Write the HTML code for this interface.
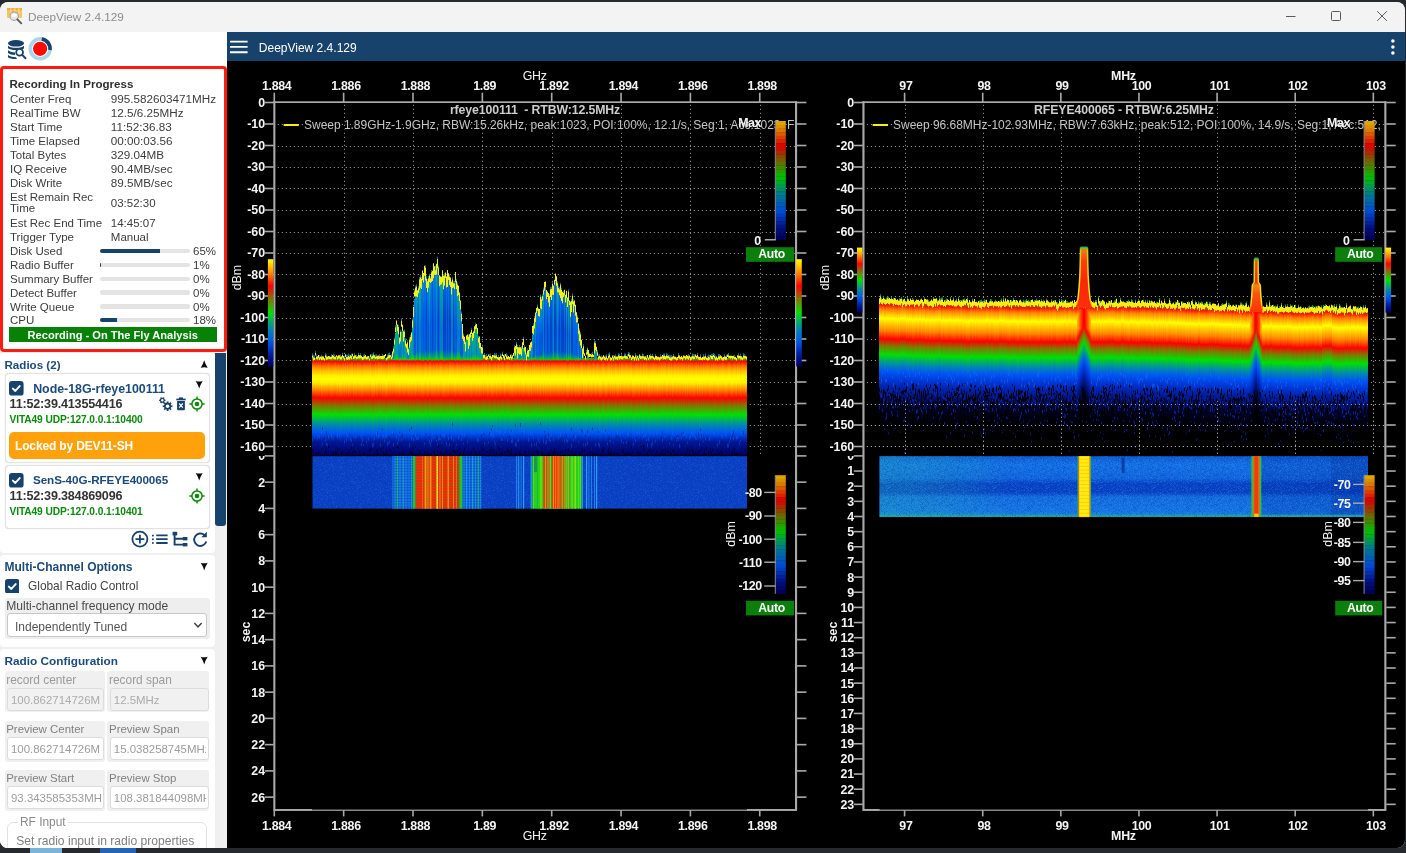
<!DOCTYPE html>
<html><head><meta charset="utf-8"><title>DeepView 2.4.129</title><style>
html,body{margin:0;padding:0}
body{width:1406px;height:853px;overflow:hidden;position:relative;background:#262a2e;font-family:"Liberation Sans",sans-serif;}
.b{position:absolute;display:block}
.t{position:absolute;white-space:nowrap;font-family:"Liberation Sans",sans-serif;}
#win{position:absolute;left:0;top:1.8px;width:1404.7px;height:846.2px;border-radius:8px;overflow:hidden;background:#f0f0f0}
#in{position:absolute;left:0;top:-1.8px;width:1406px;height:853px;will-change:transform}
</style></head>
<body>
<div class="b" style="left:30px;top:848px;width:32px;height:5px;background:#7ab4d8"></div><div class="b" style="left:100px;top:848px;width:36px;height:5px;background:#2464b4"></div>
<div id="win"><div id="in">
<div class="b" style="left:0px;top:1.8px;width:1404.7px;height:30.2px;background:#f3f3f3;border-radius:8px 8px 0 0;"></div>
<svg class="b" style="left:6px;top:7px" width="18" height="18" viewBox="0 0 18 18">
      <rect x="1" y="1" width="15" height="10" rx="1" fill="#f6c460"/>
      <rect x="1" y="1" width="15" height="2.2" fill="#f0b040"/>
      <rect x="4" y="1.5" width="1.5" height="9" fill="#f9d890"/><rect x="8" y="1.5" width="1.5" height="9" fill="#f9d890"/><rect x="12" y="1.5" width="1.5" height="9" fill="#f9d890"/>
      <circle cx="8.2" cy="9.2" r="4.2" fill="#e8e8e8" stroke="#a0a0a0" stroke-width="1.1"/>
      <ellipse cx="8.2" cy="8.2" rx="2.6" ry="1.6" fill="#ffffff"/>
      <path d="M11.3 12.3 L15.3 16.3" stroke="#555" stroke-width="1.8" stroke-linecap="round"/>
    </svg>
<div class="t" style="left:28px;top:8.80px;height:16px;line-height:16px;font-size:11.75px;color:#8c8c8c;font-weight:400;">DeepView 2.4.129</div>
<svg class="b" style="left:1280px;top:6px" width="115" height="22" viewBox="1280 6 115 22">
      <path d="M1286 16.5 H1295.5" stroke="#5a5a5a" stroke-width="1" fill="none"/>
      <rect x="1331.5" y="11.5" width="9" height="9" rx="1" stroke="#5a5a5a" stroke-width="1" fill="none"/>
      <path d="M1377.2 11.2 L1386.9 20.9 M1386.9 11.2 L1377.2 20.9" stroke="#5a5a5a" stroke-width="1" fill="none"/>
    </svg>
<div class="b" style="left:227px;top:31.6px;width:1177.7px;height:30.1px;background:#17426b;"></div>
<svg class="b" style="left:229px;top:38px" width="22" height="18" viewBox="229 38 22 18">
      <path d="M230 41.6 H247.6 M230 46.9 H247.6 M230 52.2 H247.6" stroke="#fff" stroke-width="1.9" fill="none"/></svg>
<div class="t" style="left:258.8px;top:39.50px;height:16px;line-height:16px;font-size:12.0px;color:#ffffff;font-weight:400;">DeepView 2.4.129</div>
<svg class="b" style="left:1388px;top:38px" width="10" height="20" viewBox="1388 38 10 20">
      <circle cx="1392.9" cy="40.9" r="1.75" fill="#fff"/><circle cx="1392.9" cy="46.95" r="1.75" fill="#fff"/><circle cx="1392.9" cy="53" r="1.75" fill="#fff"/></svg>
<div class="b" style="left:0px;top:32px;width:227px;height:34px;background:#ffffff;"></div>
<svg class="b" style="left:6px;top:38px" width="22" height="22" viewBox="6 38 22 22">
      <ellipse cx="16" cy="43.3" rx="8" ry="3.3" fill="#17426b"/>
      <path d="M8 45.5 C9.5 48.6 22.5 48.6 24 45.5 L24 48.5 C22.5 49.6 19 50 16 50 C12 50 9.5 49.2 8 48.2 Z" fill="#17426b"/>
      <path d="M8 50 C9 51.5 12 52.3 15 52.4 L15 55 C12 54.9 9.5 54.2 8 53 Z" fill="#17426b"/>
      <path d="M8 54.8 C9 56.2 12.5 57.2 16 57.3 L17 59 C13 59.3 9.5 58.5 8 57.2 Z" fill="#17426b"/>
      <circle cx="19.6" cy="52.2" r="3.4" fill="#fff" stroke="#17426b" stroke-width="1.8"/>
      <path d="M22.2 54.9 L25.5 58.3" stroke="#17426b" stroke-width="2" stroke-linecap="round"/>
    </svg>
<svg class="b" style="left:27px;top:36px" width="27" height="27" viewBox="27 36 27 27">
      <circle cx="40.2" cy="48.8" r="9.9" fill="none" stroke="#a9d6e8" stroke-width="3.6"/>
      <path d="M41.8 39 A9.9 9.9 0 0 1 50 50" fill="none" stroke="#17426b" stroke-width="3.6"/>
      <circle cx="40.1" cy="48.8" r="7.1" fill="#ff0a00"/>
    </svg>
<div class="b" style="left:0px;top:352px;width:227px;height:500px;background:#f0f0f0;"></div>
<div class="b" style="left:0px;top:66px;width:227px;height:286px;background:#fff;border:3px solid #ff1b10;border-radius:4px;box-sizing:border-box;"></div>
<div class="t" style="left:9.5px;top:75.80px;height:16px;line-height:16px;font-size:11.55px;color:#303030;font-weight:700;">Recording In Progress</div>
<div class="t" style="left:10px;top:90.80px;height:16px;line-height:16px;font-size:11.5px;color:#3c3c3c;font-weight:400;">Center Freq</div>
<div class="t" style="left:110.8px;top:90.80px;height:16px;line-height:16px;font-size:11.7px;color:#3c3c3c;font-weight:400;">995.582603471MHz</div>
<div class="t" style="left:10px;top:104.60px;height:16px;line-height:16px;font-size:11.5px;color:#3c3c3c;font-weight:400;">RealTime BW</div>
<div class="t" style="left:110.8px;top:104.60px;height:16px;line-height:16px;font-size:11.7px;color:#3c3c3c;font-weight:400;">12.5/6.25MHz</div>
<div class="t" style="left:10px;top:118.70px;height:16px;line-height:16px;font-size:11.5px;color:#3c3c3c;font-weight:400;">Start Time</div>
<div class="t" style="left:110.8px;top:118.70px;height:16px;line-height:16px;font-size:11.7px;color:#3c3c3c;font-weight:400;">11:52:36.83</div>
<div class="t" style="left:10px;top:132.60px;height:16px;line-height:16px;font-size:11.5px;color:#3c3c3c;font-weight:400;">Time Elapsed</div>
<div class="t" style="left:110.8px;top:132.60px;height:16px;line-height:16px;font-size:11.7px;color:#3c3c3c;font-weight:400;">00:00:03.56</div>
<div class="t" style="left:10px;top:146.60px;height:16px;line-height:16px;font-size:11.5px;color:#3c3c3c;font-weight:400;">Total Bytes</div>
<div class="t" style="left:110.8px;top:146.60px;height:16px;line-height:16px;font-size:11.7px;color:#3c3c3c;font-weight:400;">329.04MB</div>
<div class="t" style="left:10px;top:160.60px;height:16px;line-height:16px;font-size:11.5px;color:#3c3c3c;font-weight:400;">IQ Receive</div>
<div class="t" style="left:110.8px;top:160.60px;height:16px;line-height:16px;font-size:11.7px;color:#3c3c3c;font-weight:400;">90.4MB/sec</div>
<div class="t" style="left:10px;top:174.60px;height:16px;line-height:16px;font-size:11.5px;color:#3c3c3c;font-weight:400;">Disk Write</div>
<div class="t" style="left:110.8px;top:174.60px;height:16px;line-height:16px;font-size:11.7px;color:#3c3c3c;font-weight:400;">89.5MB/sec</div>
<div class="t" style="left:10px;top:188.80px;height:16px;line-height:16px;font-size:11.5px;color:#3c3c3c;font-weight:400;">Est Remain Rec</div>
<div class="t" style="left:10px;top:199.60px;height:16px;line-height:16px;font-size:11.5px;color:#3c3c3c;font-weight:400;">Time</div>
<div class="t" style="left:110.8px;top:194.60px;height:16px;line-height:16px;font-size:11.5px;color:#3c3c3c;font-weight:400;">03:52:30</div>
<div class="t" style="left:10px;top:214.60px;height:16px;line-height:16px;font-size:11.5px;color:#3c3c3c;font-weight:400;">Est Rec End Time</div>
<div class="t" style="left:110.8px;top:214.60px;height:16px;line-height:16px;font-size:11.5px;color:#3c3c3c;font-weight:400;">14:45:07</div>
<div class="t" style="left:10px;top:229.00px;height:16px;line-height:16px;font-size:11.5px;color:#3c3c3c;font-weight:400;">Trigger Type</div>
<div class="t" style="left:110.8px;top:229.00px;height:16px;line-height:16px;font-size:11.5px;color:#3c3c3c;font-weight:400;">Manual</div>
<div class="t" style="left:10px;top:242.80px;height:16px;line-height:16px;font-size:11.5px;color:#3c3c3c;font-weight:400;">Disk Used</div>
<div class="b" style="left:100px;top:248.60000000000002px;width:90px;height:4.4px;background:#e4e4e4;border-radius:2px;"></div>
<div class="b" style="left:100px;top:248.60000000000002px;width:60.0px;height:4.4px;background:#17426b;border-radius:2px 0 0 2px;"></div>
<div class="t" style="left:193px;top:242.80px;height:16px;line-height:16px;font-size:11.5px;color:#3c3c3c;font-weight:400;">65%</div>
<div class="t" style="left:10px;top:256.80px;height:16px;line-height:16px;font-size:11.5px;color:#3c3c3c;font-weight:400;">Radio Buffer</div>
<div class="b" style="left:100px;top:262.6px;width:90px;height:4.4px;background:#e4e4e4;border-radius:2px;"></div>
<div class="b" style="left:100px;top:262.6px;width:1.2px;height:4.4px;background:#17426b;border-radius:2px 0 0 2px;"></div>
<div class="t" style="left:193px;top:256.80px;height:16px;line-height:16px;font-size:11.5px;color:#3c3c3c;font-weight:400;">1%</div>
<div class="t" style="left:10px;top:270.80px;height:16px;line-height:16px;font-size:11.5px;color:#3c3c3c;font-weight:400;">Summary Buffer</div>
<div class="b" style="left:100px;top:276.6px;width:90px;height:4.4px;background:#e4e4e4;border-radius:2px;"></div>
<div class="t" style="left:193px;top:270.80px;height:16px;line-height:16px;font-size:11.5px;color:#3c3c3c;font-weight:400;">0%</div>
<div class="t" style="left:10px;top:284.60px;height:16px;line-height:16px;font-size:11.5px;color:#3c3c3c;font-weight:400;">Detect Buffer</div>
<div class="b" style="left:100px;top:290.40000000000003px;width:90px;height:4.4px;background:#e4e4e4;border-radius:2px;"></div>
<div class="t" style="left:193px;top:284.60px;height:16px;line-height:16px;font-size:11.5px;color:#3c3c3c;font-weight:400;">0%</div>
<div class="t" style="left:10px;top:298.60px;height:16px;line-height:16px;font-size:11.5px;color:#3c3c3c;font-weight:400;">Write Queue</div>
<div class="b" style="left:100px;top:304.40000000000003px;width:90px;height:4.4px;background:#e4e4e4;border-radius:2px;"></div>
<div class="t" style="left:193px;top:298.60px;height:16px;line-height:16px;font-size:11.5px;color:#3c3c3c;font-weight:400;">0%</div>
<div class="t" style="left:10px;top:312.30px;height:16px;line-height:16px;font-size:11.5px;color:#3c3c3c;font-weight:400;">CPU</div>
<div class="b" style="left:100px;top:318.1px;width:90px;height:4.4px;background:#e4e4e4;border-radius:2px;"></div>
<div class="b" style="left:100px;top:318.1px;width:17.25px;height:4.4px;background:#17426b;border-radius:2px 0 0 2px;"></div>
<div class="t" style="left:193px;top:312.30px;height:16px;line-height:16px;font-size:11.5px;color:#3c3c3c;font-weight:400;">18%</div>
<div class="b" style="left:9px;top:327px;width:207.5px;height:14.8px;background:#078207;"></div>
<div class="t" style="left:9px;top:327px;width:207.5px;height:15px;line-height:17.6px;text-align:center;font-size:11.1px;color:#fff;font-weight:700;letter-spacing:0px">Recording - On The Fly Analysis</div>
<div class="b" style="left:0px;top:353px;width:214.5px;height:199.5px;background:#fff;border-radius:4px;"></div>
<div class="t" style="left:4.5px;top:356.60px;height:16px;line-height:16px;font-size:11.6px;color:#1b4b7a;font-weight:700;">Radios (2)</div>
<svg class="b" style="left:0;top:0" width="227" height="853"><path d="M204.20000000000002 360.2 Q205.20000000000002 363.8 207.70000000000002 367.8 Q204.20000000000002 366.8 200.70000000000002 367.8 Q203.20000000000002 363.8 204.20000000000002 360.2Z" fill="#0c0c0c"/></svg>
<div class="b" style="left:4.5px;top:372.5px;width:205px;height:90.5px;background:#fff;border:1px solid #e2e2e2;border-radius:4px;box-sizing:border-box;box-shadow:0 0 1px #ccc;"></div>
<svg class="b" style="left:9px;top:381px" width="14.6" height="14.6" viewBox="0 0 15 15"><rect x="0" y="0" width="15" height="15" rx="3" fill="#17426b"/><path d="M4 7.8 L6.5 10.2 L11 5.2" stroke="#fff" stroke-width="2" fill="none" stroke-linecap="round" stroke-linejoin="round"/></svg>
<div class="t" style="left:33.2px;top:380.80px;height:16px;line-height:16px;font-size:12.45px;color:#1b4b7a;font-weight:700;letter-spacing:-0.05px;">Node-18G-rfeye100111</div>
<svg class="b" style="left:0;top:0" width="227" height="853"><path d="M199.20000000000002 388.6 Q200.20000000000002 385.0 202.70000000000002 381.0 Q199.20000000000002 382.0 195.70000000000002 381.0 Q198.20000000000002 385.0 199.20000000000002 388.6Z" fill="#0c0c0c"/></svg>
<div class="t" style="left:9.6px;top:395.80px;height:16px;line-height:16px;font-size:12.6px;color:#333;font-weight:700;letter-spacing:-0.2px;">11:52:39.413554416</div>
<svg class="b" style="left:157px;top:396px" width="17" height="16" viewBox="157 396 17 16"><polygon points="165.53,399.64 165.53,400.96 164.67,401.12 164.20,401.94 164.48,402.77 163.35,403.43 162.77,402.76 161.83,402.76 161.25,403.43 160.12,402.77 160.40,401.94 159.93,401.12 159.07,400.96 159.07,399.64 159.93,399.48 160.40,398.66 160.12,397.83 161.25,397.17 161.83,397.84 162.77,397.84 163.35,397.17 164.48,397.83 164.20,398.66 164.67,399.48" fill="#17426b"/><circle cx="162.3" cy="400.3" r="1.19" fill="#fff"/><polygon points="172.40,405.23 172.40,407.17 171.25,406.95 170.71,408.25 171.68,408.91 170.31,410.28 169.65,409.31 168.35,409.85 168.57,411.00 166.63,411.00 166.85,409.85 165.55,409.31 164.89,410.28 163.52,408.91 164.49,408.25 163.95,406.95 162.80,407.17 162.80,405.23 163.95,405.45 164.49,404.15 163.52,403.49 164.89,402.12 165.55,403.09 166.85,402.55 166.63,401.40 168.57,401.40 168.35,402.55 169.65,403.09 170.31,402.12 171.68,403.49 170.71,404.15 171.25,405.45" fill="#17426b"/><circle cx="167.6" cy="406.2" r="1.76" fill="#fff"/></svg>
<svg class="b" style="left:175px;top:396px" width="12" height="16" viewBox="175 396 12 16">
      <rect x="176.3" y="398.6" width="9.4" height="1.7" fill="#17426b"/><rect x="179" y="397.4" width="4" height="1.6" fill="#17426b"/>
      <path d="M177.1 401.1 H184.9 V409.2 Q184.9 410.3 183.8 410.3 H178.2 Q177.1 410.3 177.1 409.2 Z" fill="#17426b"/>
      <path d="M179.2 403.5 L182.8 407.6 M182.8 403.5 L179.2 407.6" stroke="#fff" stroke-width="1.2"/></svg>
<svg class="b" style="left:189px;top:396px" width="16" height="16" viewBox="-8 -8 16 16"><circle r="5.1" fill="none" stroke="#0b8a0b" stroke-width="1.5"/><circle r="2.3" fill="#0b8a0b"/><path d="M0 -7.6 V-5 M0 7.6 V5 M-7.6 0 H-5 M7.6 0 H5" stroke="#0b8a0b" stroke-width="1.5"/></svg>
<div class="t" style="left:9.5px;top:411.50px;height:16px;line-height:16px;font-size:10.2px;color:#0b8a0b;font-weight:700;letter-spacing:-0.1px;">VITA49 UDP:127.0.0.1:10400</div>
<div class="b" style="left:9px;top:431.8px;width:196px;height:27.4px;background:#ffa10a;border-radius:5px;"></div>
<div class="t" style="left:15px;top:437.80px;height:16px;line-height:16px;font-size:12.0px;color:#fff;font-weight:700;letter-spacing:-0.15px;">Locked by DEV11-SH</div>
<div class="b" style="left:4.5px;top:464.5px;width:205px;height:64px;background:#fff;border:1px solid #e2e2e2;border-radius:4px;box-sizing:border-box;box-shadow:0 0 1px #ccc;"></div>
<svg class="b" style="left:9px;top:473px" width="14.6" height="14.6" viewBox="0 0 15 15"><rect x="0" y="0" width="15" height="15" rx="3" fill="#17426b"/><path d="M4 7.8 L6.5 10.2 L11 5.2" stroke="#fff" stroke-width="2" fill="none" stroke-linecap="round" stroke-linejoin="round"/></svg>
<div class="t" style="left:33px;top:472.30px;height:16px;line-height:16px;font-size:11.7px;color:#1b4b7a;font-weight:700;letter-spacing:-0.1px;">SenS-40G-RFEYE400065</div>
<svg class="b" style="left:0;top:0" width="227" height="853"><path d="M199.20000000000002 480.6 Q200.20000000000002 477.0 202.70000000000002 473.0 Q199.20000000000002 474.0 195.70000000000002 473.0 Q198.20000000000002 477.0 199.20000000000002 480.6Z" fill="#0c0c0c"/></svg>
<div class="t" style="left:9.6px;top:487.60px;height:16px;line-height:16px;font-size:12.6px;color:#333;font-weight:700;letter-spacing:-0.2px;">11:52:39.384869096</div>
<svg class="b" style="left:189px;top:488px" width="16" height="16" viewBox="-8 -8 16 16"><circle r="5.1" fill="none" stroke="#0b8a0b" stroke-width="1.5"/><circle r="2.3" fill="#0b8a0b"/><path d="M0 -7.6 V-5 M0 7.6 V5 M-7.6 0 H-5 M7.6 0 H5" stroke="#0b8a0b" stroke-width="1.5"/></svg>
<div class="t" style="left:9.5px;top:503.60px;height:16px;line-height:16px;font-size:10.2px;color:#0b8a0b;font-weight:700;letter-spacing:-0.1px;">VITA49 UDP:127.0.0.1:10401</div>
<svg class="b" style="left:128px;top:529px" width="84" height="22" viewBox="128 529 84 22">
      <circle cx="139.9" cy="539.1" r="7.5" fill="none" stroke="#17426b" stroke-width="1.8"/>
      <path d="M135.5 539.1 H144.3 M139.9 534.7 V543.5" stroke="#17426b" stroke-width="1.8"/>
      <path d="M156.2 535.4 H167.6 M156.2 539.2 H167.6 M156.2 543 H167.6" stroke="#17426b" stroke-width="1.8"/>
      <rect x="152" y="534.8" width="1.8" height="1.6" fill="#17426b"/><rect x="152" y="538.5" width="1.8" height="1.6" fill="#17426b"/><rect x="152" y="542.2" width="1.8" height="1.6" fill="#17426b"/>
      <rect x="172.6" y="531.8" width="4.6" height="3.6" fill="#17426b"/><rect x="182.8" y="537" width="4.6" height="3.4" fill="#17426b"/><rect x="182.8" y="543" width="4.6" height="3.4" fill="#17426b"/>
      <path d="M174.6 535 V544.6 H183 M174.6 538.8 H183" stroke="#17426b" stroke-width="1.9" fill="none"/>
      <path d="M204.6 535.2 A6.2 6.2 0 1 0 206.3 541.5" stroke="#17426b" stroke-width="1.9" fill="none"/>
      <path d="M206.8 531.8 V537.3 H201.3 Z" fill="#17426b"/>
    </svg>
<div class="b" style="left:214.9px;top:352.5px;width:11.6px;height:173.6px;background:#17426b;border-radius:0 0 3px 3px;"></div>
<div class="b" style="left:0px;top:555px;width:214.5px;height:92px;background:#fff;border-radius:4px;"></div>
<div class="t" style="left:4.5px;top:558.80px;height:16px;line-height:16px;font-size:12.0px;color:#1b4b7a;font-weight:700;">Multi-Channel Options</div>
<svg class="b" style="left:0;top:0" width="227" height="853"><path d="M204.20000000000002 570.4 Q205.20000000000002 566.8 207.70000000000002 562.8 Q204.20000000000002 563.8 200.70000000000002 562.8 Q203.20000000000002 566.8 204.20000000000002 570.4Z" fill="#0c0c0c"/></svg>
<svg class="b" style="left:4.5px;top:578.6px" width="14.6" height="14.6" viewBox="0 0 15 15"><rect x="0" y="0" width="15" height="15" rx="3" fill="#17426b"/><path d="M4 7.8 L6.5 10.2 L11 5.2" stroke="#fff" stroke-width="2" fill="none" stroke-linecap="round" stroke-linejoin="round"/></svg>
<div class="t" style="left:28px;top:578.00px;height:16px;line-height:16px;font-size:11.9px;color:#444;font-weight:400;">Global Radio Control</div>
<div class="b" style="left:4.5px;top:597.5px;width:205px;height:41.5px;background:#eeeeee;border-radius:3px;"></div>
<div class="t" style="left:6.2px;top:598.30px;height:16px;line-height:16px;font-size:12.1px;color:#4a4a4a;font-weight:400;">Multi-channel frequency mode</div>
<div class="b" style="left:6.7px;top:613.3px;width:200.8px;height:23.8px;background:#fff;border:1px solid #c8c8c8;border-radius:3px;box-sizing:border-box;"></div>
<div class="t" style="left:15px;top:619.00px;height:16px;line-height:16px;font-size:12.0px;color:#555;font-weight:400;">Independently Tuned</div>
<svg class="b" style="left:192px;top:620px" width="12" height="10" viewBox="192 620 12 10"><path d="M194.3 623 L198 626.8 L201.7 623" stroke="#444" stroke-width="1.5" fill="none"/></svg>
<div class="b" style="left:0px;top:649px;width:214.5px;height:210px;background:#fff;border-radius:4px 4px 0 0;"></div>
<div class="t" style="left:4.5px;top:652.80px;height:16px;line-height:16px;font-size:11.8px;color:#1b4b7a;font-weight:700;">Radio Configuration</div>
<svg class="b" style="left:0;top:0" width="227" height="853"><path d="M204.20000000000002 664.4 Q205.20000000000002 660.8 207.70000000000002 656.8 Q204.20000000000002 657.8 200.70000000000002 656.8 Q203.20000000000002 660.8 204.20000000000002 664.4Z" fill="#0c0c0c"/></svg>
<div class="b" style="left:4.5px;top:671.3px;width:100.5px;height:41px;background:#f0f0f0;border-radius:3px;"></div>
<div class="t" style="left:6.2px;top:671.50px;height:16px;line-height:16px;font-size:11.9px;color:#9a9a9a;font-weight:400;">record center</div>
<div class="b" style="left:6.7px;top:687.5999999999999px;width:97.5px;height:23.5px;background:#f1f1f1;border:1px solid #dcdcdc;border-radius:3px;box-sizing:border-box;overflow:hidden;"></div>
<div class="t" style="left:11.0px;top:691.8px;width:91.0px;overflow:hidden;height:16px;line-height:16px;font-size:11.45px;color:#ababab;">100.862714726M</div>
<div class="b" style="left:107.3px;top:671.3px;width:102.2px;height:41px;background:#f0f0f0;border-radius:3px;"></div>
<div class="t" style="left:109.0px;top:671.50px;height:16px;line-height:16px;font-size:11.9px;color:#9a9a9a;font-weight:400;">record span</div>
<div class="b" style="left:109.5px;top:687.5999999999999px;width:99.2px;height:23.5px;background:#f1f1f1;border:1px solid #dcdcdc;border-radius:3px;box-sizing:border-box;overflow:hidden;"></div>
<div class="t" style="left:113.8px;top:691.8px;width:92.7px;overflow:hidden;height:16px;line-height:16px;font-size:11.45px;color:#ababab;">12.5MHz</div>
<div class="b" style="left:4.5px;top:720.6px;width:100.5px;height:41px;background:#f0f0f0;border-radius:3px;"></div>
<div class="t" style="left:6.2px;top:720.80px;height:16px;line-height:16px;font-size:11.45px;color:#808080;font-weight:400;">Preview Center</div>
<div class="b" style="left:6.7px;top:736.9px;width:97.5px;height:23.5px;background:#fff;border:1px solid #dcdcdc;border-radius:3px;box-sizing:border-box;overflow:hidden;"></div>
<div class="t" style="left:11.0px;top:741.1px;width:91.0px;overflow:hidden;height:16px;line-height:16px;font-size:11.45px;color:#9c9c9c;">100.862714726M</div>
<div class="b" style="left:107.3px;top:720.6px;width:102.2px;height:41px;background:#f0f0f0;border-radius:3px;"></div>
<div class="t" style="left:109.0px;top:720.80px;height:16px;line-height:16px;font-size:11.45px;color:#808080;font-weight:400;">Preview Span</div>
<div class="b" style="left:109.5px;top:736.9px;width:99.2px;height:23.5px;background:#fff;border:1px solid #dcdcdc;border-radius:3px;box-sizing:border-box;overflow:hidden;"></div>
<div class="t" style="left:113.8px;top:741.1px;width:92.7px;overflow:hidden;height:16px;line-height:16px;font-size:11.45px;color:#9c9c9c;">15.038258745MHz</div>
<div class="b" style="left:4.5px;top:769.6px;width:100.5px;height:41px;background:#f0f0f0;border-radius:3px;"></div>
<div class="t" style="left:6.2px;top:769.80px;height:16px;line-height:16px;font-size:11.45px;color:#808080;font-weight:400;">Preview Start</div>
<div class="b" style="left:6.7px;top:785.9px;width:97.5px;height:23.5px;background:#fff;border:1px solid #dcdcdc;border-radius:3px;box-sizing:border-box;overflow:hidden;"></div>
<div class="t" style="left:11.0px;top:790.1px;width:91.0px;overflow:hidden;height:16px;line-height:16px;font-size:11.45px;color:#9c9c9c;">93.343585353MHz</div>
<div class="b" style="left:107.3px;top:769.6px;width:102.2px;height:41px;background:#f0f0f0;border-radius:3px;"></div>
<div class="t" style="left:109.0px;top:769.80px;height:16px;line-height:16px;font-size:11.45px;color:#808080;font-weight:400;">Preview Stop</div>
<div class="b" style="left:109.5px;top:785.9px;width:99.2px;height:23.5px;background:#fff;border:1px solid #dcdcdc;border-radius:3px;box-sizing:border-box;overflow:hidden;"></div>
<div class="t" style="left:113.8px;top:790.1px;width:92.7px;overflow:hidden;height:16px;line-height:16px;font-size:11.45px;color:#9c9c9c;">108.381844098MHz</div>
<div class="b" style="left:6.8px;top:822.2px;width:200.4px;height:40px;border:1.5px solid #dfe3e8;border-radius:6px;box-sizing:border-box;"></div>
<div class="b" style="left:17.5px;top:815px;width:50px;height:14px;background:#fff;"></div>
<div class="t" style="left:20px;top:813.80px;height:16px;line-height:16px;font-size:11.9px;color:#8a8a8a;font-weight:400;">RF Input</div>
<div class="t" style="left:16.2px;top:832.80px;height:16px;line-height:16px;font-size:12.1px;color:#808080;font-weight:400;">Set radio input in radio properties</div>
<svg class="b" style="left:227px;top:61px" width="1178" height="787" viewBox="227 61 1178 787" font-family="Liberation Sans, sans-serif"><defs><pattern id="nz" width="53" height="53" patternUnits="userSpaceOnUse"><path d="M5 0.5h1M6 0.5h1M15 0.5h1M21 0.5h1M25 0.5h1M37 0.5h1M38 0.5h1M12 1.5h1M15 1.5h1M18 1.5h1M22 1.5h1M24 1.5h1M32 1.5h1M34 1.5h1M38 1.5h1M39 1.5h1M7 2.5h1M10 2.5h1M13 2.5h1M20 2.5h1M21 2.5h1M35 2.5h1M45 2.5h1M4 3.5h1M15 3.5h1M24 3.5h1M25 3.5h1M40 3.5h1M44 3.5h1M51 3.5h1M21 4.5h1M24 4.5h1M31 4.5h1M32 4.5h1M33 4.5h1M34 4.5h1M35 4.5h1M38 4.5h1M48 4.5h1M52 4.5h1M17 5.5h1M27 5.5h1M35 5.5h1M37 5.5h1M38 5.5h1M40 5.5h1M41 5.5h1M42 5.5h1M45 5.5h1M47 5.5h1M1 6.5h1M5 6.5h1M8 6.5h1M22 6.5h1M35 6.5h1M36 6.5h1M4 7.5h1M11 7.5h1M44 7.5h1M45 7.5h1M51 7.5h1M7 8.5h1M10 8.5h1M13 8.5h1M27 8.5h1M39 8.5h1M41 8.5h1M50 8.5h1M6 9.5h1M17 9.5h1M19 9.5h1M20 9.5h1M30 9.5h1M38 9.5h1M0 10.5h1M8 10.5h1M15 10.5h1M18 10.5h1M21 10.5h1M27 10.5h1M40 10.5h1M41 10.5h1M42 10.5h1M9 11.5h1M12 11.5h1M19 11.5h1M20 11.5h1M23 11.5h1M24 11.5h1M28 11.5h1M31 11.5h1M34 11.5h1M39 11.5h1M40 11.5h1M52 11.5h1M3 12.5h1M4 12.5h1M5 12.5h1M7 12.5h1M8 12.5h1M17 12.5h1M21 12.5h1M24 12.5h1M47 12.5h1M49 12.5h1M0 13.5h1M11 13.5h1M14 13.5h1M16 13.5h1M17 13.5h1M20 13.5h1M21 13.5h1M24 13.5h1M36 13.5h1M38 13.5h1M39 13.5h1M43 13.5h1M1 14.5h1M9 14.5h1M12 14.5h1M23 14.5h1M45 14.5h1M50 14.5h1M5 15.5h1M8 15.5h1M9 15.5h1M30 15.5h1M31 15.5h1M35 15.5h1M42 15.5h1M44 15.5h1M47 15.5h1M49 15.5h1M2 16.5h1M9 16.5h1M17 16.5h1M39 16.5h1M47 16.5h1M1 17.5h1M20 17.5h1M23 17.5h1M26 17.5h1M32 17.5h1M35 17.5h1M40 17.5h1M43 17.5h1M49 17.5h1M50 17.5h1M3 18.5h1M7 18.5h1M11 18.5h1M12 18.5h1M13 18.5h1M16 18.5h1M27 18.5h1M47 18.5h1M51 18.5h1M52 18.5h1M6 19.5h1M9 19.5h1M24 19.5h1M39 19.5h1M43 19.5h1M9 20.5h1M13 20.5h1M14 20.5h1M17 20.5h1M27 20.5h1M36 20.5h1M37 20.5h1M39 20.5h1M49 20.5h1M52 20.5h1M3 21.5h1M4 21.5h1M15 21.5h1M17 21.5h1M21 21.5h1M33 21.5h1M42 21.5h1M50 21.5h1M2 22.5h1M7 22.5h1M15 22.5h1M31 22.5h1M50 22.5h1M8 23.5h1M19 23.5h1M29 23.5h1M38 23.5h1M39 23.5h1M44 23.5h1M50 23.5h1M1 24.5h1M16 24.5h1M39 24.5h1M49 24.5h1M1 25.5h1M6 25.5h1M11 25.5h1M14 25.5h1M15 25.5h1M16 25.5h1M24 25.5h1M28 25.5h1M32 25.5h1M45 25.5h1M51 25.5h1M52 25.5h1M11 26.5h1M14 26.5h1M19 26.5h1M24 26.5h1M30 26.5h1M32 26.5h1M36 26.5h1M42 26.5h1M44 26.5h1M46 26.5h1M49 26.5h1M2 27.5h1M6 27.5h1M7 27.5h1M16 27.5h1M29 27.5h1M35 27.5h1M43 27.5h1M2 28.5h1M18 28.5h1M21 28.5h1M28 28.5h1M36 28.5h1M42 28.5h1M8 29.5h1M11 29.5h1M16 29.5h1M18 29.5h1M27 29.5h1M34 29.5h1M36 29.5h1M41 29.5h1M52 29.5h1M9 30.5h1M18 30.5h1M23 30.5h1M29 30.5h1M31 30.5h1M40 30.5h1M42 30.5h1M43 30.5h1M47 30.5h1M50 30.5h1M6 31.5h1M12 31.5h1M17 31.5h1M34 31.5h1M42 31.5h1M7 32.5h1M13 32.5h1M16 32.5h1M26 32.5h1M29 32.5h1M39 32.5h1M44 32.5h1M45 32.5h1M46 32.5h1M47 32.5h1M0 33.5h1M4 33.5h1M10 33.5h1M13 33.5h1M22 33.5h1M25 33.5h1M32 33.5h1M50 33.5h1M47 34.5h1M0 35.5h1M6 35.5h1M19 35.5h1M21 35.5h1M24 35.5h1M33 35.5h1M35 35.5h1M38 35.5h1M51 35.5h1M14 36.5h1M21 36.5h1M25 36.5h1M30 36.5h1M35 36.5h1M38 36.5h1M39 36.5h1M49 36.5h1M50 36.5h1M0 37.5h1M9 37.5h1M15 37.5h1M19 37.5h1M21 37.5h1M31 37.5h1M34 37.5h1M37 37.5h1M39 37.5h1M49 37.5h1M4 38.5h1M25 38.5h1M29 38.5h1M46 38.5h1M51 38.5h1M4 39.5h1M13 39.5h1M16 39.5h1M23 39.5h1M24 39.5h1M27 39.5h1M48 39.5h1M51 39.5h1M1 40.5h1M3 40.5h1M8 40.5h1M10 40.5h1M12 40.5h1M13 40.5h1M14 40.5h1M33 40.5h1M40 40.5h1M4 41.5h1M6 41.5h1M11 41.5h1M14 41.5h1M17 41.5h1M37 41.5h1M42 41.5h1M51 41.5h1M52 41.5h1M7 42.5h1M13 42.5h1M14 42.5h1M15 42.5h1M21 42.5h1M22 42.5h1M24 42.5h1M26 42.5h1M33 42.5h1M43 42.5h1M44 42.5h1M12 43.5h1M19 43.5h1M23 43.5h1M31 43.5h1M33 43.5h1M38 43.5h1M43 43.5h1M0 44.5h1M16 44.5h1M21 44.5h1M24 44.5h1M47 44.5h1M2 45.5h1M11 45.5h1M14 45.5h1M15 45.5h1M23 45.5h1M41 45.5h1M50 45.5h1M1 46.5h1M2 46.5h1M8 46.5h1M18 46.5h1M20 46.5h1M25 46.5h1M30 46.5h1M32 46.5h1M37 46.5h1M48 46.5h1M7 47.5h1M8 47.5h1M14 47.5h1M33 47.5h1M36 47.5h1M37 47.5h1M4 48.5h1M7 48.5h1M26 48.5h1M33 48.5h1M41 48.5h1M42 48.5h1M49 48.5h1M5 49.5h1M15 49.5h1M17 49.5h1M20 49.5h1M22 49.5h1M24 49.5h1M26 49.5h1M38 49.5h1M43 49.5h1M24 50.5h1M25 50.5h1M26 50.5h1M30 50.5h1M39 50.5h1M41 50.5h1M42 50.5h1M2 51.5h1M7 51.5h1M10 51.5h1M35 51.5h1M45 51.5h1M15 52.5h1M19 52.5h1M22 52.5h1M26 52.5h1M32 52.5h1" stroke="#49a8ff" stroke-width="1" opacity="0.2"/><path d="M0 0.5h1M8 0.5h1M9 0.5h1M24 0.5h1M39 0.5h1M43 0.5h1M2 1.5h1M8 1.5h1M11 1.5h1M19 1.5h1M31 1.5h1M35 1.5h1M41 1.5h1M2 2.5h1M3 2.5h1M24 2.5h1M29 2.5h1M32 2.5h1M38 2.5h1M39 2.5h1M41 2.5h1M42 2.5h1M51 2.5h1M3 3.5h1M6 3.5h1M9 3.5h1M10 3.5h1M16 3.5h1M18 3.5h1M32 3.5h1M37 3.5h1M39 3.5h1M42 3.5h1M0 4.5h1M1 4.5h1M8 4.5h1M13 4.5h1M16 4.5h1M25 4.5h1M26 4.5h1M40 4.5h1M41 4.5h1M46 4.5h1M0 5.5h1M14 5.5h1M25 5.5h1M44 5.5h1M12 6.5h1M13 6.5h1M14 6.5h1M27 6.5h1M42 6.5h1M43 6.5h1M44 6.5h1M46 6.5h1M47 6.5h1M50 6.5h1M2 7.5h1M3 7.5h1M7 7.5h1M26 7.5h1M27 7.5h1M32 7.5h1M33 7.5h1M34 7.5h1M35 7.5h1M39 7.5h1M41 7.5h1M47 7.5h1M2 8.5h1M8 8.5h1M18 8.5h1M22 8.5h1M33 8.5h1M36 8.5h1M48 8.5h1M49 8.5h1M3 9.5h1M8 9.5h1M18 9.5h1M23 9.5h1M24 9.5h1M32 9.5h1M35 9.5h1M36 9.5h1M48 9.5h1M6 10.5h1M20 10.5h1M43 10.5h1M44 10.5h1M50 10.5h1M1 11.5h1M8 11.5h1M10 11.5h1M14 11.5h1M15 11.5h1M16 11.5h1M18 11.5h1M21 11.5h1M33 11.5h1M36 11.5h1M42 11.5h1M46 11.5h1M47 11.5h1M48 11.5h1M6 12.5h1M11 12.5h1M18 12.5h1M22 12.5h1M29 12.5h1M37 12.5h1M40 12.5h1M41 12.5h1M1 13.5h1M19 13.5h1M25 13.5h1M27 13.5h1M34 13.5h1M35 13.5h1M41 13.5h1M45 13.5h1M5 14.5h1M18 14.5h1M24 14.5h1M25 14.5h1M42 14.5h1M44 14.5h1M47 14.5h1M52 14.5h1M4 15.5h1M6 15.5h1M16 15.5h1M17 15.5h1M23 15.5h1M27 15.5h1M28 15.5h1M34 15.5h1M36 15.5h1M43 15.5h1M50 15.5h1M51 15.5h1M1 16.5h1M8 16.5h1M15 16.5h1M16 16.5h1M28 16.5h1M29 16.5h1M40 16.5h1M51 16.5h1M8 17.5h1M10 17.5h1M13 17.5h1M14 17.5h1M17 17.5h1M19 17.5h1M21 17.5h1M24 17.5h1M25 17.5h1M33 17.5h1M36 17.5h1M38 17.5h1M41 17.5h1M45 17.5h1M52 17.5h1M0 18.5h1M10 18.5h1M17 18.5h1M21 18.5h1M26 18.5h1M37 18.5h1M41 18.5h1M44 18.5h1M45 18.5h1M46 18.5h1M14 19.5h1M21 19.5h1M23 19.5h1M29 19.5h1M48 19.5h1M2 20.5h1M10 20.5h1M16 20.5h1M32 20.5h1M33 20.5h1M41 20.5h1M42 20.5h1M13 21.5h1M22 21.5h1M26 21.5h1M30 21.5h1M31 21.5h1M41 21.5h1M44 21.5h1M45 21.5h1M47 21.5h1M0 22.5h1M1 22.5h1M10 22.5h1M11 22.5h1M12 22.5h1M16 22.5h1M19 22.5h1M21 22.5h1M24 22.5h1M36 22.5h1M39 22.5h1M45 22.5h1M7 23.5h1M11 23.5h1M18 23.5h1M25 23.5h1M31 23.5h1M33 23.5h1M35 23.5h1M41 23.5h1M43 23.5h1M51 23.5h1M52 23.5h1M5 24.5h1M7 24.5h1M10 24.5h1M11 24.5h1M19 24.5h1M24 24.5h1M26 24.5h1M35 24.5h1M40 24.5h1M42 24.5h1M0 25.5h1M10 25.5h1M22 25.5h1M25 25.5h1M27 25.5h1M39 25.5h1M43 25.5h1M46 25.5h1M50 25.5h1M1 26.5h1M3 26.5h1M10 26.5h1M21 26.5h1M27 26.5h1M38 26.5h1M40 26.5h1M41 26.5h1M48 26.5h1M17 27.5h1M19 27.5h1M21 27.5h1M27 27.5h1M30 27.5h1M33 27.5h1M34 27.5h1M36 27.5h1M38 27.5h1M48 27.5h1M49 27.5h1M50 27.5h1M51 27.5h1M8 28.5h1M13 28.5h1M24 28.5h1M29 28.5h1M32 28.5h1M35 28.5h1M38 28.5h1M41 28.5h1M44 28.5h1M45 28.5h1M47 28.5h1M50 28.5h1M51 28.5h1M3 29.5h1M9 29.5h1M10 29.5h1M20 29.5h1M21 29.5h1M23 29.5h1M25 29.5h1M33 29.5h1M39 29.5h1M42 29.5h1M46 29.5h1M0 30.5h1M16 30.5h1M20 30.5h1M22 30.5h1M45 30.5h1M48 30.5h1M0 31.5h1M7 31.5h1M10 31.5h1M21 31.5h1M22 31.5h1M23 31.5h1M29 31.5h1M33 31.5h1M41 31.5h1M3 32.5h1M5 32.5h1M11 32.5h1M12 32.5h1M17 32.5h1M18 32.5h1M22 32.5h1M31 32.5h1M32 32.5h1M50 32.5h1M2 33.5h1M5 33.5h1M6 33.5h1M20 33.5h1M21 33.5h1M23 33.5h1M33 33.5h1M48 33.5h1M0 34.5h1M8 34.5h1M14 34.5h1M16 34.5h1M21 34.5h1M29 34.5h1M33 34.5h1M34 34.5h1M38 34.5h1M4 35.5h1M8 35.5h1M15 35.5h1M28 35.5h1M36 35.5h1M52 35.5h1M0 36.5h1M2 36.5h1M3 36.5h1M5 36.5h1M10 36.5h1M13 36.5h1M17 36.5h1M19 36.5h1M26 36.5h1M28 36.5h1M36 36.5h1M51 36.5h1M5 37.5h1M8 37.5h1M16 37.5h1M23 37.5h1M29 37.5h1M36 37.5h1M38 37.5h1M40 37.5h1M48 37.5h1M51 37.5h1M5 38.5h1M7 38.5h1M17 38.5h1M30 38.5h1M41 38.5h1M49 38.5h1M52 38.5h1M3 39.5h1M8 39.5h1M11 39.5h1M15 39.5h1M28 39.5h1M30 39.5h1M39 39.5h1M45 39.5h1M49 39.5h1M5 40.5h1M16 40.5h1M25 40.5h1M26 40.5h1M28 40.5h1M37 40.5h1M38 40.5h1M46 40.5h1M50 40.5h1M52 40.5h1M0 41.5h1M21 41.5h1M28 41.5h1M33 41.5h1M34 41.5h1M45 41.5h1M47 41.5h1M49 41.5h1M3 42.5h1M4 42.5h1M11 42.5h1M18 42.5h1M19 42.5h1M30 42.5h1M34 42.5h1M37 42.5h1M39 42.5h1M42 42.5h1M45 42.5h1M52 42.5h1M2 43.5h1M4 43.5h1M5 43.5h1M25 43.5h1M28 43.5h1M32 43.5h1M39 43.5h1M40 43.5h1M50 43.5h1M3 44.5h1M4 44.5h1M7 44.5h1M8 44.5h1M13 44.5h1M18 44.5h1M35 44.5h1M36 44.5h1M45 44.5h1M50 44.5h1M51 44.5h1M9 45.5h1M12 45.5h1M21 45.5h1M25 45.5h1M27 45.5h1M34 45.5h1M37 45.5h1M38 45.5h1M44 45.5h1M46 45.5h1M0 46.5h1M3 46.5h1M19 46.5h1M21 46.5h1M23 46.5h1M24 46.5h1M31 46.5h1M43 46.5h1M44 46.5h1M45 46.5h1M3 47.5h1M17 47.5h1M22 47.5h1M32 47.5h1M38 47.5h1M39 47.5h1M41 47.5h1M50 47.5h1M3 48.5h1M12 48.5h1M13 48.5h1M22 48.5h1M27 48.5h1M38 48.5h1M43 48.5h1M6 49.5h1M16 49.5h1M33 49.5h1M44 49.5h1M46 49.5h1M48 49.5h1M51 49.5h1M1 50.5h1M5 50.5h1M6 50.5h1M11 50.5h1M14 50.5h1M21 50.5h1M36 50.5h1M37 50.5h1M38 50.5h1M50 50.5h1M5 51.5h1M8 51.5h1M16 51.5h1M24 51.5h1M29 51.5h1M33 51.5h1M41 51.5h1M47 51.5h1M48 51.5h1M49 51.5h1M50 51.5h1M51 51.5h1M52 51.5h1M10 52.5h1M24 52.5h1M25 52.5h1M27 52.5h1M37 52.5h1M40 52.5h1M43 52.5h1M44 52.5h1" stroke="#00208a" stroke-width="1" opacity="0.2"/><path d="M2 0.5h1M32 0.5h1M45 0.5h1M46 0.5h1M26 1.5h1M44 1.5h1M17 2.5h1M27 2.5h1M28 2.5h1M30 2.5h1M33 2.5h1M46 2.5h1M47 2.5h1M52 2.5h1M14 3.5h1M19 3.5h1M38 3.5h1M7 4.5h1M12 4.5h1M42 4.5h1M45 4.5h1M47 4.5h1M51 4.5h1M1 5.5h1M4 5.5h1M8 5.5h1M22 5.5h1M9 6.5h1M17 6.5h1M18 6.5h1M19 6.5h1M20 6.5h1M6 7.5h1M8 7.5h1M9 7.5h1M48 7.5h1M52 7.5h1M5 8.5h1M15 8.5h1M29 8.5h1M42 8.5h1M2 9.5h1M4 9.5h1M10 9.5h1M11 9.5h1M15 9.5h1M31 9.5h1M42 9.5h1M19 10.5h1M24 10.5h1M33 10.5h1M4 11.5h1M5 11.5h1M30 11.5h1M38 11.5h1M51 11.5h1M25 12.5h1M26 12.5h1M35 12.5h1M45 12.5h1M9 13.5h1M10 13.5h1M12 13.5h1M51 13.5h1M10 14.5h1M19 14.5h1M21 14.5h1M1 15.5h1M15 15.5h1M21 15.5h1M46 15.5h1M34 16.5h1M3 17.5h1M11 17.5h1M18 17.5h1M6 18.5h1M8 18.5h1M14 18.5h1M22 18.5h1M28 18.5h1M11 19.5h1M13 19.5h1M15 19.5h1M27 19.5h1M45 19.5h1M47 19.5h1M1 20.5h1M4 20.5h1M5 20.5h1M11 20.5h1M15 20.5h1M29 20.5h1M38 20.5h1M43 20.5h1M9 21.5h1M14 21.5h1M36 21.5h1M52 21.5h1M4 22.5h1M9 22.5h1M14 22.5h1M26 22.5h1M42 22.5h1M47 22.5h1M22 23.5h1M28 23.5h1M34 23.5h1M49 23.5h1M22 24.5h1M28 24.5h1M38 24.5h1M48 24.5h1M18 25.5h1M30 25.5h1M34 25.5h1M38 25.5h1M42 25.5h1M0 26.5h1M22 26.5h1M13 27.5h1M22 27.5h1M28 27.5h1M41 27.5h1M46 27.5h1M5 28.5h1M9 28.5h1M39 28.5h1M49 28.5h1M1 29.5h1M29 29.5h1M30 29.5h1M38 29.5h1M40 29.5h1M45 29.5h1M3 30.5h1M6 30.5h1M7 30.5h1M8 30.5h1M30 30.5h1M26 31.5h1M30 31.5h1M43 31.5h1M45 31.5h1M38 32.5h1M41 32.5h1M43 32.5h1M27 33.5h1M34 33.5h1M41 33.5h1M45 33.5h1M46 33.5h1M13 34.5h1M20 34.5h1M24 34.5h1M41 34.5h1M13 35.5h1M30 35.5h1M42 35.5h1M47 35.5h1M22 36.5h1M34 36.5h1M47 37.5h1M0 38.5h1M10 38.5h1M32 38.5h1M35 38.5h1M5 39.5h1M20 39.5h1M31 39.5h1M33 39.5h1M17 40.5h1M22 40.5h1M31 40.5h1M32 40.5h1M36 40.5h1M45 40.5h1M7 41.5h1M20 41.5h1M36 41.5h1M41 41.5h1M43 41.5h1M1 42.5h1M5 42.5h1M35 42.5h1M41 42.5h1M0 43.5h1M3 43.5h1M15 43.5h1M18 43.5h1M22 43.5h1M41 43.5h1M48 43.5h1M6 44.5h1M10 44.5h1M11 44.5h1M12 44.5h1M23 44.5h1M39 44.5h1M17 45.5h1M29 45.5h1M31 45.5h1M9 46.5h1M26 46.5h1M39 46.5h1M49 46.5h1M51 46.5h1M21 47.5h1M29 47.5h1M31 47.5h1M44 47.5h1M9 48.5h1M45 48.5h1M8 49.5h1M23 49.5h1M28 49.5h1M31 49.5h1M42 49.5h1M17 50.5h1M22 50.5h1M40 50.5h1M46 50.5h1M1 51.5h1M13 51.5h1M1 52.5h1M5 52.5h1M9 52.5h1M13 52.5h1M36 52.5h1M39 52.5h1" stroke="#20d0a0" stroke-width="1" opacity="0.08"/></pattern><linearGradient id="gL" gradientUnits="userSpaceOnUse" x1="0" x2="0" y1="358.0" y2="455.6"><stop offset="0.0000" stop-color="#00c23d"/><stop offset="0.0164" stop-color="#668d00"/><stop offset="0.0348" stop-color="#ff0000"/><stop offset="0.0820" stop-color="#ff7000"/><stop offset="0.1332" stop-color="#ffbf00"/><stop offset="0.1844" stop-color="#fff100"/><stop offset="0.2203" stop-color="#ffff00"/><stop offset="0.2561" stop-color="#ffed00"/><stop offset="0.3176" stop-color="#ff9500"/><stop offset="0.4068" stop-color="#ff0000"/><stop offset="0.4918" stop-color="#807800"/><stop offset="0.5799" stop-color="#00e000"/><stop offset="0.6814" stop-color="#008caa"/><stop offset="0.7684" stop-color="#0054f5"/><stop offset="0.8607" stop-color="#001696"/><stop offset="0.9426" stop-color="#000976"/><stop offset="1.0000" stop-color="#000060"/></linearGradient><linearGradient id="hA" x1="0" x2="0" y1="0" y2="1"><stop offset="0" stop-color="#007aeb"/><stop offset="0.55" stop-color="#0060e4"/><stop offset="0.9" stop-color="#0064dc"/><stop offset="0.965" stop-color="#009696"/><stop offset="1" stop-color="#00d600"/></linearGradient><linearGradient id="hB" x1="0" x2="0" y1="0" y2="1"><stop offset="0" stop-color="#0096c8"/><stop offset="0.3" stop-color="#0070e4"/><stop offset="0.6" stop-color="#0054da"/><stop offset="0.9" stop-color="#005cd2"/><stop offset="0.965" stop-color="#00aa6e"/><stop offset="1" stop-color="#28c800"/></linearGradient><linearGradient id="hC" x1="0" x2="0" y1="0" y2="1"><stop offset="0" stop-color="#00b08c"/><stop offset="0.25" stop-color="#009ca0"/><stop offset="0.6" stop-color="#0078d2"/><stop offset="0.88" stop-color="#0082c3"/><stop offset="0.95" stop-color="#00be46"/><stop offset="1" stop-color="#3cc800"/></linearGradient><linearGradient id="hD" x1="0" x2="0" y1="0" y2="1"><stop offset="0" stop-color="#006ce4"/><stop offset="0.5" stop-color="#0042c4"/><stop offset="0.88" stop-color="#004acc"/><stop offset="0.965" stop-color="#008c96"/><stop offset="1" stop-color="#00d600"/></linearGradient><linearGradient id="hE" x1="0" x2="0" y1="0" y2="1"><stop offset="0" stop-color="#00b082"/><stop offset="0.5" stop-color="#00a0a0"/><stop offset="0.8" stop-color="#0096af"/><stop offset="0.93" stop-color="#00c83c"/><stop offset="1" stop-color="#3ccd00"/></linearGradient><linearGradient id="acbL1" gradientUnits="userSpaceOnUse" x1="0" x2="0" y1="259.2" y2="366.4"><stop offset="0.0000" stop-color="#ffff00"/><stop offset="0.0625" stop-color="#ffc600"/><stop offset="0.1250" stop-color="#ff8c00"/><stop offset="0.1875" stop-color="#ff4600"/><stop offset="0.2500" stop-color="#ff0000"/><stop offset="0.3125" stop-color="#c03c00"/><stop offset="0.3750" stop-color="#807800"/><stop offset="0.4375" stop-color="#40ac00"/><stop offset="0.5000" stop-color="#00e000"/><stop offset="0.5625" stop-color="#00ba4c"/><stop offset="0.6250" stop-color="#009598"/><stop offset="0.6875" stop-color="#0079c3"/><stop offset="0.7500" stop-color="#0060e5"/><stop offset="0.8125" stop-color="#0043db"/><stop offset="0.8750" stop-color="#0023aa"/><stop offset="0.9375" stop-color="#000e82"/><stop offset="1.0000" stop-color="#000060"/></linearGradient><linearGradient id="acbL2" gradientUnits="userSpaceOnUse" x1="0" x2="0" y1="259.2" y2="366.4"><stop offset="0.0000" stop-color="#ffff00"/><stop offset="0.0625" stop-color="#ffc600"/><stop offset="0.1250" stop-color="#ff8c00"/><stop offset="0.1875" stop-color="#ff4600"/><stop offset="0.2500" stop-color="#ff0000"/><stop offset="0.3125" stop-color="#c03c00"/><stop offset="0.3750" stop-color="#807800"/><stop offset="0.4375" stop-color="#40ac00"/><stop offset="0.5000" stop-color="#00e000"/><stop offset="0.5625" stop-color="#00ba4c"/><stop offset="0.6250" stop-color="#009598"/><stop offset="0.6875" stop-color="#0079c3"/><stop offset="0.7500" stop-color="#0060e5"/><stop offset="0.8125" stop-color="#0043db"/><stop offset="0.8750" stop-color="#0023aa"/><stop offset="0.9375" stop-color="#000e82"/><stop offset="1.0000" stop-color="#000060"/></linearGradient><linearGradient id="gR" gradientUnits="userSpaceOnUse" x1="0" x2="0" y1="0" y2="142"><stop offset="0.0000" stop-color="#00e000"/><stop offset="0.0099" stop-color="#8f6a00"/><stop offset="0.0225" stop-color="#ff0b00"/><stop offset="0.0563" stop-color="#ff8100"/><stop offset="0.0915" stop-color="#ffc800"/><stop offset="0.1197" stop-color="#ffff00"/><stop offset="0.1479" stop-color="#ffd600"/><stop offset="0.2042" stop-color="#ff8600"/><stop offset="0.2641" stop-color="#ff0000"/><stop offset="0.3134" stop-color="#807800"/><stop offset="0.3732" stop-color="#00e000"/><stop offset="0.4401" stop-color="#008caa"/><stop offset="0.4965" stop-color="#0054f5"/><stop offset="0.5493" stop-color="#0038d6"/><stop offset="0.6056" stop-color="#0022aa"/><stop offset="0.6620" stop-color="#001276" stop-opacity="0.95"/><stop offset="0.7183" stop-color="#000846" stop-opacity="0.8"/><stop offset="0.7887" stop-color="#000322" stop-opacity="0.5"/><stop offset="0.8732" stop-color="#00010c" stop-opacity="0.2"/><stop offset="1.0000" stop-color="#000000" stop-opacity="0.0"/></linearGradient><linearGradient id="gR1" gradientUnits="userSpaceOnUse" x1="0" x2="0" y1="0" y2="142"><stop offset="0.0000" stop-color="#00e000"/><stop offset="0.0099" stop-color="#8f6a00"/><stop offset="0.0225" stop-color="#ff0b00"/><stop offset="0.0423" stop-color="#ff5000"/><stop offset="0.0634" stop-color="#ff9100"/><stop offset="0.0845" stop-color="#ffb800"/><stop offset="0.1056" stop-color="#ffb800"/><stop offset="0.1268" stop-color="#ffb800"/><stop offset="0.1479" stop-color="#ffb800"/><stop offset="0.1690" stop-color="#ffa400"/><stop offset="0.1901" stop-color="#ff8400"/><stop offset="0.2113" stop-color="#ff5500"/><stop offset="0.2324" stop-color="#ff2600"/><stop offset="0.2535" stop-color="#f40b00"/><stop offset="0.2817" stop-color="#ab4f00"/><stop offset="0.3099" stop-color="#688c00"/><stop offset="0.3380" stop-color="#2bbd00"/><stop offset="0.3662" stop-color="#00d614"/><stop offset="0.3944" stop-color="#00b35c"/><stop offset="0.4225" stop-color="#008fa3"/><stop offset="0.4577" stop-color="#006cd5"/><stop offset="0.4930" stop-color="#004eee"/><stop offset="0.5352" stop-color="#0038d5"/><stop offset="0.5775" stop-color="#0027b4"/><stop offset="0.6338" stop-color="#001682" stop-opacity="0.96"/><stop offset="0.7042" stop-color="#000846" stop-opacity="0.8"/><stop offset="0.7887" stop-color="#00031e" stop-opacity="0.45"/><stop offset="0.8873" stop-color="#000109" stop-opacity="0.15"/><stop offset="1.0000" stop-color="#000000" stop-opacity="0.0"/></linearGradient><linearGradient id="gR2" gradientUnits="userSpaceOnUse" x1="0" x2="0" y1="0" y2="142"><stop offset="0.0000" stop-color="#00e000"/><stop offset="0.0099" stop-color="#8f6a00"/><stop offset="0.0225" stop-color="#ff0b00"/><stop offset="0.0423" stop-color="#ff5000"/><stop offset="0.0634" stop-color="#ff9100"/><stop offset="0.0845" stop-color="#ff9300"/><stop offset="0.1056" stop-color="#ff9300"/><stop offset="0.1268" stop-color="#ff9300"/><stop offset="0.1479" stop-color="#ff9300"/><stop offset="0.1690" stop-color="#ff8f00"/><stop offset="0.1901" stop-color="#ff6300"/><stop offset="0.2113" stop-color="#ff3300"/><stop offset="0.2324" stop-color="#ff0400"/><stop offset="0.2535" stop-color="#cd2f00"/><stop offset="0.2817" stop-color="#857400"/><stop offset="0.3099" stop-color="#48a600"/><stop offset="0.3380" stop-color="#0bd700"/><stop offset="0.3662" stop-color="#00c33a"/><stop offset="0.3944" stop-color="#00a082"/><stop offset="0.4225" stop-color="#0080ba"/><stop offset="0.4577" stop-color="#005de9"/><stop offset="0.4930" stop-color="#0046e6"/><stop offset="0.5352" stop-color="#0032ca"/><stop offset="0.5775" stop-color="#0022a8" stop-opacity="1.0"/><stop offset="0.6338" stop-color="#001274" stop-opacity="0.95"/><stop offset="0.7042" stop-color="#00073e" stop-opacity="0.73"/><stop offset="0.7887" stop-color="#00021a" stop-opacity="0.39"/><stop offset="0.8873" stop-color="#000108" stop-opacity="0.13"/><stop offset="1.0000" stop-color="#000000" stop-opacity="0.0"/></linearGradient><linearGradient id="gR3" gradientUnits="userSpaceOnUse" x1="0" x2="0" y1="0" y2="142"><stop offset="0.0000" stop-color="#00e000"/><stop offset="0.0099" stop-color="#8f6a00"/><stop offset="0.0225" stop-color="#ff0b00"/><stop offset="0.0423" stop-color="#ff5000"/><stop offset="0.0634" stop-color="#ff7000"/><stop offset="0.0845" stop-color="#ff7000"/><stop offset="0.1056" stop-color="#ff7000"/><stop offset="0.1268" stop-color="#ff7000"/><stop offset="0.1479" stop-color="#ff7000"/><stop offset="0.1690" stop-color="#ff7000"/><stop offset="0.1901" stop-color="#ff4100"/><stop offset="0.2113" stop-color="#ff1200"/><stop offset="0.2324" stop-color="#dd2000"/><stop offset="0.2535" stop-color="#a75400"/><stop offset="0.2817" stop-color="#648f00"/><stop offset="0.3099" stop-color="#28c000"/><stop offset="0.3380" stop-color="#00d419"/><stop offset="0.3662" stop-color="#00b060"/><stop offset="0.3944" stop-color="#008da8"/><stop offset="0.4225" stop-color="#0071ce"/><stop offset="0.4577" stop-color="#0051f1"/><stop offset="0.4930" stop-color="#003edd"/><stop offset="0.5352" stop-color="#002cbe"/><stop offset="0.5775" stop-color="#001d9b" stop-opacity="0.99"/><stop offset="0.6338" stop-color="#000f68" stop-opacity="0.91"/><stop offset="0.7042" stop-color="#000636" stop-opacity="0.67"/><stop offset="0.7887" stop-color="#000216" stop-opacity="0.34"/><stop offset="0.8873" stop-color="#000106" stop-opacity="0.11"/><stop offset="1.0000" stop-color="#000000" stop-opacity="0.0"/></linearGradient><linearGradient id="gR4" gradientUnits="userSpaceOnUse" x1="0" x2="0" y1="0" y2="142"><stop offset="0.0000" stop-color="#00e000"/><stop offset="0.0099" stop-color="#8f6a00"/><stop offset="0.0225" stop-color="#ff0b00"/><stop offset="0.0423" stop-color="#ff5000"/><stop offset="0.0634" stop-color="#ff5000"/><stop offset="0.0845" stop-color="#ff5000"/><stop offset="0.1056" stop-color="#ff5000"/><stop offset="0.1268" stop-color="#ff5000"/><stop offset="0.1479" stop-color="#ff5000"/><stop offset="0.1690" stop-color="#ff4f00"/><stop offset="0.1901" stop-color="#ff2000"/><stop offset="0.2113" stop-color="#ed1100"/><stop offset="0.2324" stop-color="#b64500"/><stop offset="0.2535" stop-color="#807800"/><stop offset="0.2817" stop-color="#44a900"/><stop offset="0.3099" stop-color="#08da00"/><stop offset="0.3380" stop-color="#00c13f"/><stop offset="0.3662" stop-color="#009e86"/><stop offset="0.3944" stop-color="#007ebd"/><stop offset="0.4225" stop-color="#0062e2"/><stop offset="0.4577" stop-color="#0049e9"/><stop offset="0.4930" stop-color="#0037d3"/><stop offset="0.5352" stop-color="#0026b2"/><stop offset="0.5775" stop-color="#00198d" stop-opacity="0.97"/><stop offset="0.6338" stop-color="#000c5b" stop-opacity="0.87"/><stop offset="0.7042" stop-color="#00052f" stop-opacity="0.6"/><stop offset="0.7887" stop-color="#000212" stop-opacity="0.29"/><stop offset="0.8873" stop-color="#000005" stop-opacity="0.08"/><stop offset="1.0000" stop-color="#000000" stop-opacity="0.0"/></linearGradient><linearGradient id="gR5" gradientUnits="userSpaceOnUse" x1="0" x2="0" y1="0" y2="142"><stop offset="0.0000" stop-color="#00e000"/><stop offset="0.0099" stop-color="#8f6a00"/><stop offset="0.0225" stop-color="#ff0b00"/><stop offset="0.0423" stop-color="#ff3400"/><stop offset="0.0634" stop-color="#ff3400"/><stop offset="0.0845" stop-color="#ff3400"/><stop offset="0.1056" stop-color="#ff3400"/><stop offset="0.1268" stop-color="#ff3400"/><stop offset="0.1479" stop-color="#ff3400"/><stop offset="0.1690" stop-color="#ff2d00"/><stop offset="0.1901" stop-color="#fd0200"/><stop offset="0.2113" stop-color="#c63600"/><stop offset="0.2324" stop-color="#906900"/><stop offset="0.2535" stop-color="#609200"/><stop offset="0.2817" stop-color="#24c300"/><stop offset="0.3099" stop-color="#00d21d"/><stop offset="0.3380" stop-color="#00ae65"/><stop offset="0.3662" stop-color="#008bab"/><stop offset="0.3944" stop-color="#006fd1"/><stop offset="0.4225" stop-color="#0054f4"/><stop offset="0.4577" stop-color="#0041e0"/><stop offset="0.4930" stop-color="#0031c8"/><stop offset="0.5352" stop-color="#0021a6" stop-opacity="1.0"/><stop offset="0.5775" stop-color="#00157f" stop-opacity="0.96"/><stop offset="0.6338" stop-color="#000a4e" stop-opacity="0.83"/><stop offset="0.7042" stop-color="#000427" stop-opacity="0.54"/><stop offset="0.7887" stop-color="#00010f" stop-opacity="0.23"/><stop offset="0.8873" stop-color="#000004" stop-opacity="0.06"/><stop offset="1.0000" stop-color="#000000" stop-opacity="0.0"/></linearGradient><linearGradient id="gR6" gradientUnits="userSpaceOnUse" x1="0" x2="0" y1="0" y2="142"><stop offset="0.0000" stop-color="#00e000"/><stop offset="0.0099" stop-color="#8f6a00"/><stop offset="0.0225" stop-color="#ff0b00"/><stop offset="0.0423" stop-color="#ff1a00"/><stop offset="0.0634" stop-color="#ff1a00"/><stop offset="0.0845" stop-color="#ff1a00"/><stop offset="0.1056" stop-color="#ff1a00"/><stop offset="0.1268" stop-color="#ff1a00"/><stop offset="0.1479" stop-color="#ff1a00"/><stop offset="0.1690" stop-color="#ff0c00"/><stop offset="0.1901" stop-color="#d62700"/><stop offset="0.2113" stop-color="#a05a00"/><stop offset="0.2324" stop-color="#6d8700"/><stop offset="0.2535" stop-color="#40ac00"/><stop offset="0.2817" stop-color="#04dd00"/><stop offset="0.3099" stop-color="#00bf43"/><stop offset="0.3380" stop-color="#009b8b"/><stop offset="0.3662" stop-color="#007cbf"/><stop offset="0.3944" stop-color="#0060e5"/><stop offset="0.4225" stop-color="#004cec"/><stop offset="0.4577" stop-color="#0039d7"/><stop offset="0.4930" stop-color="#002bbc"/><stop offset="0.5352" stop-color="#001c98" stop-opacity="0.98"/><stop offset="0.5775" stop-color="#001172" stop-opacity="0.94"/><stop offset="0.6338" stop-color="#000843" stop-opacity="0.78"/><stop offset="0.7042" stop-color="#000321" stop-opacity="0.48"/><stop offset="0.7887" stop-color="#00010c" stop-opacity="0.19"/><stop offset="0.8873" stop-color="#000002" stop-opacity="0.04"/><stop offset="1.0000" stop-color="#000000" stop-opacity="0.0"/></linearGradient><linearGradient id="gR7" gradientUnits="userSpaceOnUse" x1="0" x2="0" y1="0" y2="142"><stop offset="0.0000" stop-color="#00e000"/><stop offset="0.0099" stop-color="#8f6a00"/><stop offset="0.0225" stop-color="#ff0100"/><stop offset="0.0423" stop-color="#ff0100"/><stop offset="0.0634" stop-color="#ff0100"/><stop offset="0.0845" stop-color="#ff0100"/><stop offset="0.1056" stop-color="#ff0100"/><stop offset="0.1268" stop-color="#ff0100"/><stop offset="0.1479" stop-color="#ff0100"/><stop offset="0.1690" stop-color="#e61800"/><stop offset="0.1901" stop-color="#b04b00"/><stop offset="0.2113" stop-color="#7a7d00"/><stop offset="0.2324" stop-color="#4da100"/><stop offset="0.2535" stop-color="#20c600"/><stop offset="0.2817" stop-color="#00cf22"/><stop offset="0.3099" stop-color="#00ac69"/><stop offset="0.3380" stop-color="#0089ae"/><stop offset="0.3662" stop-color="#006dd3"/><stop offset="0.3944" stop-color="#0053f3"/><stop offset="0.4225" stop-color="#0044e3"/><stop offset="0.4577" stop-color="#0033cc"/><stop offset="0.4930" stop-color="#0025b0"/><stop offset="0.5352" stop-color="#00188a" stop-opacity="0.97"/><stop offset="0.5775" stop-color="#000e65" stop-opacity="0.9"/><stop offset="0.6338" stop-color="#00073c" stop-opacity="0.71"/><stop offset="0.7042" stop-color="#00031d" stop-opacity="0.43"/><stop offset="0.7887" stop-color="#00010a" stop-opacity="0.17"/><stop offset="0.8873" stop-color="#000001" stop-opacity="0.01"/><stop offset="1.0000" stop-color="#000000" stop-opacity="0.0"/></linearGradient><linearGradient id="gR8" gradientUnits="userSpaceOnUse" x1="0" x2="0" y1="0" y2="142"><stop offset="0.0000" stop-color="#00e000"/><stop offset="0.0099" stop-color="#8f6a00"/><stop offset="0.0225" stop-color="#eb1300"/><stop offset="0.0423" stop-color="#eb1300"/><stop offset="0.0634" stop-color="#eb1300"/><stop offset="0.0845" stop-color="#eb1300"/><stop offset="0.1056" stop-color="#eb1300"/><stop offset="0.1268" stop-color="#eb1300"/><stop offset="0.1479" stop-color="#eb1300"/><stop offset="0.1690" stop-color="#c03c00"/><stop offset="0.1901" stop-color="#896f00"/><stop offset="0.2113" stop-color="#5a9700"/><stop offset="0.2324" stop-color="#2dbb00"/><stop offset="0.2535" stop-color="#00e000"/><stop offset="0.2817" stop-color="#00bd48"/><stop offset="0.3099" stop-color="#00998f"/><stop offset="0.3380" stop-color="#007ac1"/><stop offset="0.3662" stop-color="#005ee7"/><stop offset="0.3944" stop-color="#004beb"/><stop offset="0.4225" stop-color="#003cda"/><stop offset="0.4577" stop-color="#002dc0"/><stop offset="0.4930" stop-color="#0020a4" stop-opacity="0.99"/><stop offset="0.5352" stop-color="#00147c" stop-opacity="0.96"/><stop offset="0.5775" stop-color="#000c58" stop-opacity="0.86"/><stop offset="0.6338" stop-color="#000634" stop-opacity="0.65"/><stop offset="0.7042" stop-color="#000219" stop-opacity="0.38"/><stop offset="0.7887" stop-color="#000109" stop-opacity="0.14"/><stop offset="0.8873" stop-color="#000000" stop-opacity="0.0"/><stop offset="1.0000" stop-color="#000000" stop-opacity="0.0"/></linearGradient><linearGradient id="pk1084" gradientUnits="userSpaceOnUse" x1="0" x2="0" y1="246.6" y2="306.282719834105"><stop offset="-0.0101" stop-color="#14968c"/><stop offset="0.0235" stop-color="#46c828"/><stop offset="0.0670" stop-color="#c8d414"/><stop offset="0.8576" stop-color="#f4e814"/><stop offset="0.9414" stop-color="#fa9610"/><stop offset="1.0000" stop-color="#ff380a"/></linearGradient><linearGradient id="pk1084c" gradientUnits="userSpaceOnUse" x1="0" x2="0" y1="246.6" y2="311.782719834105"><stop offset="0.0000" stop-color="#be9628"/><stop offset="0.0675" stop-color="#fa6e18"/><stop offset="0.2363" stop-color="#ff3c0e"/><stop offset="0.5124" stop-color="#fc280a"/><stop offset="1.0000" stop-color="#ff2e0a"/></linearGradient><linearGradient id="pk1256" gradientUnits="userSpaceOnUse" x1="0" x2="0" y1="257.8" y2="310.64817825115165"><stop offset="-0.0114" stop-color="#14968c"/><stop offset="0.0265" stop-color="#46c828"/><stop offset="0.0757" stop-color="#c8d414"/><stop offset="0.8392" stop-color="#f4e814"/><stop offset="0.9338" stop-color="#fa9610"/><stop offset="1.0000" stop-color="#ff380a"/></linearGradient><linearGradient id="pk1256c" gradientUnits="userSpaceOnUse" x1="0" x2="0" y1="257.8" y2="316.14817825115165"><stop offset="0.0000" stop-color="#c89628"/><stop offset="0.0720" stop-color="#ff4610"/><stop offset="0.4148" stop-color="#fa280a"/><stop offset="0.4747" stop-color="#ff8218"/><stop offset="0.6204" stop-color="#ff5010"/><stop offset="1.0000" stop-color="#ff2e0a"/></linearGradient><linearGradient id="wR" gradientUnits="userSpaceOnUse" x1="0" x2="0" y1="456.2" y2="517"><stop offset="0.0000" stop-color="#0e5cd4"/><stop offset="0.1316" stop-color="#1470e4"/><stop offset="0.3618" stop-color="#1266de"/><stop offset="0.4441" stop-color="#0844c6"/><stop offset="0.5921" stop-color="#0842c4"/><stop offset="0.6743" stop-color="#146ce0"/><stop offset="0.9046" stop-color="#1674e4"/><stop offset="0.9474" stop-color="#1680d8"/><stop offset="0.9638" stop-color="#1896be"/><stop offset="1.0000" stop-color="#1ca6aa"/></linearGradient><linearGradient id="wRg" x1="0" x2="1" y1="0" y2="0"><stop offset="0" stop-color="#20b0b0" stop-opacity="0.34"/><stop offset="0.55" stop-color="#20b0b0" stop-opacity="0.2"/><stop offset="1" stop-color="#20b0b0" stop-opacity="0"/></linearGradient><linearGradient id="acbR1" gradientUnits="userSpaceOnUse" x1="0" x2="0" y1="247.6" y2="312.6"><stop offset="0.0000" stop-color="#ffff00"/><stop offset="0.0625" stop-color="#ffc600"/><stop offset="0.1250" stop-color="#ff8c00"/><stop offset="0.1875" stop-color="#ff4600"/><stop offset="0.2500" stop-color="#ff0000"/><stop offset="0.3125" stop-color="#c03c00"/><stop offset="0.3750" stop-color="#807800"/><stop offset="0.4375" stop-color="#40ac00"/><stop offset="0.5000" stop-color="#00e000"/><stop offset="0.5625" stop-color="#00ba4c"/><stop offset="0.6250" stop-color="#009598"/><stop offset="0.6875" stop-color="#0079c3"/><stop offset="0.7500" stop-color="#0060e5"/><stop offset="0.8125" stop-color="#0043db"/><stop offset="0.8750" stop-color="#0023aa"/><stop offset="0.9375" stop-color="#000e82"/><stop offset="1.0000" stop-color="#000060"/></linearGradient><linearGradient id="acbR2" gradientUnits="userSpaceOnUse" x1="0" x2="0" y1="247.6" y2="312.6"><stop offset="0.0000" stop-color="#ffff00"/><stop offset="0.0625" stop-color="#ffc600"/><stop offset="0.1250" stop-color="#ff8c00"/><stop offset="0.1875" stop-color="#ff4600"/><stop offset="0.2500" stop-color="#ff0000"/><stop offset="0.3125" stop-color="#c03c00"/><stop offset="0.3750" stop-color="#807800"/><stop offset="0.4375" stop-color="#40ac00"/><stop offset="0.5000" stop-color="#00e000"/><stop offset="0.5625" stop-color="#00ba4c"/><stop offset="0.6250" stop-color="#009598"/><stop offset="0.6875" stop-color="#0079c3"/><stop offset="0.7500" stop-color="#0060e5"/><stop offset="0.8125" stop-color="#0043db"/><stop offset="0.8750" stop-color="#0023aa"/><stop offset="0.9375" stop-color="#000e82"/><stop offset="1.0000" stop-color="#000060"/></linearGradient></defs><rect x="227" y="61" width="1178" height="788" fill="#000"/><path d="M277.8 124.5H795" stroke="#a8a8a8" stroke-width="1" stroke-dasharray="1 3" fill="none"/>
<path d="M277.8 146.5H795" stroke="#a8a8a8" stroke-width="1" stroke-dasharray="1 3" fill="none"/>
<path d="M277.8 167.5H795" stroke="#a8a8a8" stroke-width="1" stroke-dasharray="1 3" fill="none"/>
<path d="M277.8 188.5H795" stroke="#a8a8a8" stroke-width="1" stroke-dasharray="1 3" fill="none"/>
<path d="M277.8 210.5H795" stroke="#a8a8a8" stroke-width="1" stroke-dasharray="1 3" fill="none"/>
<path d="M277.8 232.5H795" stroke="#a8a8a8" stroke-width="1" stroke-dasharray="1 3" fill="none"/>
<path d="M277.8 253.5H795" stroke="#a8a8a8" stroke-width="1" stroke-dasharray="1 3" fill="none"/>
<path d="M277.8 274.5H795" stroke="#a8a8a8" stroke-width="1" stroke-dasharray="1 3" fill="none"/>
<path d="M277.8 296.5H795" stroke="#a8a8a8" stroke-width="1" stroke-dasharray="1 3" fill="none"/>
<path d="M277.8 318.5H795" stroke="#a8a8a8" stroke-width="1" stroke-dasharray="1 3" fill="none"/>
<path d="M277.8 339.5H795" stroke="#a8a8a8" stroke-width="1" stroke-dasharray="1 3" fill="none"/>
<path d="M277.8 360.5H795" stroke="#a8a8a8" stroke-width="1" stroke-dasharray="1 3" fill="none"/>
<path d="M277.8 382.5H795" stroke="#a8a8a8" stroke-width="1" stroke-dasharray="1 3" fill="none"/>
<path d="M277.8 404.5H795" stroke="#a8a8a8" stroke-width="1" stroke-dasharray="1 3" fill="none"/>
<path d="M277.8 425.5H795" stroke="#a8a8a8" stroke-width="1" stroke-dasharray="1 3" fill="none"/>
<path d="M277.8 446.5H795" stroke="#a8a8a8" stroke-width="1" stroke-dasharray="1 3" fill="none"/>
<path d="M344.5 104.8V455.3" stroke="#a8a8a8" stroke-width="1" stroke-dasharray="1 3" fill="none"/>
<path d="M413.5 104.8V455.3" stroke="#a8a8a8" stroke-width="1" stroke-dasharray="1 3" fill="none"/>
<path d="M482.5 104.8V455.3" stroke="#a8a8a8" stroke-width="1" stroke-dasharray="1 3" fill="none"/>
<path d="M552.5 104.8V455.3" stroke="#a8a8a8" stroke-width="1" stroke-dasharray="1 3" fill="none"/>
<path d="M621.5 104.8V455.3" stroke="#a8a8a8" stroke-width="1" stroke-dasharray="1 3" fill="none"/>
<path d="M690.5 104.8V455.3" stroke="#a8a8a8" stroke-width="1" stroke-dasharray="1 3" fill="none"/>
<path d="M760.5 104.8V455.3" stroke="#a8a8a8" stroke-width="1" stroke-dasharray="1 3" fill="none"/>
<rect x="312" y="358.0" width="435" height="97.4" fill="url(#gL)"/>
<path d="M312.5 358.0v97.4M313.5 358.0v97.4M314.5 358.0v97.4M316.5 358.0v97.4M318.5 358.0v97.4M320.5 358.0v97.4M328.5 358.0v97.4M335.5 358.0v97.4M338.5 358.0v97.4M345.5 358.0v97.4M347.5 358.0v97.4M351.5 358.0v97.4M352.5 358.0v97.4M357.5 358.0v97.4M370.5 358.0v97.4M375.5 358.0v97.4M378.5 358.0v97.4M379.5 358.0v97.4M381.5 358.0v97.4M388.5 358.0v97.4M391.5 358.0v97.4M393.5 358.0v97.4M394.5 358.0v97.4M401.5 358.0v97.4M406.5 358.0v97.4M417.5 358.0v97.4M425.5 358.0v97.4M429.5 358.0v97.4M430.5 358.0v97.4M440.5 358.0v97.4M449.5 358.0v97.4M450.5 358.0v97.4M452.5 358.0v97.4M457.5 358.0v97.4M482.5 358.0v97.4M484.5 358.0v97.4M486.5 358.0v97.4M489.5 358.0v97.4M495.5 358.0v97.4M498.5 358.0v97.4M501.5 358.0v97.4M502.5 358.0v97.4M503.5 358.0v97.4M506.5 358.0v97.4M507.5 358.0v97.4M508.5 358.0v97.4M517.5 358.0v97.4M520.5 358.0v97.4M525.5 358.0v97.4M532.5 358.0v97.4M534.5 358.0v97.4M536.5 358.0v97.4M538.5 358.0v97.4M542.5 358.0v97.4M544.5 358.0v97.4M565.5 358.0v97.4M570.5 358.0v97.4M573.5 358.0v97.4M581.5 358.0v97.4M582.5 358.0v97.4M588.5 358.0v97.4M593.5 358.0v97.4M597.5 358.0v97.4M602.5 358.0v97.4M603.5 358.0v97.4M608.5 358.0v97.4M609.5 358.0v97.4M611.5 358.0v97.4M615.5 358.0v97.4M619.5 358.0v97.4M621.5 358.0v97.4M622.5 358.0v97.4M626.5 358.0v97.4M630.5 358.0v97.4M631.5 358.0v97.4M640.5 358.0v97.4M643.5 358.0v97.4M646.5 358.0v97.4M653.5 358.0v97.4M661.5 358.0v97.4M663.5 358.0v97.4M664.5 358.0v97.4M665.5 358.0v97.4M668.5 358.0v97.4M669.5 358.0v97.4M671.5 358.0v97.4M674.5 358.0v97.4M675.5 358.0v97.4M678.5 358.0v97.4M681.5 358.0v97.4M684.5 358.0v97.4M686.5 358.0v97.4M688.5 358.0v97.4M696.5 358.0v97.4M698.5 358.0v97.4M703.5 358.0v97.4M707.5 358.0v97.4M713.5 358.0v97.4M722.5 358.0v97.4M728.5 358.0v97.4M729.5 358.0v97.4M734.5 358.0v97.4M737.5 358.0v97.4M739.5 358.0v97.4M742.5 358.0v97.4" stroke="url(#gL)" stroke-width="1.04" fill="none" transform="translate(0 -0.5)"/>
<path d="M321.5 358.0v97.4M331.5 358.0v97.4M337.5 358.0v97.4M339.5 358.0v97.4M340.5 358.0v97.4M341.5 358.0v97.4M344.5 358.0v97.4M346.5 358.0v97.4M348.5 358.0v97.4M353.5 358.0v97.4M356.5 358.0v97.4M361.5 358.0v97.4M362.5 358.0v97.4M371.5 358.0v97.4M372.5 358.0v97.4M373.5 358.0v97.4M374.5 358.0v97.4M376.5 358.0v97.4M382.5 358.0v97.4M385.5 358.0v97.4M386.5 358.0v97.4M387.5 358.0v97.4M399.5 358.0v97.4M408.5 358.0v97.4M411.5 358.0v97.4M415.5 358.0v97.4M421.5 358.0v97.4M422.5 358.0v97.4M423.5 358.0v97.4M427.5 358.0v97.4M428.5 358.0v97.4M431.5 358.0v97.4M432.5 358.0v97.4M434.5 358.0v97.4M438.5 358.0v97.4M443.5 358.0v97.4M444.5 358.0v97.4M448.5 358.0v97.4M455.5 358.0v97.4M461.5 358.0v97.4M470.5 358.0v97.4M471.5 358.0v97.4M476.5 358.0v97.4M479.5 358.0v97.4M487.5 358.0v97.4M491.5 358.0v97.4M492.5 358.0v97.4M496.5 358.0v97.4M504.5 358.0v97.4M511.5 358.0v97.4M512.5 358.0v97.4M523.5 358.0v97.4M528.5 358.0v97.4M531.5 358.0v97.4M537.5 358.0v97.4M540.5 358.0v97.4M543.5 358.0v97.4M545.5 358.0v97.4M550.5 358.0v97.4M558.5 358.0v97.4M566.5 358.0v97.4M567.5 358.0v97.4M568.5 358.0v97.4M571.5 358.0v97.4M575.5 358.0v97.4M578.5 358.0v97.4M583.5 358.0v97.4M586.5 358.0v97.4M591.5 358.0v97.4M595.5 358.0v97.4M599.5 358.0v97.4M600.5 358.0v97.4M601.5 358.0v97.4M605.5 358.0v97.4M606.5 358.0v97.4M610.5 358.0v97.4M612.5 358.0v97.4M614.5 358.0v97.4M617.5 358.0v97.4M618.5 358.0v97.4M620.5 358.0v97.4M632.5 358.0v97.4M633.5 358.0v97.4M634.5 358.0v97.4M639.5 358.0v97.4M642.5 358.0v97.4M648.5 358.0v97.4M649.5 358.0v97.4M657.5 358.0v97.4M666.5 358.0v97.4M672.5 358.0v97.4M685.5 358.0v97.4M687.5 358.0v97.4M693.5 358.0v97.4M697.5 358.0v97.4M699.5 358.0v97.4M702.5 358.0v97.4M710.5 358.0v97.4M712.5 358.0v97.4M717.5 358.0v97.4M718.5 358.0v97.4M725.5 358.0v97.4M726.5 358.0v97.4M731.5 358.0v97.4M732.5 358.0v97.4M736.5 358.0v97.4M740.5 358.0v97.4" stroke="url(#gL)" stroke-width="1.04" fill="none" transform="translate(0 0.5)"/>
<path d="M312.5 449.2v2M313.5 453v2M313.5 450.3v3M316.5 453.7v2M316.5 453.6v2M318.5 455.3v3M318.5 453.6v2M321.5 447.2v3M322.5 453.8v2M323.5 455.4v1.5M325.5 451v3M325.5 447.5v3M328.5 445.9v2M329.5 446.3v1.5M330.5 455v1.5M331.5 454.5v2M332.5 454.1v2M333.5 452.2v1.5M333.5 452.2v1.5M335.5 451.7v2M335.5 450.5v2M336.5 451.7v3M337.5 447.2v3M338.5 454.7v3M339.5 455v1.5M339.5 448.5v1.5M341.5 453v2M341.5 451.6v3M342.5 452.4v3M342.5 454.4v1.5M345.5 452.3v2M347.5 453.2v1.5M348.5 453.8v3M349.5 449.7v3M350.5 453.7v3M351.5 447.2v1.5M352.5 451.7v2M353.5 450.4v1.5M354.5 447.4v1.5M355.5 449.7v3M357.5 447.7v1.5M358.5 454.9v2M359.5 450v3M359.5 453.7v1.5M360.5 454.5v3M361.5 455.1v1.5M361.5 455v3M363.5 452.2v3M364.5 453.5v3M365.5 455.2v1.5M367.5 453.7v3M369.5 454.1v2M369.5 449.5v2M370.5 449.7v1.5M371.5 447.4v2M373.5 455.6v1.5M373.5 447.9v1.5M374.5 454.2v1.5M376.5 450.4v2M376.5 453.5v1.5M377.5 448.5v2M377.5 453v2M380.5 447.9v1.5M381.5 450.4v1.5M383.5 446.6v2M383.5 452.1v3M384.5 453.2v3M384.5 454.8v3M385.5 452.4v3M386.5 450.4v3M387.5 454.5v2M390.5 449.1v2M391.5 454.2v2M393.5 455.5v3M393.5 447.4v1.5M395.5 454.8v2M397.5 444.6v3M397.5 446.1v2M398.5 447.2v1.5M399.5 452.7v2M400.5 453.9v2M402.5 452.2v3M403.5 453v2M408.5 454.8v2M408.5 453.7v3M410.5 450v1.5M410.5 451.6v2M411.5 452.4v3M412.5 451.6v3M413.5 447.3v1.5M413.5 455.2v3M414.5 453.5v1.5M415.5 445v3M416.5 455v2M417.5 455.7v2M417.5 454v1.5M419.5 451.7v2M420.5 451.1v2M422.5 455.4v2M424.5 454.4v1.5M424.5 451.5v1.5M427.5 451.7v3M428.5 454.9v2M431.5 453.9v2M434.5 449.2v3M434.5 451.1v3M435.5 455.2v2M435.5 454.3v1.5M437.5 451.6v2M438.5 444.7v3M439.5 455v3M439.5 453.8v2M440.5 453.2v1.5M440.5 451.2v3M444.5 452.6v3M445.5 448.2v3M446.5 451.7v1.5M450.5 452.7v3M450.5 450.6v2M453.5 445.8v1.5M453.5 450.2v2M454.5 450.5v2M455.5 451.5v2M457.5 454.5v2M457.5 449.6v3M458.5 450.4v1.5M458.5 454.9v2M459.5 447.9v2M459.5 453v2M460.5 452.2v3M460.5 455.7v1.5M462.5 454.2v3M463.5 452.3v1.5M463.5 451.5v3M464.5 454.3v2M464.5 447.8v2M470.5 453.4v3M471.5 451.1v2M473.5 448v1.5M475.5 454.3v2M475.5 451.3v3M477.5 454.6v1.5M478.5 455.3v3M479.5 451.4v3M480.5 455.4v2M481.5 446.4v3M482.5 454.1v1.5M482.5 449.4v1.5M483.5 444.2v1.5M483.5 448.7v1.5M485.5 455v3M487.5 450.9v2M489.5 450.7v1.5M490.5 449.3v3M490.5 455.2v2M491.5 446.6v2M492.5 449.1v3M493.5 453.6v3M494.5 455.3v2M496.5 455.7v2M496.5 451.7v3M498.5 446v1.5M499.5 448.2v2M500.5 452.5v1.5M501.5 453v1.5M501.5 455.5v1.5M502.5 453.2v1.5M504.5 451v3M507.5 449.2v3M508.5 450.5v2M510.5 451.6v2M511.5 453.1v1.5M511.5 448.5v3M514.5 454.8v3M515.5 453.1v3M516.5 453.3v1.5M518.5 455.5v2M519.5 452.4v3M520.5 453.4v1.5M522.5 454.9v2M524.5 451.1v1.5M525.5 451.4v1.5M525.5 455.7v3M526.5 454.4v1.5M528.5 450.8v2M531.5 453.3v1.5M532.5 455v1.5M533.5 454.8v1.5M534.5 455.5v3M536.5 451.2v1.5M537.5 449.8v3M537.5 452.9v2M538.5 451.6v1.5M538.5 452.3v1.5M541.5 452.5v1.5M542.5 452.6v3M542.5 452.8v2M544.5 454v2M544.5 455.6v1.5M546.5 455.5v3M547.5 454.3v1.5M548.5 453.6v2M549.5 454.4v1.5M549.5 452v2M550.5 452.7v3M550.5 450.5v1.5M552.5 451.7v1.5M553.5 455.6v1.5M553.5 452.5v2M554.5 451.3v2M554.5 448.6v3M555.5 454.4v1.5M555.5 452v3M556.5 455v2M556.5 454.8v3M557.5 452.8v1.5M558.5 451.2v1.5M560.5 451.4v3M562.5 450.7v1.5M565.5 454.5v2M565.5 449.5v2M567.5 452.5v2M568.5 448v3M568.5 455.4v3M570.5 455.6v2M572.5 454.7v1.5M572.5 451.5v1.5M575.5 452.7v1.5M576.5 455.1v2M576.5 455.3v1.5M578.5 454.8v3M579.5 451.9v1.5M580.5 454.4v1.5M582.5 449v3M584.5 449.3v3M585.5 455v3M585.5 455.5v2M587.5 454.4v2M587.5 455.5v1.5M590.5 451.1v2M592.5 452.4v2M593.5 453.6v2M594.5 454v3M595.5 451.8v2M597.5 453.6v3M600.5 453.9v1.5M601.5 454.4v1.5M601.5 453.6v1.5M602.5 449.7v3M603.5 447v2M603.5 450.2v1.5M605.5 455.1v2M608.5 448.4v3M608.5 452.8v2M609.5 453.4v1.5M610.5 453.7v3M610.5 450.6v2M611.5 452v2M612.5 454.6v1.5M612.5 455.4v1.5M613.5 453.2v3M614.5 452.1v3M617.5 452.7v3M617.5 453v2M622.5 450.2v1.5M623.5 455.2v2M623.5 449.9v3M624.5 453.7v3M625.5 452.9v2M626.5 453.3v3M627.5 452.4v2M627.5 455.4v2M628.5 442.2v1.5M629.5 453.5v2M630.5 453.5v3M631.5 446.9v1.5M632.5 451.4v2M637.5 452v2M638.5 451.1v1.5M639.5 452.6v3M640.5 452.6v1.5M641.5 445.2v2M643.5 445.2v2M643.5 447.5v3M644.5 454.7v3M647.5 453.7v3M647.5 452.7v1.5M648.5 450.4v1.5M648.5 453.7v3M649.5 449.1v2M651.5 451.6v1.5M653.5 450.1v2M655.5 455.7v1.5M655.5 453.9v3M656.5 454v1.5M656.5 450.9v2M658.5 454.1v1.5M659.5 455.5v1.5M660.5 452.2v1.5M661.5 453.5v1.5M662.5 449.9v2M663.5 453.3v1.5M664.5 453.5v3M665.5 449.1v2M665.5 450.9v2M667.5 450.3v1.5M668.5 451.2v2M670.5 453.8v1.5M670.5 452v2M671.5 453.2v2M671.5 452.7v3M672.5 449.8v2M673.5 449.9v2M673.5 455.7v3M674.5 454.6v1.5M674.5 453.8v3M675.5 453.6v2M677.5 453.7v2M677.5 453.5v3M678.5 450.7v1.5M681.5 454.2v2M682.5 453.5v1.5M683.5 455.7v2M684.5 455.3v1.5M685.5 453.3v1.5M686.5 452.2v1.5M687.5 447v3M688.5 455.4v2M689.5 453.9v3M689.5 450.4v2M691.5 449v2M692.5 450.4v3M692.5 449.8v2M693.5 454.4v2M693.5 451v3M694.5 454.9v3M695.5 452.3v1.5M696.5 455.7v3M697.5 453.2v2M699.5 450.3v2M701.5 455.7v3M701.5 447.3v3M703.5 453.4v2M704.5 449.4v1.5M704.5 452v3M705.5 455.7v2M706.5 447.3v2M706.5 452.9v3M708.5 451.3v3M709.5 451.8v1.5M710.5 448.1v3M711.5 451.8v1.5M712.5 449.1v1.5M713.5 454.7v3M713.5 454.2v1.5M716.5 454.9v3M716.5 453.6v2M717.5 454.2v1.5M717.5 450v1.5M719.5 452.8v2M720.5 450.5v1.5M720.5 454.8v1.5M721.5 451.7v2M721.5 452.8v1.5M722.5 453.3v2M723.5 454.9v1.5M725.5 454.3v3M726.5 451v1.5M727.5 455.5v2M730.5 455.7v1.5M731.5 453.3v2M732.5 453.3v3M732.5 449.9v3M734.5 452.4v2M734.5 448.1v1.5M735.5 454.2v1.5M736.5 452.9v3M737.5 452.8v2M738.5 454.8v2M740.5 455.5v3M741.5 453.4v1.5M742.5 455v3M744.5 455v2M744.5 449.1v2M745.5 453.4v1.5" stroke="#000018" stroke-width="1" fill="none" opacity="0.75"/>
<path d="M312.5 444.2v4M313.5 437.7v4M314.5 440.1v3M315.5 442.9v4M320.5 445.8v4M321.5 444.1v4M322.5 426.9v3M323.5 437.4v2M324.5 436.6v2M326.5 431.4v4M327.5 435.6v3M328.5 440.3v3M329.5 446.4v3M330.5 437.3v2M332.5 447v3M333.5 440.6v2M334.5 446.9v4M335.5 436.6v4M336.5 438.8v4M337.5 440v3M338.5 445.5v4M339.5 442.4v4M342.5 436.5v3M344.5 444.3v2M346.5 443.1v3M348.5 446.4v2M349.5 433.5v2M350.5 443.4v2M352.5 437.4v2M353.5 438.9v4M355.5 446.8v4M356.5 438.8v3M357.5 436.7v3M359.5 436.5v4M360.5 442.1v4M361.5 440.7v4M362.5 438.6v2M364.5 436v2M366.5 440.8v2M367.5 443.9v3M369.5 440.8v3M370.5 436.7v4M372.5 445.1v2M373.5 446.3v3M376.5 440.1v4M377.5 431.9v3M379.5 440.8v4M380.5 444.9v3M381.5 443v4M382.5 428.4v2M383.5 440.5v4M384.5 439.3v3M385.5 441.7v2M386.5 438.1v3M388.5 437.1v2M389.5 436.4v3M390.5 438.6v4M391.5 446.5v2M393.5 432.7v2M395.5 441.3v4M396.5 442.8v2M399.5 431.6v3M401.5 435.5v2M402.5 433.6v4M404.5 443.2v3M405.5 434.1v2M408.5 441.8v4M409.5 428.9v3M410.5 444.1v4M411.5 426.5v3M413.5 435.1v3M414.5 441.2v2M415.5 442.1v4M416.5 444.3v3M417.5 445.5v2M419.5 437.6v2M420.5 446.9v2M421.5 445.1v2M423.5 442.1v4M424.5 443.4v4M425.5 442.2v2M426.5 433.2v2M427.5 442.2v4M428.5 436.2v2M429.5 446v3M431.5 445.8v3M433.5 434.7v3M434.5 445.9v3M436.5 435.2v4M437.5 436.9v3M439.5 441.6v3M440.5 435v4M443.5 440.9v4M445.5 446.3v3M446.5 435.4v4M447.5 444.1v4M448.5 445.4v4M449.5 434.6v2M451.5 443.5v3M452.5 422.5v3M453.5 442.5v2M454.5 445.3v2M455.5 445.7v4M456.5 438.6v2M458.5 438.9v2M459.5 439.2v2M460.5 435.4v2M464.5 437.9v3M466.5 436.5v4M469.5 445.8v2M470.5 443.5v4M471.5 444.6v4M473.5 443.2v3M474.5 441.8v3M476.5 445.9v3M478.5 440.2v3M479.5 446.3v3M481.5 434.1v4M483.5 432.9v2M485.5 440.8v3M486.5 442.3v3M487.5 442.1v4M489.5 432.1v4M490.5 441.9v3M491.5 427.8v3M492.5 425v2M493.5 442.9v3M494.5 444.5v4M495.5 446.9v3M496.5 436.9v3M497.5 442.4v3M499.5 439.2v2M500.5 445.9v2M501.5 445.9v2M502.5 442.4v2M504.5 433.2v2M505.5 442.2v3M506.5 446.6v2M507.5 438.2v4M509.5 435.2v3M511.5 429.7v2M513.5 443.7v2M514.5 444.2v2M515.5 423.7v3M518.5 445.8v3M519.5 444.7v4M520.5 422.9v4M522.5 431.8v3M523.5 443.2v3M527.5 443.5v2M528.5 440.8v4M532.5 443.9v2M536.5 444.3v4M537.5 439.5v4M538.5 446.6v4M539.5 446.9v3M540.5 422.6v2M544.5 431v2M545.5 434.8v4M547.5 445v4M548.5 433.4v3M550.5 440v4M551.5 437.1v2M552.5 440.8v4M553.5 445.5v3M554.5 441.7v2M555.5 444v4M557.5 442.2v3M558.5 440.8v3M559.5 439.8v3M560.5 438.2v4M561.5 437v3M562.5 445.8v3M563.5 439.6v3M564.5 446.3v4M565.5 441.5v4M566.5 433.8v4M567.5 446.1v3M569.5 446.7v3M570.5 446.9v2M571.5 427.7v3M572.5 441.4v3M573.5 435.3v2M574.5 433.6v3M575.5 445.1v3M576.5 445.1v2M578.5 436.1v3M579.5 439.9v3M581.5 428.8v4M582.5 430.2v2M583.5 445.3v3M584.5 444v4M585.5 435.1v2M586.5 441.9v4M587.5 430.3v3M589.5 442.9v2M590.5 436.2v2M591.5 446.4v4M592.5 427.2v3M593.5 441.7v3M595.5 446.3v2M596.5 443.5v2M598.5 430.9v2M600.5 442.2v2M601.5 446.8v2M605.5 429.7v3M606.5 441.3v4M607.5 446.4v3M608.5 437.1v3M609.5 438.1v4M611.5 444.6v3M614.5 440.6v2M615.5 443.5v3M616.5 434.4v4M617.5 436.2v2M618.5 434.9v4M619.5 439.6v4M620.5 444.5v4M622.5 445.2v2M625.5 437.5v3M626.5 446.2v2M627.5 441v3M629.5 434.9v4M630.5 432.9v2M632.5 443.7v4M636.5 437v2M637.5 441.7v2M638.5 444v2M641.5 443.2v3M642.5 441.2v2M645.5 441.8v2M650.5 438.7v3M651.5 444.2v4M653.5 442.7v2M654.5 442.8v4M655.5 440.8v2M656.5 443.6v3M657.5 442.4v2M658.5 439.1v2M661.5 436.4v3M662.5 431.4v2M663.5 445.3v3M665.5 443.3v2M666.5 446v2M667.5 443.3v2M669.5 435.7v2M670.5 439.3v3M671.5 444.5v3M673.5 445.2v2M675.5 439.6v4M676.5 444.1v3M677.5 435.2v2M678.5 436.4v2M679.5 439.6v3M680.5 444.9v3M681.5 432.5v2M682.5 437v3M683.5 431.7v3M684.5 443.7v3M685.5 443.9v4M686.5 441.7v4M687.5 445.9v3M688.5 444v2M692.5 438.3v2M694.5 437.2v4M695.5 443.4v4M697.5 438.8v2M698.5 431.8v4M699.5 442.1v2M700.5 428.7v2M701.5 434v4M704.5 438.1v3M706.5 436.8v3M707.5 437.7v3M708.5 443.8v3M710.5 439.8v2M711.5 441.6v3M713.5 446.6v2M714.5 446.1v2M716.5 443.8v3M717.5 445.4v4M718.5 444v2M720.5 440.8v4M722.5 440.1v2M724.5 445.5v3M731.5 436.6v3M732.5 433.5v4M733.5 430.7v4M734.5 442.8v3M737.5 445.5v4M738.5 446.1v4M740.5 436.6v4M743.5 431.3v3M745.5 441v4" stroke="#00207a" stroke-width="1" fill="none" opacity="0.5"/>
<path d="M312.5 438.3v3M314.5 436.8v2M317.5 435.8v3M318.5 434.7v2M319.5 435.5v3M321.5 431.2v3M322.5 442.5v3M325.5 439.6v2M326.5 442.6v3M327.5 443.4v3M328.5 434.9v4M331.5 434.5v4M336.5 430.1v2M337.5 433.4v4M339.5 434.9v2M344.5 440.5v3M346.5 438.7v3M347.5 434.1v3M350.5 437.3v4M351.5 439.2v3M352.5 443.7v2M355.5 435.3v3M360.5 434.6v2M361.5 443.1v3M362.5 438.2v4M363.5 444v2M366.5 440.7v3M368.5 437.7v3M372.5 443.5v4M373.5 442.6v3M374.5 438.1v2M376.5 432v4M378.5 434.3v4M379.5 434.4v2M380.5 443.6v3M382.5 434.3v3M383.5 434.5v3M384.5 439.5v3M385.5 435.4v3M386.5 432.9v4M387.5 441.7v4M388.5 442.5v2M389.5 440.6v3M392.5 431.1v3M393.5 442.8v4M396.5 436.3v2M397.5 441.6v4M398.5 438.4v3M399.5 433.4v2M401.5 438.4v3M405.5 432.5v4M409.5 443.2v4M411.5 437v3M412.5 432.6v2M413.5 437.3v4M415.5 433v4M416.5 435.8v4M417.5 438v2M418.5 435.7v4M423.5 433.1v2M424.5 442.6v2M429.5 439.9v4M430.5 442.5v4M431.5 438.4v4M432.5 433v2M433.5 435v4M436.5 439.8v2M437.5 443.4v2M438.5 438.8v2M439.5 437v3M440.5 438.3v2M441.5 441.6v2M442.5 434.1v3M444.5 433.2v4M446.5 441.8v4M447.5 430.4v2M448.5 437.1v3M449.5 443.4v3M451.5 435.6v4M453.5 439.3v2M456.5 443.8v2M458.5 436v4M461.5 438.6v2M462.5 434v2M463.5 442.6v2M464.5 432.8v4M467.5 440.6v3M473.5 432.9v2M477.5 437.8v4M478.5 438.9v3M479.5 430.6v2M481.5 430.4v4M482.5 431.4v2M484.5 442.4v3M488.5 441.5v2M490.5 433.5v3M491.5 433.5v2M493.5 433.9v4M494.5 440.3v3M495.5 442.5v3M496.5 430.2v2M498.5 430.4v2M499.5 430.6v4M500.5 431v3M501.5 437.8v3M502.5 439v2M503.5 432.9v3M504.5 431.5v4M507.5 438v4M511.5 440.1v3M512.5 439.1v4M515.5 442.3v4M516.5 442.7v4M517.5 439.8v2M518.5 437.9v4M522.5 431.3v2M524.5 430.7v2M528.5 437.8v4M530.5 432.1v2M531.5 443.4v4M532.5 432v4M533.5 437.2v2M534.5 443.4v3M536.5 441.9v4M538.5 437.9v4M539.5 441.2v2M543.5 439.4v4M545.5 441.6v3M546.5 439.9v4M547.5 436v2M549.5 437.3v4M550.5 440.2v2M551.5 433.8v3M553.5 438.5v3M555.5 431v2M558.5 435.4v3M560.5 433v4M562.5 430.3v2M564.5 439.5v3M566.5 438.7v3M567.5 439.9v3M570.5 435.4v2M571.5 443.7v4M573.5 438.7v3M574.5 433.5v3M575.5 434.8v4M578.5 440.8v2M581.5 431.5v3M582.5 434.7v2M583.5 443.5v2M584.5 430.7v4M585.5 443.1v3M587.5 440.9v4M588.5 433v3M592.5 431.7v2M595.5 443.3v3M597.5 433.6v2M598.5 442.1v4M599.5 443.5v4M601.5 431v2M603.5 430.9v2M604.5 431v2M605.5 431.6v3M607.5 442.3v3M608.5 431.4v3M609.5 439.8v2M610.5 440.2v2M612.5 434.5v2M613.5 441.6v2M614.5 432.9v3M616.5 430.1v2M617.5 431.3v4M619.5 433.7v2M620.5 431.4v2M621.5 439.1v4M622.5 430.9v3M623.5 441.9v2M625.5 437.6v2M626.5 441v3M627.5 432.3v4M628.5 433.5v2M629.5 435.3v2M630.5 432.7v2M633.5 442.5v3M635.5 439.3v3M636.5 430.4v3M637.5 431.5v4M639.5 431.6v3M642.5 430.9v2M643.5 435.1v3M644.5 434.7v2M645.5 433.1v4M646.5 438.6v3M647.5 443.2v4M648.5 437.3v4M650.5 431.2v3M651.5 443.2v4M652.5 441.3v4M653.5 432.9v4M655.5 439.8v3M656.5 432.5v2M662.5 439.1v3M664.5 435.1v3M669.5 442.6v2M671.5 436.4v4M672.5 433v2M673.5 443.7v2M674.5 434.4v2M676.5 439.5v2M677.5 436.8v2M678.5 437.2v4M679.5 443.9v4M681.5 436.6v3M683.5 433.2v3M684.5 432.5v3M686.5 435.2v2M687.5 441.7v2M689.5 436.4v4M690.5 435.4v3M691.5 431.7v3M692.5 431.9v4M693.5 434.5v2M694.5 435.9v2M695.5 436.3v3M696.5 438v2M699.5 443.2v3M700.5 436.1v2M703.5 440.5v2M705.5 437.4v3M708.5 431.6v2M709.5 437.4v4M713.5 431.1v3M714.5 432.5v4M717.5 443.4v3M719.5 440.4v4M721.5 434.6v2M722.5 434.8v4M725.5 434.5v2M727.5 443.6v4M728.5 443.5v4M729.5 440.3v3M730.5 436.9v3M731.5 433.1v2M733.5 437.1v3M736.5 436.4v3M737.5 435v4M739.5 441.4v4M740.5 439.5v2M741.5 431.6v4" stroke="#1a6cf0" stroke-width="1" fill="none" opacity="0.35"/>
<rect x="312" y="455.2" width="435" height="1.2" fill="#000"/>
<rect x="392" y="353" width="1.02" height="6.6" fill="url(#hE)"/>
<rect x="393" y="350.1" width="1.02" height="9.5" fill="url(#hC)"/>
<rect x="394" y="341.3" width="1.02" height="18.3" fill="url(#hE)"/>
<rect x="395" y="332.5" width="1.02" height="27.1" fill="url(#hE)"/>
<rect x="396" y="323.6" width="1.02" height="36" fill="url(#hE)"/>
<rect x="397" y="325.2" width="1.02" height="34.4" fill="url(#hE)"/>
<rect x="398" y="331.3" width="1.02" height="28.3" fill="url(#hC)"/>
<rect x="399" y="337.4" width="1.02" height="22.2" fill="url(#hC)"/>
<rect x="400" y="334.9" width="1.02" height="24.7" fill="url(#hC)"/>
<rect x="401" y="331.5" width="1.02" height="28.1" fill="url(#hC)"/>
<rect x="402" y="328" width="1.02" height="31.6" fill="url(#hE)"/>
<rect x="403" y="330.5" width="1.02" height="29.1" fill="url(#hC)"/>
<rect x="404" y="335.5" width="1.02" height="24.1" fill="url(#hE)"/>
<rect x="405" y="340.5" width="1.02" height="19.1" fill="url(#hE)"/>
<rect x="406" y="344.1" width="1.02" height="15.5" fill="url(#hE)"/>
<rect x="407" y="346.2" width="1.02" height="13.4" fill="url(#hC)"/>
<rect x="408" y="348.4" width="1.02" height="11.2" fill="url(#hC)"/>
<rect x="409" y="344.6" width="1.02" height="15" fill="url(#hE)"/>
<rect x="410" y="338.3" width="1.02" height="21.3" fill="url(#hE)"/>
<rect x="411" y="332" width="1.02" height="27.6" fill="url(#hE)"/>
<rect x="412" y="320" width="1.02" height="39.6" fill="url(#hE)"/>
<rect x="413" y="308" width="1.02" height="51.6" fill="url(#hC)"/>
<rect x="414" y="298.8" width="1.02" height="60.9" fill="url(#hB)"/>
<rect x="415" y="292.2" width="1.02" height="67.4" fill="url(#hB)"/>
<rect x="416" y="289.3" width="1.02" height="70.3" fill="url(#hC)"/>
<rect x="417" y="290" width="1.02" height="69.6" fill="url(#hB)"/>
<rect x="418" y="290.7" width="1.02" height="68.9" fill="url(#hA)"/>
<rect x="419" y="288.8" width="1.02" height="70.8" fill="url(#hC)"/>
<rect x="420" y="284.5" width="1.02" height="75.1" fill="url(#hC)"/>
<rect x="421" y="280.2" width="1.02" height="79.4" fill="url(#hA)"/>
<rect x="422" y="276.5" width="1.02" height="83.1" fill="url(#hA)"/>
<rect x="423" y="273.5" width="1.02" height="86.1" fill="url(#hB)"/>
<rect x="424" y="270.4" width="1.02" height="89.2" fill="url(#hA)"/>
<rect x="425" y="269.4" width="1.02" height="90.2" fill="url(#hB)"/>
<rect x="426" y="276.2" width="1.02" height="83.4" fill="url(#hD)"/>
<rect x="427" y="283" width="1.02" height="76.6" fill="url(#hA)"/>
<rect x="428" y="281.4" width="1.02" height="78.2" fill="url(#hB)"/>
<rect x="429" y="279.8" width="1.02" height="79.8" fill="url(#hC)"/>
<rect x="430" y="277.7" width="1.02" height="81.9" fill="url(#hB)"/>
<rect x="431" y="275" width="1.02" height="84.6" fill="url(#hA)"/>
<rect x="432" y="272.3" width="1.02" height="87.3" fill="url(#hD)"/>
<rect x="433" y="269.9" width="1.02" height="89.7" fill="url(#hB)"/>
<rect x="434" y="267.8" width="1.02" height="91.8" fill="url(#hA)"/>
<rect x="435" y="265.7" width="1.02" height="93.9" fill="url(#hB)"/>
<rect x="436" y="263.6" width="1.02" height="96" fill="url(#hC)"/>
<rect x="437" y="266.1" width="1.02" height="93.5" fill="url(#hB)"/>
<rect x="438" y="270.6" width="1.02" height="89" fill="url(#hD)"/>
<rect x="439" y="275" width="1.02" height="84.6" fill="url(#hA)"/>
<rect x="440" y="276.2" width="1.02" height="83.4" fill="url(#hC)"/>
<rect x="441" y="277.4" width="1.02" height="82.2" fill="url(#hC)"/>
<rect x="442" y="277.5" width="1.02" height="82.1" fill="url(#hC)"/>
<rect x="443" y="276.5" width="1.02" height="83.1" fill="url(#hD)"/>
<rect x="444" y="275.5" width="1.02" height="84.1" fill="url(#hD)"/>
<rect x="445" y="275.5" width="1.02" height="84.1" fill="url(#hD)"/>
<rect x="446" y="276.5" width="1.02" height="83.1" fill="url(#hA)"/>
<rect x="447" y="277.5" width="1.02" height="82.1" fill="url(#hD)"/>
<rect x="448" y="278.5" width="1.02" height="81.1" fill="url(#hA)"/>
<rect x="449" y="279.5" width="1.02" height="80.1" fill="url(#hD)"/>
<rect x="450" y="280.5" width="1.02" height="79.1" fill="url(#hD)"/>
<rect x="451" y="281.5" width="1.02" height="78.1" fill="url(#hC)"/>
<rect x="452" y="282.5" width="1.02" height="77.1" fill="url(#hC)"/>
<rect x="453" y="283.5" width="1.02" height="76.1" fill="url(#hD)"/>
<rect x="454" y="283.7" width="1.02" height="75.9" fill="url(#hB)"/>
<rect x="455" y="283.1" width="1.02" height="76.5" fill="url(#hA)"/>
<rect x="456" y="282.4" width="1.02" height="77.2" fill="url(#hB)"/>
<rect x="457" y="283.6" width="1.02" height="76" fill="url(#hC)"/>
<rect x="458" y="288.8" width="1.02" height="70.8" fill="url(#hC)"/>
<rect x="459" y="294" width="1.02" height="65.6" fill="url(#hC)"/>
<rect x="460" y="305.6" width="1.02" height="54" fill="url(#hB)"/>
<rect x="461" y="317.2" width="1.02" height="42.4" fill="url(#hB)"/>
<rect x="462" y="327.5" width="1.02" height="32.1" fill="url(#hB)"/>
<rect x="463" y="336.6" width="1.02" height="23" fill="url(#hE)"/>
<rect x="464" y="342.5" width="1.02" height="17.1" fill="url(#hE)"/>
<rect x="465" y="340.7" width="1.02" height="18.9" fill="url(#hE)"/>
<rect x="466" y="339" width="1.02" height="20.6" fill="url(#hC)"/>
<rect x="467" y="338.1" width="1.02" height="21.5" fill="url(#hE)"/>
<rect x="468" y="337.3" width="1.02" height="22.3" fill="url(#hE)"/>
<rect x="469" y="336.4" width="1.02" height="23.2" fill="url(#hC)"/>
<rect x="470" y="335.6" width="1.02" height="24" fill="url(#hE)"/>
<rect x="471" y="334.7" width="1.02" height="24.9" fill="url(#hC)"/>
<rect x="472" y="333.9" width="1.02" height="25.7" fill="url(#hE)"/>
<rect x="473" y="333" width="1.02" height="26.6" fill="url(#hE)"/>
<rect x="474" y="330.9" width="1.02" height="28.7" fill="url(#hE)"/>
<rect x="475" y="328.8" width="1.02" height="30.8" fill="url(#hE)"/>
<rect x="476" y="326.6" width="1.02" height="33" fill="url(#hC)"/>
<rect x="477" y="330.5" width="1.02" height="29.1" fill="url(#hE)"/>
<rect x="478" y="336.8" width="1.02" height="22.8" fill="url(#hE)"/>
<rect x="479" y="342" width="1.02" height="17.6" fill="url(#hE)"/>
<rect x="480" y="346" width="1.02" height="13.6" fill="url(#hE)"/>
<rect x="481" y="350" width="1.02" height="9.6" fill="url(#hE)"/>
<rect x="482" y="352.6" width="1.02" height="7" fill="url(#hE)"/>
<rect x="514" y="352" width="1.02" height="7.6" fill="url(#hE)"/>
<rect x="515" y="348.1" width="1.02" height="11.5" fill="url(#hE)"/>
<rect x="516" y="345.6" width="1.02" height="14" fill="url(#hE)"/>
<rect x="517" y="348.8" width="1.02" height="10.8" fill="url(#hE)"/>
<rect x="518" y="352" width="1.02" height="7.6" fill="url(#hE)"/>
<rect x="519" y="350" width="1.02" height="9.6" fill="url(#hC)"/>
<rect x="520" y="348" width="1.02" height="11.6" fill="url(#hC)"/>
<rect x="521" y="346.6" width="1.02" height="13" fill="url(#hE)"/>
<rect x="522" y="345.1" width="1.02" height="14.5" fill="url(#hE)"/>
<rect x="523" y="348" width="1.02" height="11.6" fill="url(#hC)"/>
<rect x="524" y="351.3" width="1.02" height="8.3" fill="url(#hE)"/>
<rect x="525" y="353" width="1.02" height="6.6" fill="url(#hE)"/>
<rect x="526" y="353" width="1.02" height="6.6" fill="url(#hE)"/>
<rect x="527" y="353" width="1.02" height="6.6" fill="url(#hC)"/>
<rect x="528" y="351.8" width="1.02" height="7.8" fill="url(#hE)"/>
<rect x="529" y="349.5" width="1.02" height="10.1" fill="url(#hE)"/>
<rect x="530" y="347.2" width="1.02" height="12.4" fill="url(#hC)"/>
<rect x="531" y="342.2" width="1.02" height="17.4" fill="url(#hE)"/>
<rect x="532" y="334.5" width="1.02" height="25.1" fill="url(#hC)"/>
<rect x="533" y="326.8" width="1.02" height="32.8" fill="url(#hB)"/>
<rect x="534" y="320.9" width="1.02" height="38.7" fill="url(#hB)"/>
<rect x="535" y="316.6" width="1.02" height="43" fill="url(#hC)"/>
<rect x="536" y="312.4" width="1.02" height="47.2" fill="url(#hB)"/>
<rect x="537" y="309.1" width="1.02" height="50.5" fill="url(#hA)"/>
<rect x="538" y="309.4" width="1.02" height="50.2" fill="url(#hA)"/>
<rect x="539" y="309.8" width="1.02" height="49.8" fill="url(#hB)"/>
<rect x="540" y="307.6" width="1.02" height="52" fill="url(#hB)"/>
<rect x="541" y="302.8" width="1.02" height="56.8" fill="url(#hB)"/>
<rect x="542" y="298" width="1.02" height="61.6" fill="url(#hB)"/>
<rect x="543" y="293.2" width="1.02" height="66.4" fill="url(#hC)"/>
<rect x="544" y="288.4" width="1.02" height="71.2" fill="url(#hD)"/>
<rect x="545" y="286.7" width="1.02" height="72.9" fill="url(#hA)"/>
<rect x="546" y="292.3" width="1.02" height="67.3" fill="url(#hA)"/>
<rect x="547" y="298" width="1.02" height="61.6" fill="url(#hD)"/>
<rect x="548" y="296" width="1.02" height="63.6" fill="url(#hB)"/>
<rect x="549" y="294" width="1.02" height="65.6" fill="url(#hA)"/>
<rect x="550" y="292.3" width="1.02" height="67.3" fill="url(#hD)"/>
<rect x="551" y="291" width="1.02" height="68.6" fill="url(#hD)"/>
<rect x="552" y="289.7" width="1.02" height="69.9" fill="url(#hA)"/>
<rect x="553" y="287.3" width="1.02" height="72.3" fill="url(#hC)"/>
<rect x="554" y="284" width="1.02" height="75.6" fill="url(#hD)"/>
<rect x="555" y="280.7" width="1.02" height="78.9" fill="url(#hD)"/>
<rect x="556" y="281.6" width="1.02" height="78" fill="url(#hB)"/>
<rect x="557" y="286.8" width="1.02" height="72.8" fill="url(#hC)"/>
<rect x="558" y="292" width="1.02" height="67.6" fill="url(#hB)"/>
<rect x="559" y="291.2" width="1.02" height="68.4" fill="url(#hD)"/>
<rect x="560" y="290.4" width="1.02" height="69.2" fill="url(#hA)"/>
<rect x="561" y="290.7" width="1.02" height="68.9" fill="url(#hD)"/>
<rect x="562" y="292" width="1.02" height="67.6" fill="url(#hD)"/>
<rect x="563" y="293.3" width="1.02" height="66.3" fill="url(#hD)"/>
<rect x="564" y="294.7" width="1.02" height="64.9" fill="url(#hB)"/>
<rect x="565" y="296" width="1.02" height="63.6" fill="url(#hD)"/>
<rect x="566" y="297.3" width="1.02" height="62.3" fill="url(#hC)"/>
<rect x="567" y="298.5" width="1.02" height="61.1" fill="url(#hD)"/>
<rect x="568" y="299.5" width="1.02" height="60.1" fill="url(#hC)"/>
<rect x="569" y="300.5" width="1.02" height="59.1" fill="url(#hB)"/>
<rect x="570" y="301.3" width="1.02" height="58.3" fill="url(#hC)"/>
<rect x="571" y="302" width="1.02" height="57.6" fill="url(#hD)"/>
<rect x="572" y="302.7" width="1.02" height="56.9" fill="url(#hD)"/>
<rect x="573" y="303.8" width="1.02" height="55.8" fill="url(#hA)"/>
<rect x="574" y="305.3" width="1.02" height="54.3" fill="url(#hA)"/>
<rect x="575" y="306.8" width="1.02" height="52.8" fill="url(#hA)"/>
<rect x="576" y="313" width="1.02" height="46.6" fill="url(#hB)"/>
<rect x="577" y="319.7" width="1.02" height="39.9" fill="url(#hA)"/>
<rect x="578" y="326.2" width="1.02" height="33.4" fill="url(#hC)"/>
<rect x="579" y="332.5" width="1.02" height="27.1" fill="url(#hB)"/>
<rect x="580" y="338.8" width="1.02" height="20.8" fill="url(#hC)"/>
<rect x="581" y="344" width="1.02" height="15.6" fill="url(#hB)"/>
<rect x="582" y="348" width="1.02" height="11.6" fill="url(#hC)"/>
<rect x="583" y="352" width="1.02" height="7.6" fill="url(#hC)"/>
<rect x="587" y="347.6" width="1.02" height="12" fill="url(#hE)"/>
<rect x="588" y="350.8" width="1.02" height="8.8" fill="url(#hE)"/>
<rect x="594" y="351.4" width="1.02" height="8.2" fill="url(#hC)"/>
<rect x="595" y="347.8" width="1.02" height="11.8" fill="url(#hE)"/>
<rect x="596" y="348.5" width="1.02" height="11.1" fill="url(#hC)"/>
<path d="M312.5 353.3v2.4M313.5 355v2.4M314.5 355.4v2.4M315.5 350.9v2.4M316.5 354.5v2.4M319.5 355.1v2.4M321.5 354.6v2.4M325.5 353.1v2.4M326.5 354.3v2.4M331.5 354.2v2.4M333.5 353.9v2.4M334.5 354.5v2.4M340.5 354.5v2.4M342.5 352.8v2.4M344.5 355.7v2.4M346.5 354.7v2.4M347.5 354.8v2.4M348.5 353.7v2.4M349.5 354.9v2.4M351.5 353.7v2.4M354.5 353.2v2.4M356.5 354.8v2.4M358.5 352.8v2.4M360.5 353.1v2.4M363.5 354.6v2.4M364.5 353.8v2.4M369.5 356.5v2.4M371.5 354.2v2.4M372.5 353.8v2.4M373.5 352.3v2.4M375.5 354.5v2.4M376.5 354.1v2.4M379.5 354.1v2.4M382.5 353.8v2.4M387.5 354.5v2.4M388.5 353.1v2.4M389.5 352.7v2.4M391.5 354.5v2.4M393.5 346.2v2.4M394.5 337.3v2.4M395.5 325v2.4M398.5 324.7v2.4M400.5 329.8v2.4M401.5 318.6v2.4M404.5 329.6v2.4M405.5 338.3v2.4M407.5 340.1v2.4M408.5 347.1v2.4M409.5 337.3v2.4M410.5 334.7v2.4M412.5 318.3v2.4M414.5 289.4v2.4M415.5 285.6v2.4M416.5 284.3v2.4M418.5 286v2.4M419.5 277v2.4M420.5 275v2.4M421.5 276.9v2.4M425.5 265.2v2.4M427.5 279v2.4M428.5 276.1v2.4M429.5 273.5v2.4M430.5 276.3v2.4M431.5 270v2.4M437.5 256.7v2.4M438.5 265.4v2.4M443.5 273.9v2.4M444.5 273.3v2.4M449.5 274.6v2.4M452.5 277.3v2.4M453.5 281.1v2.4M454.5 281.1v2.4M456.5 278.8v2.4M457.5 282.5v2.4M461.5 311.6v2.4M463.5 333.3v2.4M465.5 340v2.4M468.5 334.5v2.4M471.5 327.7v2.4M475.5 322.8v2.4M478.5 335.8v2.4M482.5 345.4v2.4M484.5 352.9v2.4M485.5 355v2.4M486.5 354.2v2.4M489.5 353.9v2.4M490.5 353.7v2.4M494.5 353v2.4M495.5 353.6v2.4M496.5 353.1v2.4M498.5 355v2.4M500.5 353.5v2.4M501.5 354.8v2.4M502.5 351.6v2.4M504.5 354.1v2.4M506.5 353.3v2.4M507.5 354.7v2.4M511.5 354.2v2.4M514.5 345v2.4M516.5 342.1v2.4M517.5 344.7v2.4M519.5 345v2.4M521.5 346.3v2.4M523.5 336.7v2.4M524.5 345v2.4M526.5 352.5v2.4M527.5 348.5v2.4M533.5 323.2v2.4M534.5 316v2.4M537.5 304.5v2.4M540.5 294.6v2.4M541.5 297v2.4M542.5 294.1v2.4M543.5 287.5v2.4M550.5 287v2.4M551.5 286.9v2.4M552.5 281.6v2.4M557.5 281.1v2.4M558.5 285.7v2.4M559.5 287v2.4M560.5 282.6v2.4M561.5 287.7v2.4M563.5 290.7v2.4M568.5 289.3v2.4M571.5 298.8v2.4M572.5 293.5v2.4M573.5 299.3v2.4M577.5 315.1v2.4M579.5 328.4v2.4M580.5 332.1v2.4M583.5 344.1v2.4M586.5 350v2.4M591.5 352.9v2.4M592.5 351.8v2.4M594.5 340.3v2.4M595.5 341v2.4M597.5 350.1v2.4M598.5 354.4v2.4M599.5 353.8v2.4M601.5 355.4v2.4M605.5 355.4v2.4M606.5 354.1v2.4M608.5 353.5v2.4M609.5 352.5v2.4M613.5 355.1v2.4M615.5 354.4v2.4M618.5 353.1v2.4M619.5 353.8v2.4M621.5 353.8v2.4M624.5 353.3v2.4M625.5 353.6v2.4M627.5 354.3v2.4M628.5 351.9v2.4M629.5 352.5v2.4M635.5 353.2v2.4M636.5 355.2v2.4M638.5 355.9v2.4M642.5 353.5v2.4M643.5 354.1v2.4M646.5 355.7v2.4M650.5 353.9v2.4M652.5 353.8v2.4M655.5 353.9v2.4M660.5 354.5v2.4M663.5 353.6v2.4M664.5 353.4v2.4M666.5 353.1v2.4M667.5 353.7v2.4M669.5 354.8v2.4M670.5 355.3v2.4M671.5 355v2.4M673.5 353.9v2.4M678.5 353v2.4M688.5 354v2.4M692.5 353.6v2.4M693.5 354.1v2.4M694.5 354.2v2.4M697.5 352.9v2.4M700.5 354.3v2.4M703.5 354.2v2.4M705.5 353.5v2.4M707.5 355.7v2.4M708.5 354.6v2.4M709.5 355v2.4M711.5 353.9v2.4M712.5 353.8v2.4M713.5 352.9v2.4M714.5 353.8v2.4M715.5 355.2v2.4M718.5 354v2.4M719.5 354.1v2.4M724.5 354v2.4M726.5 354.6v2.4M728.5 353v2.4M734.5 354.9v2.4M738.5 353.2v2.4M740.5 353.7v2.4M743.5 353.2v2.4M744.5 353.9v2.4" stroke="#0a78c8" stroke-width="1" fill="none" opacity="0.9"/>
<polygon points="312,355.5 313,355.5 313,357.2 314,357.2 314,357.6 315,357.6 315,353.1 316,353.1 316,356.7 317,356.7 317,356.3 318,356.3 318,355 319,355 319,357.3 320,357.3 320,356.5 321,356.5 321,356.8 322,356.8 322,356.3 323,356.3 323,356.6 324,356.6 324,358.5 325,358.5 325,355.3 326,355.3 326,356.5 327,356.5 327,356.6 328,356.6 328,356 329,356 329,356.3 330,356.3 330,356.7 331,356.7 331,356.4 332,356.4 332,354.9 333,354.9 333,356.1 334,356.1 334,356.7 335,356.7 335,356.5 336,356.5 336,355.3 337,355.3 337,356.2 338,356.2 338,355.2 339,355.2 339,355.2 340,355.2 340,356.7 341,356.7 341,356.2 342,356.2 342,355 343,355 343,356.1 344,356.1 344,357.9 345,357.9 345,354.3 346,354.3 346,356.9 347,356.9 347,357 348,357 348,355.9 349,355.9 349,357.1 350,357.1 350,355.3 351,355.3 351,355.9 352,355.9 352,353.8 353,353.8 353,356.2 354,356.2 354,355.4 355,355.4 355,355.3 356,355.3 356,357 357,357 357,356.2 358,356.2 358,355 359,355 359,355.3 360,355.3 360,355.3 361,355.3 361,355.8 362,355.8 362,357 363,357 363,356.8 364,356.8 364,356 365,356 365,355 366,355 366,356.8 367,356.8 367,356.2 368,356.2 368,356.1 369,356.1 369,358.7 370,358.7 370,354.6 371,354.6 371,356.4 372,356.4 372,356 373,356 373,354.5 374,354.5 374,355.3 375,355.3 375,356.7 376,356.7 376,356.3 377,356.3 377,355.8 378,355.8 378,355.6 379,355.6 379,356.3 380,356.3 380,356 381,356 381,356.1 382,356.1 382,356 383,356 383,355.6 384,355.6 384,355 385,355 385,354 386,354 386,357.8 387,357.8 387,356.7 388,356.7 388,355.3 389,355.3 389,354.9 390,354.9 390,355.2 391,355.2 391,356.7 392,356.7 392,351.4 393,351.4 393,348.4 394,348.4 394,339.5 395,339.5 395,327.2 396,327.2 396,320.5 397,320.5 397,324.6 398,324.6 398,326.9 399,326.9 399,337.8 400,337.8 400,332 401,332 401,320.8 402,320.8 402,324.8 403,324.8 403,331.4 404,331.4 404,331.8 405,331.8 405,340.5 406,340.5 406,343.8 407,343.8 407,342.3 408,342.3 408,349.3 409,349.3 409,339.5 410,339.5 410,336.9 411,336.9 411,333 412,333 412,320.5 413,320.5 413,306.8 414,306.8 414,291.6 415,291.6 415,287.8 416,287.8 416,286.5 417,286.5 417,290.6 418,290.6 418,288.2 419,288.2 419,279.2 420,279.2 420,277.2 421,277.2 421,279.1 422,279.1 422,270.6 423,270.6 423,273.1 424,273.1 424,265.8 425,265.8 425,267.4 426,267.4 426,278.7 427,278.7 427,281.2 428,281.2 428,278.3 429,278.3 429,275.7 430,275.7 430,278.5 431,278.5 431,272.2 432,272.2 432,270.8 433,270.8 433,263.3 434,263.3 434,266.3 435,266.3 435,270.2 436,270.2 436,264.1 437,264.1 437,258.9 438,258.9 438,267.6 439,267.6 439,275.5 440,275.5 440,276.8 441,276.8 441,276.7 442,276.7 442,270.3 443,270.3 443,276.1 444,276.1 444,275.5 445,275.5 445,272.6 446,272.6 446,276.5 447,276.5 447,270 448,270 448,273.3 449,273.3 449,276.8 450,276.8 450,277.6 451,277.6 451,282 452,282 452,279.5 453,279.5 453,283.3 454,283.3 454,283.3 455,283.3 455,272 456,272 456,281 457,281 457,284.7 458,284.7 458,285.7 459,285.7 459,292.6 460,292.6 460,300.5 461,300.5 461,313.8 462,313.8 462,324.1 463,324.1 463,335.5 464,335.5 464,336.7 465,336.7 465,342.2 466,342.2 466,335.6 467,335.6 467,334.4 468,334.4 468,336.7 469,336.7 469,334.2 470,334.2 470,332.4 471,332.4 471,329.9 472,329.9 472,333.1 473,333.1 473,331.4 474,331.4 474,326.3 475,326.3 475,325 476,325 476,324.1 477,324.1 477,328 478,328 478,338 479,338 479,336.4 480,336.4 480,342.9 481,342.9 481,347 482,347 482,347.6 483,347.6 483,354.7 484,354.7 484,355.1 485,355.1 485,357.2 486,357.2 486,356.4 487,356.4 487,355.9 488,355.9 488,354.5 489,354.5 489,356.1 490,356.1 490,355.9 491,355.9 491,356.7 492,356.7 492,355.1 493,355.1 493,355.3 494,355.3 494,355.2 495,355.2 495,355.8 496,355.8 496,355.3 497,355.3 497,356.9 498,356.9 498,357.2 499,357.2 499,357.1 500,357.1 500,355.7 501,355.7 501,357 502,357 502,353.8 503,353.8 503,354.9 504,354.9 504,356.3 505,356.3 505,353.9 506,353.9 506,355.5 507,355.5 507,356.9 508,356.9 508,356 509,356 509,357 510,357 510,354.8 511,354.8 511,356.4 512,356.4 512,355.3 513,355.3 513,353.1 514,353.1 514,347.2 515,347.2 515,346 516,346 516,344.3 517,344.3 517,346.9 518,346.9 518,347.3 519,347.3 519,347.2 520,347.2 520,347.2 521,347.2 521,348.5 522,348.5 522,342.3 523,342.3 523,338.9 524,338.9 524,347.2 525,347.2 525,347 526,347 526,354.7 527,354.7 527,350.7 528,350.7 528,350 529,350 529,345.1 530,345.1 530,342.6 531,342.6 531,341.4 532,341.4 532,326.1 533,326.1 533,325.4 534,325.4 534,318.2 535,318.2 535,312.5 536,312.5 536,307.9 537,307.9 537,306.7 538,306.7 538,308.6 539,308.6 539,309 540,309 540,296.8 541,296.8 541,299.2 542,299.2 542,296.3 543,296.3 543,289.7 544,289.7 544,282 545,282 545,281.6 546,281.6 546,289.9 547,289.9 547,291.5 548,291.5 548,293 549,293 549,296 550,296 550,289.2 551,289.2 551,289.1 552,289.1 552,283.8 553,283.8 553,285.6 554,285.6 554,279.7 555,279.7 555,273.5 556,273.5 556,276.2 557,276.2 557,283.3 558,283.3 558,287.9 559,287.9 559,289.2 560,289.2 560,284.8 561,284.8 561,289.9 562,289.9 562,291.8 563,291.8 563,292.9 564,292.9 564,289.7 565,289.7 565,294.8 566,294.8 566,290.7 567,290.7 567,297.6 568,297.6 568,291.5 569,291.5 569,300.7 570,300.7 570,302.2 571,302.2 571,301 572,301 572,295.7 573,295.7 573,301.5 574,301.5 574,300.6 575,300.6 575,304.7 576,304.7 576,312.3 577,312.3 577,317.3 578,317.3 578,323.5 579,323.5 579,330.6 580,330.6 580,334.3 581,334.3 581,339.9 582,339.9 582,348.7 583,348.7 583,346.3 584,346.3 584,353.3 585,353.3 585,355.8 586,355.8 586,352.2 587,352.2 587,349.3 588,349.3 588,350 589,350 589,353.6 590,353.6 590,354.1 591,354.1 591,355.1 592,355.1 592,354 593,354 593,354.7 594,354.7 594,342.5 595,342.5 595,343.2 596,343.2 596,346.7 597,346.7 597,352.3 598,352.3 598,356.6 599,356.6 599,356 600,356 600,356.5 601,356.5 601,357.6 602,357.6 602,356.8 603,356.8 603,355.3 604,355.3 604,356.5 605,356.5 605,357.6 606,357.6 606,356.3 607,356.3 607,358.3 608,358.3 608,355.7 609,355.7 609,354.7 610,354.7 610,357.3 611,357.3 611,358 612,358 612,355.4 613,355.4 613,357.3 614,357.3 614,355.7 615,355.7 615,356.6 616,356.6 616,356.4 617,356.4 617,356.6 618,356.6 618,355.3 619,355.3 619,356 620,356 620,355.9 621,355.9 621,356 622,356 622,356.2 623,356.2 623,356.2 624,356.2 624,355.5 625,355.5 625,355.8 626,355.8 626,355.9 627,355.9 627,356.5 628,356.5 628,354.1 629,354.1 629,354.7 630,354.7 630,355.2 631,355.2 631,357.2 632,357.2 632,355.4 633,355.4 633,355.8 634,355.8 634,357.1 635,357.1 635,355.4 636,355.4 636,357.4 637,357.4 637,355.8 638,355.8 638,358.1 639,358.1 639,354.6 640,354.6 640,355.8 641,355.8 641,356.2 642,356.2 642,355.7 643,355.7 643,356.3 644,356.3 644,356.6 645,356.6 645,356.2 646,356.2 646,357.9 647,357.9 647,355 648,355 648,357.6 649,357.6 649,355.2 650,355.2 650,356.1 651,356.1 651,355.7 652,355.7 652,356 653,356 653,356.6 654,356.6 654,357.4 655,357.4 655,356.1 656,356.1 656,356.1 657,356.1 657,356.7 658,356.7 658,356.7 659,356.7 659,357.2 660,357.2 660,356.7 661,356.7 661,356.4 662,356.4 662,355.1 663,355.1 663,355.8 664,355.8 664,355.6 665,355.6 665,356.3 666,356.3 666,355.3 667,355.3 667,355.9 668,355.9 668,355.4 669,355.4 669,357 670,357 670,357.5 671,357.5 671,357.2 672,357.2 672,356.6 673,356.6 673,356.1 674,356.1 674,356.5 675,356.5 675,356.8 676,356.8 676,357.4 677,357.4 677,357 678,357 678,355.2 679,355.2 679,355.6 680,355.6 680,356.9 681,356.9 681,356 682,356 682,357.3 683,357.3 683,355.6 684,355.6 684,355.7 685,355.7 685,356.3 686,356.3 686,355.1 687,355.1 687,355.8 688,355.8 688,356.2 689,356.2 689,355.5 690,355.5 690,357.2 691,357.2 691,356.5 692,356.5 692,355.8 693,355.8 693,356.3 694,356.3 694,356.4 695,356.4 695,354.6 696,354.6 696,355.8 697,355.8 697,355.1 698,355.1 698,356.6 699,356.6 699,356.9 700,356.9 700,356.5 701,356.5 701,357.7 702,357.7 702,356.9 703,356.9 703,356.4 704,356.4 704,356.5 705,356.5 705,355.7 706,355.7 706,357.6 707,357.6 707,357.9 708,357.9 708,356.8 709,356.8 709,357.2 710,357.2 710,355.3 711,355.3 711,356.1 712,356.1 712,356 713,356 713,355.1 714,355.1 714,356 715,356 715,357.4 716,357.4 716,356.4 717,356.4 717,357.8 718,357.8 718,356.2 719,356.2 719,356.3 720,356.3 720,355.2 721,355.2 721,356.3 722,356.3 722,357.7 723,357.7 723,357.1 724,357.1 724,356.2 725,356.2 725,356.5 726,356.5 726,356.8 727,356.8 727,354.4 728,354.4 728,355.2 729,355.2 729,355.8 730,355.8 730,355.8 731,355.8 731,355.7 732,355.7 732,356.1 733,356.1 733,355.8 734,355.8 734,357.1 735,357.1 735,356.7 736,356.7 736,358.1 737,358.1 737,355.3 738,355.3 738,355.4 739,355.4 739,355.7 740,355.7 740,355.9 741,355.9 741,356.2 742,356.2 742,357.5 743,357.5 743,355.4 744,355.4 744,356.1 745,356.1 745,355.7 746,355.7 746,356.6 747,356.6 747,359.6 746,359.6 746,358.5 745,358.5 745,358.4 744,358.4 744,358.8 743,358.8 743,360.2 742,360.2 742,359.4 741,359.4 741,359.4 740,359.4 740,358.3 739,358.3 739,358.5 738,358.5 738,357.8 737,357.8 737,360.4 736,360.4 736,359.4 735,359.4 735,359.3 734,359.3 734,358.3 733,358.3 733,359.3 732,359.3 732,358.1 731,358.1 731,358.8 730,358.8 730,358.1 729,358.1 729,357.8 728,357.8 728,357.1 727,357.1 727,359.7 726,359.7 726,360 725,360 725,359.3 724,359.3 724,360.4 723,360.4 723,360.4 722,360.4 722,359.5 721,359.5 721,358.3 720,358.3 720,359.8 719,359.8 719,358.9 718,358.9 718,360.4 717,360.4 717,359.7 716,359.7 716,360.4 715,360.4 715,358.6 714,358.6 714,357.3 713,357.3 713,359.2 712,359.2 712,359.1 711,359.1 711,357.8 710,357.8 710,359.6 709,359.6 709,360.2 708,360.2 708,360.4 707,360.4 707,360.1 706,360.1 706,358.7 705,358.7 705,359.9 704,359.9 704,359.5 703,359.5 703,360.3 702,360.3 702,360.1 701,360.1 701,359.8 700,359.8 700,359.9 699,359.9 699,359.4 698,359.4 698,358 697,358 697,358.7 696,358.7 696,357.5 695,357.5 695,359 694,359 694,359.2 693,359.2 693,358.4 692,358.4 692,359.8 691,359.8 691,360.4 690,360.4 690,358.1 689,358.1 689,359.8 688,359.8 688,358.8 687,358.8 687,358.4 686,358.4 686,359.8 685,359.8 685,358.1 684,358.1 684,358.5 683,358.5 683,360.4 682,360.4 682,358.9 681,358.9 681,359.6 680,359.6 680,358.8 679,358.8 679,357.9 678,357.9 678,360.1 677,360.1 677,360.4 676,360.4 676,359.4 675,359.4 675,359.2 674,359.2 674,358.8 673,358.8 673,359.5 672,359.5 672,360.4 671,360.4 671,360.4 670,360.4 670,359.9 669,359.9 669,358.2 668,358.2 668,358.4 667,358.4 667,358.6 666,358.6 666,359.6 665,359.6 665,358.9 664,358.9 664,359.4 663,359.4 663,358.2 662,358.2 662,358.7 661,358.7 661,359.4 660,359.4 660,360.4 659,360.4 659,359.6 658,359.6 658,359.8 657,359.8 657,359.7 656,359.7 656,359.1 655,359.1 655,360.2 654,360.2 654,359.3 653,359.3 653,358.3 652,358.3 652,358.3 651,358.3 651,359.3 650,359.3 650,358.6 649,358.6 649,359.9 648,359.9 648,358.1 647,358.1 647,360.4 646,360.4 646,359.2 645,359.2 645,360.1 644,360.1 644,358.5 643,358.5 643,358.4 642,358.4 642,358.8 641,358.8 641,359 640,359 640,358 639,358 639,360.4 638,360.4 638,358.2 637,358.2 637,360.4 636,360.4 636,358.2 635,358.2 635,360.4 634,360.4 634,358.6 633,358.6 633,358.9 632,358.9 632,360.3 631,360.3 631,357.7 630,357.7 630,358.3 629,358.3 629,356.5 628,356.5 628,358.7 627,358.7 627,358.7 626,358.7 626,358.8 625,358.8 625,358 624,358 624,358.6 623,358.6 623,359.5 622,359.5 622,359.3 621,359.3 621,358.7 620,358.7 620,359.5 619,359.5 619,358.3 618,358.3 618,360.1 617,360.1 617,359.3 616,359.3 616,359.4 615,359.4 615,358.3 614,358.3 614,360.4 613,360.4 613,358.3 612,358.3 612,360.2 611,360.2 611,360.4 610,360.4 610,357.8 609,357.8 609,358.4 608,358.4 608,360.4 607,360.4 607,359.2 606,359.2 606,360.3 605,360.3 605,359.9 604,359.9 604,358.6 603,358.6 603,359.4 602,359.4 602,360.4 601,360.4 601,359.7 600,359.7 600,358.6 599,358.6 599,359.7 598,359.7 598,355.8 597,355.8 597,351.4 596,351.4 596,350 595,350 595,353.6 594,353.6 594,356.9 593,356.9 593,357.2 592,357.2 592,357.4 591,357.4 591,356.8 590,356.8 590,357 589,357 589,357 588,357 588,354.3 587,354.3 587,354.8 586,354.8 586,359.4 585,359.4 585,355.9 584,355.9 584,353.9 583,353.9 583,358.2 582,358.2 582,348 581,348 581,345.4 580,345.4 580,341.3 579,341.3 579,333.8 578,333.8 578,322.2 577,322.2 577,322.5 576,322.5 576,315.8 575,315.8 575,306.3 574,306.3 574,312.5 573,312.5 573,304.3 572,304.3 572,312 571,312 571,316.8 570,316.8 570,304.9 569,304.9 569,301.2 568,301.2 568,306.9 567,306.9 567,298.1 566,298.1 566,302.6 565,302.6 565,295.3 564,295.3 564,297.1 563,297.1 563,303.2 562,303.2 562,301.1 561,301.1 561,298.1 560,298.1 560,295.2 559,295.2 559,292.4 558,292.4 558,292.2 557,292.2 557,285.8 556,285.8 556,281.1 555,281.1 555,284.7 554,284.7 554,295 553,295 553,294.8 552,294.8 552,299.9 551,299.9 551,297 550,297 550,306.7 549,306.7 549,302.5 548,302.5 548,297.3 547,297.3 547,299.2 546,299.2 546,287.2 545,287.2 545,290.7 544,290.7 544,294.6 543,294.6 543,300.6 542,300.6 542,309.2 541,309.2 541,308.3 540,308.3 540,316.5 539,316.5 539,316 538,316 538,310.8 537,310.8 537,313 536,313 536,322.1 535,322.1 535,328.4 534,328.4 534,334.5 533,334.5 533,333.6 532,333.6 532,347.4 531,347.4 531,350.8 530,350.8 530,351.1 529,351.1 529,357 528,357 528,356.4 527,356.4 527,360.4 526,360.4 526,354.4 525,354.4 525,351.4 524,351.4 524,345.1 523,345.1 523,348.5 522,348.5 522,355.8 521,355.8 521,354.3 520,354.3 520,354.6 519,354.6 519,353.6 518,353.6 518,358.5 517,358.5 517,349 516,349 516,355.5 515,355.5 515,353.2 514,353.2 514,356 513,356 513,358.5 512,358.5 512,359.6 511,359.6 511,358.1 510,358.1 510,359.8 509,359.8 509,358.7 508,358.7 508,359.5 507,359.5 507,358.7 506,358.7 506,356.5 505,356.5 505,359.9 504,359.9 504,358.1 503,358.1 503,356.1 502,356.1 502,359.7 501,359.7 501,358.8 500,358.8 500,360.4 499,360.4 499,359.9 498,359.9 498,359.3 497,359.3 497,358.2 496,358.2 496,358.4 495,358.4 495,357.9 494,357.9 494,357.5 493,357.5 493,358.2 492,358.2 492,360.2 491,360.2 491,358.8 490,358.8 490,358.3 489,358.3 489,356.8 488,356.8 488,359.3 487,359.3 487,359.9 486,359.9 486,359.6 485,359.6 485,358.3 484,358.3 484,358.3 483,358.3 483,353.6 482,353.6 482,353.2 481,353.2 481,348.8 480,348.8 480,348.1 479,348.1 479,342.6 478,342.6 478,333.8 477,333.8 477,328.7 476,328.7 476,329.2 475,329.2 475,333 474,333 474,338.1 473,338.1 473,340.8 472,340.8 472,334.1 471,334.1 471,337.6 470,337.6 470,345.5 469,345.5 469,349 468,349 468,339.9 467,339.9 467,339.6 466,339.6 466,351.5 465,351.5 465,344 464,344 464,340.9 463,340.9 463,338.7 462,338.7 462,321.3 461,321.3 461,309.6 460,309.6 460,301.1 459,301.1 459,295.1 458,295.1 458,296 457,296 457,289 456,289 456,282.4 455,282.4 455,289 454,289 454,287.5 453,287.5 453,288.1 452,288.1 452,294.4 451,294.4 451,287 450,287 450,285.1 449,285.1 449,279.9 448,279.9 448,287.1 447,287.1 447,287.5 446,287.5 446,278 445,278 445,285.4 444,285.4 444,289.3 443,289.3 443,282.3 442,282.3 442,284.6 441,284.6 441,284.8 440,284.8 440,286.2 439,286.2 439,274.9 438,274.9 438,268.3 437,268.3 437,274.6 436,274.6 436,275 435,275 435,274.7 434,274.7 434,278.2 433,278.2 433,281.1 432,281.1 432,281.9 431,281.9 431,283 430,283 430,282 429,282 429,287.5 428,287.5 428,292.3 427,292.3 427,287.9 426,287.9 426,280.4 425,280.4 425,275.7 424,275.7 424,282.4 423,282.4 423,280.2 422,280.2 422,289.1 421,289.1 421,287.7 420,287.7 420,289.8 419,289.8 419,293.3 418,293.3 418,297.1 417,297.1 417,296.5 416,296.5 416,296.6 415,296.6 415,296 414,296 414,316.9 413,316.9 413,327.7 412,327.7 412,340.4 411,340.4 411,342.2 410,342.2 410,347.6 409,347.6 409,354.9 408,354.9 408,352.6 407,352.6 407,348.2 406,348.2 406,346.5 405,346.5 405,337.1 404,337.1 404,341.6 403,341.6 403,331.1 402,331.1 402,326.7 401,326.7 401,341.4 400,341.4 400,343.7 399,343.7 399,334.3 398,334.3 398,331.3 397,331.3 397,324.8 396,324.8 396,332 395,332 395,344.5 394,344.5 394,352.6 393,352.6 393,357.6 392,357.6 392,359.3 391,359.3 391,357.4 390,357.4 390,357.9 389,357.9 389,358.5 388,358.5 388,359.3 387,359.3 387,360.2 386,360.2 386,356.2 385,356.2 385,357.9 384,357.9 384,358.8 383,358.8 383,359.2 382,359.2 382,359 381,359 381,358.4 380,358.4 380,358.7 379,358.7 379,359.1 378,359.1 378,359.3 377,359.3 377,358.6 376,358.6 376,359.1 375,359.1 375,358.2 374,358.2 374,358 373,358 373,359 372,359 372,358.8 371,358.8 371,357.2 370,357.2 370,360.4 369,360.4 369,358.4 368,358.4 368,359.3 367,359.3 367,359.5 366,359.5 366,358.4 365,358.4 365,358.7 364,358.7 364,359.4 363,359.4 363,360.1 362,360.1 362,358.4 361,358.4 361,358.2 360,358.2 360,358.5 359,358.5 359,358.4 358,358.4 358,358.7 357,358.7 357,359.3 356,359.3 356,357.9 355,357.9 355,358.6 354,358.6 354,359 353,359 353,356.5 352,356.5 352,359.3 351,359.3 351,358.2 350,358.2 350,359.7 349,359.7 349,359.3 348,359.3 348,360.1 347,360.1 347,359.4 346,359.4 346,357.1 345,357.1 345,360.4 344,360.4 344,358.6 343,358.6 343,357.7 342,357.7 342,359.4 341,359.4 341,359.5 340,359.5 340,358.6 339,358.6 339,358.4 338,358.4 338,359.5 337,359.5 337,357.6 336,357.6 336,359.5 335,359.5 335,359.2 334,359.2 334,358.8 333,358.8 333,358.3 332,358.3 332,359.2 331,359.2 331,359.3 330,359.3 330,359 329,359 329,358.7 328,358.7 328,359.6 327,359.6 327,359.7 326,359.7 326,357.8 325,357.8 325,360.4 324,360.4 324,359.4 323,359.4 323,359.7 322,359.7 322,359.9 321,359.9 321,358.8 320,358.8 320,360 319,360 319,358.3 318,358.3 318,359.5 317,359.5 317,358.9 316,358.9 316,355.6 315,355.6 315,360.1 314,360.1 314,360.4 313,360.4 313,357.8 312,357.8" fill="#f8f010"/>
<rect x="312.5" y="456.2" width="434.5" height="52.400000000000034" fill="#0a40c4"/>
<rect x="312.5" y="456.2" width="434.5" height="52.400000000000034" fill="url(#nz)" opacity="0.6"/>
<rect x="392" y="456.2" width="89.50" height="52.400000000000034" fill="#1368e2" opacity="0.85"/>
<rect x="394.5" y="456.2" width="1.20" height="52.400000000000034" fill="#1e8ee8"/>
<rect x="396.8" y="456.2" width="1.30" height="52.400000000000034" fill="#18c85a"/>
<rect x="399.5" y="456.2" width="1.00" height="52.400000000000034" fill="#1e9ae6"/>
<rect x="402.6" y="456.2" width="1.20" height="52.400000000000034" fill="#22b0c8"/>
<rect x="405.5" y="456.2" width="1.00" height="52.400000000000034" fill="#1e90e8"/>
<rect x="408.5" y="456.2" width="1.00" height="52.400000000000034" fill="#1a84e6"/>
<rect x="411" y="456.2" width="1.00" height="52.400000000000034" fill="#22a0dc"/>
<rect x="412.8" y="456.2" width="2.80" height="52.400000000000034" fill="#14cc28"/>
<rect x="415.6" y="456.2" width="43.80" height="52.400000000000034" fill="#f4240a"/>
<rect x="422" y="456.2" width="1.00" height="52.400000000000034" fill="#ff5a10" opacity="0.9"/>
<rect x="426" y="456.2" width="1.00" height="52.400000000000034" fill="#ff5a10" opacity="0.9"/>
<rect x="427" y="456.2" width="1.00" height="52.400000000000034" fill="#b0a010" opacity="0.7"/>
<rect x="428" y="456.2" width="1.00" height="52.400000000000034" fill="#ff5a10" opacity="0.9"/>
<rect x="431" y="456.2" width="1.00" height="52.400000000000034" fill="#ff5a10" opacity="0.9"/>
<rect x="436" y="456.2" width="1.00" height="52.400000000000034" fill="#ff5a10" opacity="0.9"/>
<rect x="437" y="456.2" width="1.00" height="52.400000000000034" fill="#ff5a10" opacity="0.9"/>
<rect x="439" y="456.2" width="1.00" height="52.400000000000034" fill="#ff5a10" opacity="0.9"/>
<rect x="440" y="456.2" width="1.00" height="52.400000000000034" fill="#ff5a10" opacity="0.9"/>
<rect x="441" y="456.2" width="1.00" height="52.400000000000034" fill="#d82c0a" opacity="0.9"/>
<rect x="442" y="456.2" width="1.00" height="52.400000000000034" fill="#ff5a10" opacity="0.9"/>
<rect x="451" y="456.2" width="1.00" height="52.400000000000034" fill="#d82c0a" opacity="0.9"/>
<rect x="456" y="456.2" width="1.00" height="52.400000000000034" fill="#b0a010" opacity="0.7"/>
<rect x="457" y="456.2" width="1.00" height="52.400000000000034" fill="#d82c0a" opacity="0.9"/>
<rect x="458" y="456.2" width="1.00" height="52.400000000000034" fill="#d82c0a" opacity="0.9"/>
<rect x="424.6" y="456.2" width="1.40" height="52.400000000000034" fill="#ff9a14"/>
<rect x="429.8" y="456.2" width="1.00" height="52.400000000000034" fill="#ffb020"/>
<rect x="436.6" y="456.2" width="1.40" height="52.400000000000034" fill="#ffe428"/>
<rect x="442" y="456.2" width="1.00" height="52.400000000000034" fill="#ff8c14"/>
<rect x="447.6" y="456.2" width="1.20" height="52.400000000000034" fill="#ffa418"/>
<rect x="453" y="456.2" width="1.00" height="52.400000000000034" fill="#ff7a10"/>
<rect x="459.4" y="456.2" width="3.00" height="52.400000000000034" fill="#14cc28"/>
<rect x="463.5" y="456.2" width="1.00" height="52.400000000000034" fill="#1e90e8"/>
<rect x="466" y="456.2" width="1.20" height="52.400000000000034" fill="#22a4dc"/>
<rect x="469" y="456.2" width="1.00" height="52.400000000000034" fill="#1e90e8"/>
<rect x="472" y="456.2" width="1.20" height="52.400000000000034" fill="#22b0c8"/>
<rect x="475" y="456.2" width="1.00" height="52.400000000000034" fill="#1e94e8"/>
<rect x="477.6" y="456.2" width="1.30" height="52.400000000000034" fill="#18c85a"/>
<rect x="480" y="456.2" width="1.00" height="52.400000000000034" fill="#1e8ee8"/>
<path d="M393 457.8H412.8M462.4 457.8H481M393 460.5H412.8M462.4 460.5H481M393 463.2H412.8M462.4 463.2H481M393 466H412.8M462.4 466H481M393 468.7H412.8M462.4 468.7H481M393 471.4H412.8M462.4 471.4H481M393 474.1H412.8M462.4 474.1H481M393 476.8H412.8M462.4 476.8H481M393 479.6H412.8M462.4 479.6H481M393 482.3H412.8M462.4 482.3H481M393 485H412.8M462.4 485H481M393 487.7H412.8M462.4 487.7H481M393 490.4H412.8M462.4 490.4H481M393 493.2H412.8M462.4 493.2H481M393 495.9H412.8M462.4 495.9H481M393 498.6H412.8M462.4 498.6H481M393 501.3H412.8M462.4 501.3H481M393 504H412.8M462.4 504H481M393 506.8H412.8M462.4 506.8H481" stroke="#0a48c0" stroke-width="0.9" opacity="0.55" fill="none"/>
<path d="M413 457.8H462M413 460.5H462M413 463.2H462M413 466H462M413 468.7H462M413 471.4H462M413 474.1H462M413 476.8H462M413 479.6H462M413 482.3H462M413 485H462M413 487.7H462M413 490.4H462M413 493.2H462M413 495.9H462M413 498.6H462M413 501.3H462M413 504H462M413 506.8H462" stroke="#58a818" stroke-width="0.8" opacity="0.42" fill="none"/>
<rect x="516" y="456.2" width="1.20" height="52.400000000000034" fill="#1c7ee6"/>
<rect x="518.2" y="456.2" width="1.00" height="52.400000000000034" fill="#2a9cf0"/>
<rect x="520.6" y="456.2" width="1.00" height="52.400000000000034" fill="#1c7ee6"/>
<rect x="523" y="456.2" width="1.20" height="52.400000000000034" fill="#2a9cf0"/>
<rect x="530.5" y="456.2" width="2.10" height="52.400000000000034" fill="#1a9ad0"/>
<rect x="532.6" y="456.2" width="48.80" height="52.400000000000034" fill="#28d218"/>
<rect x="533" y="456.2" width="4" height="16" fill="#168a50" opacity="0.8"/>
<rect x="533" y="456.2" width="1.00" height="52.400000000000034" fill="#58e010" opacity="0.9"/>
<rect x="537" y="456.2" width="1.00" height="52.400000000000034" fill="#18b840" opacity="0.9"/>
<rect x="540" y="456.2" width="1.00" height="52.400000000000034" fill="#58e010" opacity="0.9"/>
<rect x="541" y="456.2" width="1.00" height="52.400000000000034" fill="#58e010" opacity="0.9"/>
<rect x="545" y="456.2" width="1.00" height="52.400000000000034" fill="#18b840" opacity="0.9"/>
<rect x="546" y="456.2" width="1.00" height="52.400000000000034" fill="#58e010" opacity="0.9"/>
<rect x="549" y="456.2" width="1.00" height="52.400000000000034" fill="#18b840" opacity="0.9"/>
<rect x="550" y="456.2" width="1.00" height="52.400000000000034" fill="#58e010" opacity="0.9"/>
<rect x="551" y="456.2" width="1.00" height="52.400000000000034" fill="#18b840" opacity="0.9"/>
<rect x="554" y="456.2" width="1.00" height="52.400000000000034" fill="#58e010" opacity="0.9"/>
<rect x="555" y="456.2" width="1.00" height="52.400000000000034" fill="#58e010" opacity="0.9"/>
<rect x="556" y="456.2" width="1.00" height="52.400000000000034" fill="#58e010" opacity="0.9"/>
<rect x="557" y="456.2" width="1.00" height="52.400000000000034" fill="#58e010" opacity="0.9"/>
<rect x="559" y="456.2" width="1.00" height="52.400000000000034" fill="#58e010" opacity="0.9"/>
<rect x="562" y="456.2" width="1.00" height="52.400000000000034" fill="#58e010" opacity="0.9"/>
<rect x="564" y="456.2" width="1.00" height="52.400000000000034" fill="#58e010" opacity="0.9"/>
<rect x="566" y="456.2" width="1.00" height="52.400000000000034" fill="#58e010" opacity="0.9"/>
<rect x="568" y="456.2" width="1.00" height="52.400000000000034" fill="#58e010" opacity="0.9"/>
<rect x="569" y="456.2" width="1.00" height="52.400000000000034" fill="#18b840" opacity="0.9"/>
<rect x="572" y="456.2" width="1.00" height="52.400000000000034" fill="#18b840" opacity="0.9"/>
<rect x="574" y="456.2" width="1.00" height="52.400000000000034" fill="#58e010" opacity="0.9"/>
<rect x="575" y="456.2" width="1.00" height="52.400000000000034" fill="#18b840" opacity="0.9"/>
<rect x="578" y="456.2" width="1.00" height="52.400000000000034" fill="#58e010" opacity="0.9"/>
<rect x="580" y="456.2" width="1.00" height="52.400000000000034" fill="#58e010" opacity="0.9"/>
<rect x="543.2" y="456.2" width="4.00" height="52.400000000000034" fill="#f43a0a"/>
<rect x="545" y="456.2" width="0.80" height="52.400000000000034" fill="#c8b020"/>
<rect x="548.4" y="456.2" width="1.40" height="52.400000000000034" fill="#e8601a"/>
<rect x="551.6" y="456.2" width="9.80" height="52.400000000000034" fill="#f4360a"/>
<rect x="553.2" y="456.2" width="0.80" height="52.400000000000034" fill="#b8c020"/>
<rect x="555.0" y="456.2" width="0.90" height="52.400000000000034" fill="#ff7a14"/>
<rect x="557.6" y="456.2" width="0.80" height="52.400000000000034" fill="#a8c820"/>
<rect x="559.4" y="456.2" width="0.90" height="52.400000000000034" fill="#ff6a10"/>
<rect x="562.8" y="456.2" width="1.60" height="52.400000000000034" fill="#f04a10"/>
<rect x="565.4" y="456.2" width="1.00" height="52.400000000000034" fill="#e07a18"/>
<rect x="568" y="456.2" width="1.00" height="52.400000000000034" fill="#d8a018"/>
<rect x="571.6" y="456.2" width="1.00" height="52.400000000000034" fill="#a8d818"/>
<rect x="575" y="456.2" width="1.00" height="52.400000000000034" fill="#88dc18"/>
<rect x="581.4" y="456.2" width="1.60" height="52.400000000000034" fill="#1a9ad0"/>
<rect x="586" y="456.2" width="1.20" height="52.400000000000034" fill="#2a9cf0"/>
<rect x="588.4" y="456.2" width="1.00" height="52.400000000000034" fill="#1c7ee6"/>
<rect x="591" y="456.2" width="1.00" height="52.400000000000034" fill="#1c80e6"/>
<rect x="594" y="456.2" width="1.00" height="52.400000000000034" fill="#1c7ee6"/>
<rect x="596" y="456.2" width="1.20" height="52.400000000000034" fill="#2a9cf0"/>
<text x="535.00" y="114.30" font-size="12.3" text-anchor="middle" fill="#cdcdcd" font-weight="bold" letter-spacing="-0.12" xml:space="preserve" stroke="#000" stroke-width="2.2" stroke-opacity="0.75" paint-order="stroke" stroke-linejoin="round">rfeye100111  - RTBW:12.5MHz</text>
<clipPath id="lcL"><rect x="274.3" y="110" width="520.7" height="30"/></clipPath>
<text x="304.00" y="129.40" font-size="12.0" text-anchor="start" fill="#c4c4c4" font-weight="normal" letter-spacing="-0.02" clip-path="url(#lcL)" stroke="#000" stroke-width="2.2" stroke-opacity="0.75" paint-order="stroke" stroke-linejoin="round">Sweep 1.89GHz-1.9GHz, RBW:15.26kHz, peak:1023, POI:100%, 12.1/s, Seg:1, Acc:1023, FFT</text>
<rect x="283.6" y="124" width="15.199999999999989" height="2" fill="#f8f000"/>
<rect x="273.3" y="101.3" width="2.1" height="709.1000000000001" fill="#a9a9a9"/>
<rect x="795" y="101.3" width="2.1" height="709.1000000000001" fill="#a9a9a9"/>
<rect x="273.3" y="101.3" width="523.7" height="1.7" fill="#a9a9a9"/>
<rect x="273.3" y="809.6" width="523.7" height="1.2" fill="#a9a9a9"/>
<rect x="274.3" y="809.0" width="37.69999999999999" height="1.8" fill="#a9a9a9"/>
<rect x="747" y="809.0" width="49" height="1.8" fill="#a9a9a9"/>
<rect x="264.7" y="101.70" width="9" height="1.6" fill="#a9a9a9"/>
<rect x="797" y="101.70" width="9.4" height="1.6" fill="#a9a9a9"/>
<text x="265.10" y="106.90" font-size="12.4" text-anchor="end" fill="#f4f4f4" font-weight="bold" >0</text>
<rect x="264.7" y="123.20" width="9" height="1.6" fill="#a9a9a9"/>
<rect x="797" y="123.20" width="9.4" height="1.6" fill="#a9a9a9"/>
<text x="265.10" y="128.40" font-size="12.4" text-anchor="end" fill="#f4f4f4" font-weight="bold" >-10</text>
<rect x="264.7" y="144.70" width="9" height="1.6" fill="#a9a9a9"/>
<rect x="797" y="144.70" width="9.4" height="1.6" fill="#a9a9a9"/>
<text x="265.10" y="149.90" font-size="12.4" text-anchor="end" fill="#f4f4f4" font-weight="bold" >-20</text>
<rect x="264.7" y="166.20" width="9" height="1.6" fill="#a9a9a9"/>
<rect x="797" y="166.20" width="9.4" height="1.6" fill="#a9a9a9"/>
<text x="265.10" y="171.40" font-size="12.4" text-anchor="end" fill="#f4f4f4" font-weight="bold" >-30</text>
<rect x="264.7" y="187.70" width="9" height="1.6" fill="#a9a9a9"/>
<rect x="797" y="187.70" width="9.4" height="1.6" fill="#a9a9a9"/>
<text x="265.10" y="192.90" font-size="12.4" text-anchor="end" fill="#f4f4f4" font-weight="bold" >-40</text>
<rect x="264.7" y="209.20" width="9" height="1.6" fill="#a9a9a9"/>
<rect x="797" y="209.20" width="9.4" height="1.6" fill="#a9a9a9"/>
<text x="265.10" y="214.40" font-size="12.4" text-anchor="end" fill="#f4f4f4" font-weight="bold" >-50</text>
<rect x="264.7" y="230.70" width="9" height="1.6" fill="#a9a9a9"/>
<rect x="797" y="230.70" width="9.4" height="1.6" fill="#a9a9a9"/>
<text x="265.10" y="235.90" font-size="12.4" text-anchor="end" fill="#f4f4f4" font-weight="bold" >-60</text>
<rect x="264.7" y="252.20" width="9" height="1.6" fill="#a9a9a9"/>
<rect x="797" y="252.20" width="9.4" height="1.6" fill="#a9a9a9"/>
<text x="265.10" y="257.40" font-size="12.4" text-anchor="end" fill="#f4f4f4" font-weight="bold" >-70</text>
<rect x="264.7" y="273.70" width="9" height="1.6" fill="#a9a9a9"/>
<rect x="797" y="273.70" width="9.4" height="1.6" fill="#a9a9a9"/>
<text x="265.10" y="278.90" font-size="12.4" text-anchor="end" fill="#f4f4f4" font-weight="bold" >-80</text>
<rect x="264.7" y="295.20" width="9" height="1.6" fill="#a9a9a9"/>
<rect x="797" y="295.20" width="9.4" height="1.6" fill="#a9a9a9"/>
<text x="265.10" y="300.40" font-size="12.4" text-anchor="end" fill="#f4f4f4" font-weight="bold" >-90</text>
<rect x="264.7" y="316.70" width="9" height="1.6" fill="#a9a9a9"/>
<rect x="797" y="316.70" width="9.4" height="1.6" fill="#a9a9a9"/>
<text x="265.10" y="321.90" font-size="12.4" text-anchor="end" fill="#f4f4f4" font-weight="bold" >-100</text>
<rect x="264.7" y="338.20" width="9" height="1.6" fill="#a9a9a9"/>
<rect x="797" y="338.20" width="9.4" height="1.6" fill="#a9a9a9"/>
<text x="265.10" y="343.40" font-size="12.4" text-anchor="end" fill="#f4f4f4" font-weight="bold" >-110</text>
<rect x="264.7" y="359.70" width="9" height="1.6" fill="#a9a9a9"/>
<rect x="797" y="359.70" width="9.4" height="1.6" fill="#a9a9a9"/>
<text x="265.10" y="364.90" font-size="12.4" text-anchor="end" fill="#f4f4f4" font-weight="bold" >-120</text>
<rect x="264.7" y="381.20" width="9" height="1.6" fill="#a9a9a9"/>
<rect x="797" y="381.20" width="9.4" height="1.6" fill="#a9a9a9"/>
<text x="265.10" y="386.40" font-size="12.4" text-anchor="end" fill="#f4f4f4" font-weight="bold" >-130</text>
<rect x="264.7" y="402.70" width="9" height="1.6" fill="#a9a9a9"/>
<rect x="797" y="402.70" width="9.4" height="1.6" fill="#a9a9a9"/>
<text x="265.10" y="407.90" font-size="12.4" text-anchor="end" fill="#f4f4f4" font-weight="bold" >-140</text>
<rect x="264.7" y="424.20" width="9" height="1.6" fill="#a9a9a9"/>
<rect x="797" y="424.20" width="9.4" height="1.6" fill="#a9a9a9"/>
<text x="265.10" y="429.40" font-size="12.4" text-anchor="end" fill="#f4f4f4" font-weight="bold" >-150</text>
<rect x="264.7" y="445.70" width="9" height="1.6" fill="#a9a9a9"/>
<rect x="797" y="445.70" width="9.4" height="1.6" fill="#a9a9a9"/>
<text x="265.10" y="450.90" font-size="12.4" text-anchor="end" fill="#f4f4f4" font-weight="bold" >-160</text>
<clipPath id="wcL"><rect x="234.3" y="456.1" width="40" height="400"/></clipPath>
<rect x="264.7" y="455.10" width="9" height="1.6" fill="#a9a9a9"/>
<rect x="797" y="455.10" width="9.4" height="1.6" fill="#a9a9a9"/>
<text x="265.10" y="460.30" font-size="12.4" text-anchor="end" fill="#f4f4f4" font-weight="bold" clip-path="url(#wcL)">0</text>
<rect x="264.7" y="481.35" width="9" height="1.6" fill="#a9a9a9"/>
<rect x="797" y="481.35" width="9.4" height="1.6" fill="#a9a9a9"/>
<text x="265.10" y="486.55" font-size="12.4" text-anchor="end" fill="#f4f4f4" font-weight="bold" clip-path="url(#wcL)">2</text>
<rect x="264.7" y="507.60" width="9" height="1.6" fill="#a9a9a9"/>
<rect x="797" y="507.60" width="9.4" height="1.6" fill="#a9a9a9"/>
<text x="265.10" y="512.80" font-size="12.4" text-anchor="end" fill="#f4f4f4" font-weight="bold" clip-path="url(#wcL)">4</text>
<rect x="264.7" y="533.85" width="9" height="1.6" fill="#a9a9a9"/>
<rect x="797" y="533.85" width="9.4" height="1.6" fill="#a9a9a9"/>
<text x="265.10" y="539.05" font-size="12.4" text-anchor="end" fill="#f4f4f4" font-weight="bold" clip-path="url(#wcL)">6</text>
<rect x="264.7" y="560.10" width="9" height="1.6" fill="#a9a9a9"/>
<rect x="797" y="560.10" width="9.4" height="1.6" fill="#a9a9a9"/>
<text x="265.10" y="565.30" font-size="12.4" text-anchor="end" fill="#f4f4f4" font-weight="bold" clip-path="url(#wcL)">8</text>
<rect x="264.7" y="586.35" width="9" height="1.6" fill="#a9a9a9"/>
<rect x="797" y="586.35" width="9.4" height="1.6" fill="#a9a9a9"/>
<text x="265.10" y="591.55" font-size="12.4" text-anchor="end" fill="#f4f4f4" font-weight="bold" clip-path="url(#wcL)">10</text>
<rect x="264.7" y="612.60" width="9" height="1.6" fill="#a9a9a9"/>
<rect x="797" y="612.60" width="9.4" height="1.6" fill="#a9a9a9"/>
<text x="265.10" y="617.80" font-size="12.4" text-anchor="end" fill="#f4f4f4" font-weight="bold" clip-path="url(#wcL)">12</text>
<rect x="264.7" y="638.85" width="9" height="1.6" fill="#a9a9a9"/>
<rect x="797" y="638.85" width="9.4" height="1.6" fill="#a9a9a9"/>
<text x="265.10" y="644.05" font-size="12.4" text-anchor="end" fill="#f4f4f4" font-weight="bold" clip-path="url(#wcL)">14</text>
<rect x="264.7" y="665.10" width="9" height="1.6" fill="#a9a9a9"/>
<rect x="797" y="665.10" width="9.4" height="1.6" fill="#a9a9a9"/>
<text x="265.10" y="670.30" font-size="12.4" text-anchor="end" fill="#f4f4f4" font-weight="bold" clip-path="url(#wcL)">16</text>
<rect x="264.7" y="691.35" width="9" height="1.6" fill="#a9a9a9"/>
<rect x="797" y="691.35" width="9.4" height="1.6" fill="#a9a9a9"/>
<text x="265.10" y="696.55" font-size="12.4" text-anchor="end" fill="#f4f4f4" font-weight="bold" clip-path="url(#wcL)">18</text>
<rect x="264.7" y="717.60" width="9" height="1.6" fill="#a9a9a9"/>
<rect x="797" y="717.60" width="9.4" height="1.6" fill="#a9a9a9"/>
<text x="265.10" y="722.80" font-size="12.4" text-anchor="end" fill="#f4f4f4" font-weight="bold" clip-path="url(#wcL)">20</text>
<rect x="264.7" y="743.85" width="9" height="1.6" fill="#a9a9a9"/>
<rect x="797" y="743.85" width="9.4" height="1.6" fill="#a9a9a9"/>
<text x="265.10" y="749.05" font-size="12.4" text-anchor="end" fill="#f4f4f4" font-weight="bold" clip-path="url(#wcL)">22</text>
<rect x="264.7" y="770.10" width="9" height="1.6" fill="#a9a9a9"/>
<rect x="797" y="770.10" width="9.4" height="1.6" fill="#a9a9a9"/>
<text x="265.10" y="775.30" font-size="12.4" text-anchor="end" fill="#f4f4f4" font-weight="bold" clip-path="url(#wcL)">24</text>
<rect x="264.7" y="796.35" width="9" height="1.6" fill="#a9a9a9"/>
<rect x="797" y="796.35" width="9.4" height="1.6" fill="#a9a9a9"/>
<text x="265.10" y="801.55" font-size="12.4" text-anchor="end" fill="#f4f4f4" font-weight="bold" clip-path="url(#wcL)">26</text>
<rect x="273.50" y="92.7" width="1.6" height="9.6" fill="#a9a9a9"/>
<rect x="273.50" y="810.2" width="1.6" height="6.2" fill="#a9a9a9"/>
<text x="276.70" y="90.20" font-size="12.4" text-anchor="middle" fill="#f4f4f4" font-weight="bold" letter-spacing="-0.3">1.884</text>
<text x="276.70" y="830.20" font-size="12.4" text-anchor="middle" fill="#f4f4f4" font-weight="bold" letter-spacing="-0.3">1.884</text>
<rect x="342.85" y="92.7" width="1.6" height="9.6" fill="#a9a9a9"/>
<rect x="342.85" y="810.2" width="1.6" height="6.2" fill="#a9a9a9"/>
<text x="346.05" y="90.20" font-size="12.4" text-anchor="middle" fill="#f4f4f4" font-weight="bold" letter-spacing="-0.3">1.886</text>
<text x="346.05" y="830.20" font-size="12.4" text-anchor="middle" fill="#f4f4f4" font-weight="bold" letter-spacing="-0.3">1.886</text>
<rect x="412.20" y="92.7" width="1.6" height="9.6" fill="#a9a9a9"/>
<rect x="412.20" y="810.2" width="1.6" height="6.2" fill="#a9a9a9"/>
<text x="415.40" y="90.20" font-size="12.4" text-anchor="middle" fill="#f4f4f4" font-weight="bold" letter-spacing="-0.3">1.888</text>
<text x="415.40" y="830.20" font-size="12.4" text-anchor="middle" fill="#f4f4f4" font-weight="bold" letter-spacing="-0.3">1.888</text>
<rect x="481.55" y="92.7" width="1.6" height="9.6" fill="#a9a9a9"/>
<rect x="481.55" y="810.2" width="1.6" height="6.2" fill="#a9a9a9"/>
<text x="484.75" y="90.20" font-size="12.4" text-anchor="middle" fill="#f4f4f4" font-weight="bold" letter-spacing="-0.3">1.89</text>
<text x="484.75" y="830.20" font-size="12.4" text-anchor="middle" fill="#f4f4f4" font-weight="bold" letter-spacing="-0.3">1.89</text>
<rect x="550.90" y="92.7" width="1.6" height="9.6" fill="#a9a9a9"/>
<rect x="550.90" y="810.2" width="1.6" height="6.2" fill="#a9a9a9"/>
<text x="554.10" y="90.20" font-size="12.4" text-anchor="middle" fill="#f4f4f4" font-weight="bold" letter-spacing="-0.3">1.892</text>
<text x="554.10" y="830.20" font-size="12.4" text-anchor="middle" fill="#f4f4f4" font-weight="bold" letter-spacing="-0.3">1.892</text>
<rect x="620.25" y="92.7" width="1.6" height="9.6" fill="#a9a9a9"/>
<rect x="620.25" y="810.2" width="1.6" height="6.2" fill="#a9a9a9"/>
<text x="623.45" y="90.20" font-size="12.4" text-anchor="middle" fill="#f4f4f4" font-weight="bold" letter-spacing="-0.3">1.894</text>
<text x="623.45" y="830.20" font-size="12.4" text-anchor="middle" fill="#f4f4f4" font-weight="bold" letter-spacing="-0.3">1.894</text>
<rect x="689.60" y="92.7" width="1.6" height="9.6" fill="#a9a9a9"/>
<rect x="689.60" y="810.2" width="1.6" height="6.2" fill="#a9a9a9"/>
<text x="692.80" y="90.20" font-size="12.4" text-anchor="middle" fill="#f4f4f4" font-weight="bold" letter-spacing="-0.3">1.896</text>
<text x="692.80" y="830.20" font-size="12.4" text-anchor="middle" fill="#f4f4f4" font-weight="bold" letter-spacing="-0.3">1.896</text>
<rect x="758.95" y="92.7" width="1.6" height="9.6" fill="#a9a9a9"/>
<rect x="758.95" y="810.2" width="1.6" height="6.2" fill="#a9a9a9"/>
<text x="762.15" y="90.20" font-size="12.4" text-anchor="middle" fill="#f4f4f4" font-weight="bold" letter-spacing="-0.3">1.898</text>
<text x="762.15" y="830.20" font-size="12.4" text-anchor="middle" fill="#f4f4f4" font-weight="bold" letter-spacing="-0.3">1.898</text>
<rect x="267.90000000000003" y="259.2" width="5.4" height="107.19999999999999" fill="url(#acbL1)"/>
<rect x="796.2" y="259.2" width="5.6" height="107.19999999999999" fill="url(#acbL2)"/>
<rect x="775.4" y="121.00" width="10.4" height="4.01" fill="#dba700"/><rect x="775.4" y="124.71" width="10.4" height="4.01" fill="#db9000"/><rect x="775.4" y="128.41" width="10.4" height="4.01" fill="#db7900"/><rect x="775.4" y="132.12" width="10.4" height="4.01" fill="#db5c00"/><rect x="775.4" y="135.82" width="10.4" height="4.01" fill="#db3f00"/><rect x="775.4" y="139.53" width="10.4" height="4.01" fill="#db2300"/><rect x="775.4" y="143.24" width="10.4" height="4.01" fill="#db0600"/><rect x="775.4" y="146.94" width="10.4" height="4.01" fill="#c71200"/><rect x="775.4" y="150.65" width="10.4" height="4.01" fill="#ad2b00"/><rect x="775.4" y="154.36" width="10.4" height="4.01" fill="#934300"/><rect x="775.4" y="158.06" width="10.4" height="4.01" fill="#795c00"/><rect x="775.4" y="161.77" width="10.4" height="4.01" fill="#5f7300"/><rect x="775.4" y="165.47" width="10.4" height="4.01" fill="#458700"/><rect x="775.4" y="169.18" width="10.4" height="4.01" fill="#2b9d00"/><rect x="775.4" y="172.89" width="10.4" height="4.01" fill="#11b200"/><rect x="775.4" y="176.59" width="10.4" height="4.01" fill="#00bb0a"/><rect x="775.4" y="180.30" width="10.4" height="4.01" fill="#00ac29"/><rect x="775.4" y="184.01" width="10.4" height="4.01" fill="#009c48"/><rect x="775.4" y="187.71" width="10.4" height="4.01" fill="#008d67"/><rect x="775.4" y="191.42" width="10.4" height="4.01" fill="#007e87"/><rect x="775.4" y="195.12" width="10.4" height="4.01" fill="#00729a"/><rect x="775.4" y="198.83" width="10.4" height="4.01" fill="#0068a8"/><rect x="775.4" y="202.54" width="10.4" height="4.01" fill="#005db6"/><rect x="775.4" y="206.24" width="10.4" height="4.01" fill="#0053c4"/><rect x="775.4" y="209.95" width="10.4" height="4.01" fill="#0049d1"/><rect x="775.4" y="213.66" width="10.4" height="4.01" fill="#003cc0"/><rect x="775.4" y="217.36" width="10.4" height="4.01" fill="#002fac"/><rect x="775.4" y="221.07" width="10.4" height="4.01" fill="#002198"/><rect x="775.4" y="224.77" width="10.4" height="4.01" fill="#001483"/><rect x="775.4" y="228.48" width="10.4" height="4.01" fill="#000d74"/><rect x="775.4" y="232.19" width="10.4" height="4.01" fill="#000867"/><rect x="775.4" y="235.89" width="10.4" height="4.01" fill="#000259"/>
<rect x="774.8" y="121" width="1" height="119" fill="#8a8a8a"/>
<text x="761.10" y="127.00" font-size="12.4" text-anchor="end" fill="#f4f4f4" font-weight="bold" letter-spacing="-0.4">Max</text>
<text x="761.10" y="245.20" font-size="12.4" text-anchor="end" fill="#f4f4f4" font-weight="bold" >0</text>
<rect x="764.8" y="239" width="11" height="1.5" fill="#a9a9a9"/>
<rect x="746" y="247.2" width="48.2" height="14.6" fill="#0b7f0b"/><text x="771.60" y="258.10" font-size="12.2" text-anchor="middle" fill="#ffffff" font-weight="bold" letter-spacing="-0.3">Auto</text>
<rect x="775.4" y="475.20" width="10.4" height="4.00" fill="#dba700"/><rect x="775.4" y="478.90" width="10.4" height="4.00" fill="#db9000"/><rect x="775.4" y="482.60" width="10.4" height="4.00" fill="#db7900"/><rect x="775.4" y="486.30" width="10.4" height="4.00" fill="#db5c00"/><rect x="775.4" y="490.00" width="10.4" height="4.00" fill="#db3f00"/><rect x="775.4" y="493.70" width="10.4" height="4.00" fill="#db2300"/><rect x="775.4" y="497.40" width="10.4" height="4.00" fill="#db0600"/><rect x="775.4" y="501.10" width="10.4" height="4.00" fill="#c71200"/><rect x="775.4" y="504.80" width="10.4" height="4.00" fill="#ad2b00"/><rect x="775.4" y="508.50" width="10.4" height="4.00" fill="#934300"/><rect x="775.4" y="512.20" width="10.4" height="4.00" fill="#795c00"/><rect x="775.4" y="515.90" width="10.4" height="4.00" fill="#5f7300"/><rect x="775.4" y="519.60" width="10.4" height="4.00" fill="#458700"/><rect x="775.4" y="523.30" width="10.4" height="4.00" fill="#2b9d00"/><rect x="775.4" y="527.00" width="10.4" height="4.00" fill="#11b200"/><rect x="775.4" y="530.70" width="10.4" height="4.00" fill="#00bb0a"/><rect x="775.4" y="534.40" width="10.4" height="4.00" fill="#00ac29"/><rect x="775.4" y="538.10" width="10.4" height="4.00" fill="#009c48"/><rect x="775.4" y="541.80" width="10.4" height="4.00" fill="#008d67"/><rect x="775.4" y="545.50" width="10.4" height="4.00" fill="#007e87"/><rect x="775.4" y="549.20" width="10.4" height="4.00" fill="#00729a"/><rect x="775.4" y="552.90" width="10.4" height="4.00" fill="#0068a8"/><rect x="775.4" y="556.60" width="10.4" height="4.00" fill="#005db6"/><rect x="775.4" y="560.30" width="10.4" height="4.00" fill="#0053c4"/><rect x="775.4" y="564.00" width="10.4" height="4.00" fill="#0049d1"/><rect x="775.4" y="567.70" width="10.4" height="4.00" fill="#003cc0"/><rect x="775.4" y="571.40" width="10.4" height="4.00" fill="#002fac"/><rect x="775.4" y="575.10" width="10.4" height="4.00" fill="#002198"/><rect x="775.4" y="578.80" width="10.4" height="4.00" fill="#001483"/><rect x="775.4" y="582.50" width="10.4" height="4.00" fill="#000d74"/><rect x="775.4" y="586.20" width="10.4" height="4.00" fill="#000867"/><rect x="775.4" y="589.90" width="10.4" height="4.00" fill="#000259"/>
<rect x="774.8" y="475.2" width="1" height="118.6" fill="#8a8a8a"/>
<text x="761.80" y="496.80" font-size="12.4" text-anchor="end" fill="#f4f4f4" font-weight="bold" letter-spacing="-0.35">-80</text>
<rect x="764.1999999999999" y="491.7" width="11.4" height="1.4" fill="#a9a9a9"/>
<text x="761.80" y="520.40" font-size="12.4" text-anchor="end" fill="#f4f4f4" font-weight="bold" letter-spacing="-0.35">-90</text>
<rect x="764.1999999999999" y="515.3" width="11.4" height="1.4" fill="#a9a9a9"/>
<text x="761.80" y="543.60" font-size="12.4" text-anchor="end" fill="#f4f4f4" font-weight="bold" letter-spacing="-0.35">-100</text>
<rect x="764.1999999999999" y="538.5" width="11.4" height="1.4" fill="#a9a9a9"/>
<text x="761.80" y="566.60" font-size="12.4" text-anchor="end" fill="#f4f4f4" font-weight="bold" letter-spacing="-0.35">-110</text>
<rect x="764.1999999999999" y="561.5" width="11.4" height="1.4" fill="#a9a9a9"/>
<text x="761.80" y="590.40" font-size="12.4" text-anchor="end" fill="#f4f4f4" font-weight="bold" letter-spacing="-0.35">-120</text>
<rect x="764.1999999999999" y="585.3" width="11.4" height="1.4" fill="#a9a9a9"/>
<rect x="746" y="600.8" width="48.2" height="14.6" fill="#0b7f0b"/><text x="771.60" y="611.70" font-size="12.2" text-anchor="middle" fill="#ffffff" font-weight="bold" letter-spacing="-0.3">Auto</text>
<text transform="translate(735.4 534) rotate(-90)" font-size="12.4" text-anchor="middle" fill="#f4f4f4" font-weight="normal">dBm</text>
<text x="534.60" y="80.20" font-size="12.4" text-anchor="middle" fill="#f4f4f4" font-weight="normal" letter-spacing="-0.3">GHz</text>
<text x="534.60" y="839.80" font-size="12.4" text-anchor="middle" fill="#f4f4f4" font-weight="normal" letter-spacing="-0.3">GHz</text>
<text transform="translate(241.4 277.6) rotate(-90)" font-size="12.4" text-anchor="middle" fill="#f4f4f4" font-weight="normal">dBm</text>
<text transform="translate(249.6 632) rotate(-90)" font-size="12.4" text-anchor="middle" fill="#f4f4f4" font-weight="bold">sec</text>
<path d="M866.9 124.5H1384.3" stroke="#a8a8a8" stroke-width="1" stroke-dasharray="1 3" fill="none"/>
<path d="M866.9 146.5H1384.3" stroke="#a8a8a8" stroke-width="1" stroke-dasharray="1 3" fill="none"/>
<path d="M866.9 167.5H1384.3" stroke="#a8a8a8" stroke-width="1" stroke-dasharray="1 3" fill="none"/>
<path d="M866.9 188.5H1384.3" stroke="#a8a8a8" stroke-width="1" stroke-dasharray="1 3" fill="none"/>
<path d="M866.9 210.5H1384.3" stroke="#a8a8a8" stroke-width="1" stroke-dasharray="1 3" fill="none"/>
<path d="M866.9 232.5H1384.3" stroke="#a8a8a8" stroke-width="1" stroke-dasharray="1 3" fill="none"/>
<path d="M866.9 253.5H1384.3" stroke="#a8a8a8" stroke-width="1" stroke-dasharray="1 3" fill="none"/>
<path d="M866.9 274.5H1384.3" stroke="#a8a8a8" stroke-width="1" stroke-dasharray="1 3" fill="none"/>
<path d="M866.9 296.5H1384.3" stroke="#a8a8a8" stroke-width="1" stroke-dasharray="1 3" fill="none"/>
<path d="M866.9 318.5H1384.3" stroke="#a8a8a8" stroke-width="1" stroke-dasharray="1 3" fill="none"/>
<path d="M866.9 339.5H1384.3" stroke="#a8a8a8" stroke-width="1" stroke-dasharray="1 3" fill="none"/>
<path d="M866.9 360.5H1384.3" stroke="#a8a8a8" stroke-width="1" stroke-dasharray="1 3" fill="none"/>
<path d="M866.9 382.5H1384.3" stroke="#a8a8a8" stroke-width="1" stroke-dasharray="1 3" fill="none"/>
<path d="M866.9 404.5H1384.3" stroke="#a8a8a8" stroke-width="1" stroke-dasharray="1 3" fill="none"/>
<path d="M866.9 425.5H1384.3" stroke="#a8a8a8" stroke-width="1" stroke-dasharray="1 3" fill="none"/>
<path d="M866.9 446.5H1384.3" stroke="#a8a8a8" stroke-width="1" stroke-dasharray="1 3" fill="none"/>
<path d="M905.5 104.8V455.3" stroke="#a8a8a8" stroke-width="1" stroke-dasharray="1 3" fill="none"/>
<path d="M983.5 104.8V455.3" stroke="#a8a8a8" stroke-width="1" stroke-dasharray="1 3" fill="none"/>
<path d="M1061.5 104.8V455.3" stroke="#a8a8a8" stroke-width="1" stroke-dasharray="1 3" fill="none"/>
<path d="M1139.5 104.8V455.3" stroke="#a8a8a8" stroke-width="1" stroke-dasharray="1 3" fill="none"/>
<path d="M1217.5 104.8V455.3" stroke="#a8a8a8" stroke-width="1" stroke-dasharray="1 3" fill="none"/>
<path d="M1295.5 104.8V455.3" stroke="#a8a8a8" stroke-width="1" stroke-dasharray="1 3" fill="none"/>
<path d="M1373.5 104.8V455.3" stroke="#a8a8a8" stroke-width="1" stroke-dasharray="1 3" fill="none"/>
<path d="M879.5 0v142M880.5 0v142M882.5 0v142M883.5 0v142M886.5 0v142" stroke="url(#gR)" stroke-width="1.04" fill="none" transform="translate(0 301)"/>
<path d="M881.5 0v142M887.5 0v142M888.5 0v142M889.5 0v142M890.5 0v142M892.5 0v142M893.5 0v142M898.5 0v142M900.5 0v142M901.5 0v142M902.5 0v142M903.5 0v142M904.5 0v142M905.5 0v142" stroke="url(#gR)" stroke-width="1.04" fill="none" transform="translate(0 301.5)"/>
<path d="M884.5 0v142M885.5 0v142M891.5 0v142M894.5 0v142M895.5 0v142M896.5 0v142M907.5 0v142M909.5 0v142M911.5 0v142M916.5 0v142M919.5 0v142M920.5 0v142" stroke="url(#gR)" stroke-width="1.04" fill="none" transform="translate(0 302)"/>
<path d="M897.5 0v142M899.5 0v142M906.5 0v142M908.5 0v142M910.5 0v142M914.5 0v142M915.5 0v142M917.5 0v142M922.5 0v142M923.5 0v142M924.5 0v142M928.5 0v142M938.5 0v142M939.5 0v142M940.5 0v142" stroke="url(#gR)" stroke-width="1.04" fill="none" transform="translate(0 302.5)"/>
<path d="M912.5 0v142M913.5 0v142M918.5 0v142M921.5 0v142M926.5 0v142M927.5 0v142M931.5 0v142M932.5 0v142M935.5 0v142M936.5 0v142M937.5 0v142M943.5 0v142M949.5 0v142M961.5 0v142" stroke="url(#gR)" stroke-width="1.04" fill="none" transform="translate(0 303)"/>
<path d="M925.5 0v142M929.5 0v142M930.5 0v142M933.5 0v142M934.5 0v142M942.5 0v142M944.5 0v142M945.5 0v142M946.5 0v142M947.5 0v142M948.5 0v142M950.5 0v142M951.5 0v142M953.5 0v142M955.5 0v142M956.5 0v142M957.5 0v142M958.5 0v142M960.5 0v142M964.5 0v142M970.5 0v142M971.5 0v142M974.5 0v142M976.5 0v142M986.5 0v142M987.5 0v142M988.5 0v142M991.5 0v142M999.5 0v142M1000.5 0v142M1001.5 0v142M1004.5 0v142" stroke="url(#gR)" stroke-width="1.04" fill="none" transform="translate(0 303.5)"/>
<path d="M941.5 0v142M952.5 0v142M954.5 0v142M959.5 0v142M962.5 0v142M963.5 0v142M965.5 0v142M972.5 0v142M973.5 0v142M977.5 0v142M978.5 0v142M979.5 0v142M980.5 0v142M981.5 0v142M982.5 0v142M983.5 0v142M984.5 0v142M985.5 0v142M990.5 0v142M992.5 0v142M993.5 0v142M996.5 0v142M1002.5 0v142M1003.5 0v142M1006.5 0v142M1011.5 0v142M1013.5 0v142M1014.5 0v142M1020.5 0v142M1040.5 0v142M1049.5 0v142M1053.5 0v142M1055.5 0v142M1064.5 0v142M1065.5 0v142M1068.5 0v142M1069.5 0v142M1070.5 0v142M1073.5 0v142M1096.5 0v142M1099.5 0v142M1102.5 0v142M1108.5 0v142M1110.5 0v142M1112.5 0v142M1121.5 0v142M1122.5 0v142M1123.5 0v142" stroke="url(#gR)" stroke-width="1.04" fill="none" transform="translate(0 304)"/>
<path d="M966.5 0v142M967.5 0v142M968.5 0v142M969.5 0v142M975.5 0v142M989.5 0v142M994.5 0v142M995.5 0v142M997.5 0v142M998.5 0v142M1005.5 0v142M1007.5 0v142M1008.5 0v142M1010.5 0v142M1012.5 0v142M1015.5 0v142M1016.5 0v142M1019.5 0v142M1021.5 0v142M1022.5 0v142M1023.5 0v142M1024.5 0v142M1026.5 0v142M1027.5 0v142M1028.5 0v142M1031.5 0v142M1032.5 0v142M1033.5 0v142M1034.5 0v142M1035.5 0v142M1036.5 0v142M1041.5 0v142M1042.5 0v142M1043.5 0v142M1045.5 0v142M1046.5 0v142M1047.5 0v142M1050.5 0v142M1052.5 0v142M1054.5 0v142M1058.5 0v142M1060.5 0v142M1061.5 0v142M1062.5 0v142M1063.5 0v142M1066.5 0v142M1071.5 0v142M1074.5 0v142M1091.5 0v142M1092.5 0v142M1093.5 0v142M1094.5 0v142M1098.5 0v142M1104.5 0v142M1105.5 0v142M1106.5 0v142M1107.5 0v142M1109.5 0v142M1111.5 0v142M1113.5 0v142M1114.5 0v142M1117.5 0v142M1125.5 0v142M1130.5 0v142M1131.5 0v142M1140.5 0v142M1142.5 0v142M1144.5 0v142" stroke="url(#gR)" stroke-width="1.04" fill="none" transform="translate(0 304.5)"/>
<path d="M1009.5 0v142M1017.5 0v142M1018.5 0v142M1025.5 0v142M1029.5 0v142M1030.5 0v142M1037.5 0v142M1038.5 0v142M1039.5 0v142M1044.5 0v142M1048.5 0v142M1051.5 0v142M1056.5 0v142M1057.5 0v142M1059.5 0v142M1067.5 0v142M1072.5 0v142M1075.5 0v142M1076.5 0v142M1095.5 0v142M1097.5 0v142M1100.5 0v142M1101.5 0v142M1103.5 0v142M1115.5 0v142M1116.5 0v142M1118.5 0v142M1119.5 0v142M1120.5 0v142M1124.5 0v142M1126.5 0v142M1127.5 0v142M1132.5 0v142M1133.5 0v142M1134.5 0v142M1135.5 0v142M1137.5 0v142M1141.5 0v142M1143.5 0v142M1145.5 0v142M1147.5 0v142M1148.5 0v142M1149.5 0v142M1150.5 0v142M1154.5 0v142M1155.5 0v142M1159.5 0v142M1163.5 0v142M1165.5 0v142M1169.5 0v142" stroke="url(#gR)" stroke-width="1.04" fill="none" transform="translate(0 305)"/>
<path d="M1128.5 0v142M1129.5 0v142M1136.5 0v142M1138.5 0v142M1139.5 0v142M1146.5 0v142M1151.5 0v142M1152.5 0v142M1157.5 0v142M1158.5 0v142M1160.5 0v142M1161.5 0v142M1162.5 0v142M1168.5 0v142M1170.5 0v142M1171.5 0v142M1173.5 0v142M1177.5 0v142M1178.5 0v142M1181.5 0v142" stroke="url(#gR)" stroke-width="1.04" fill="none" transform="translate(0 305.5)"/>
<path d="M1153.5 0v142M1156.5 0v142M1164.5 0v142M1166.5 0v142M1167.5 0v142M1172.5 0v142M1174.5 0v142M1175.5 0v142M1179.5 0v142M1180.5 0v142M1183.5 0v142M1184.5 0v142M1187.5 0v142M1190.5 0v142M1198.5 0v142M1199.5 0v142" stroke="url(#gR)" stroke-width="1.04" fill="none" transform="translate(0 306)"/>
<path d="M1176.5 0v142M1182.5 0v142M1185.5 0v142M1189.5 0v142M1193.5 0v142M1209.5 0v142M1211.5 0v142M1212.5 0v142M1214.5 0v142" stroke="url(#gR)" stroke-width="1.04" fill="none" transform="translate(0 306.5)"/>
<path d="M1186.5 0v142M1188.5 0v142M1191.5 0v142M1192.5 0v142M1194.5 0v142M1195.5 0v142M1196.5 0v142M1197.5 0v142M1200.5 0v142M1201.5 0v142M1202.5 0v142M1203.5 0v142M1204.5 0v142M1205.5 0v142M1207.5 0v142M1208.5 0v142M1210.5 0v142M1213.5 0v142M1216.5 0v142M1217.5 0v142M1218.5 0v142" stroke="url(#gR)" stroke-width="1.04" fill="none" transform="translate(0 307)"/>
<path d="M1206.5 0v142M1215.5 0v142M1219.5 0v142M1220.5 0v142M1221.5 0v142M1222.5 0v142M1224.5 0v142M1226.5 0v142M1227.5 0v142M1229.5 0v142M1230.5 0v142M1234.5 0v142M1236.5 0v142M1240.5 0v142" stroke="url(#gR)" stroke-width="1.04" fill="none" transform="translate(0 307.5)"/>
<path d="M1223.5 0v142M1225.5 0v142M1228.5 0v142M1231.5 0v142M1233.5 0v142M1238.5 0v142M1239.5 0v142M1241.5 0v142M1244.5 0v142M1249.5 0v142M1325.5 0v142M1329.5 0v142M1331.5 0v142" stroke="url(#gR)" stroke-width="1.04" fill="none" transform="translate(0 308)"/>
<path d="M1232.5 0v142M1235.5 0v142M1237.5 0v142M1243.5 0v142M1245.5 0v142M1247.5 0v142M1248.5 0v142M1266.5 0v142M1270.5 0v142M1271.5 0v142M1322.5 0v142M1326.5 0v142M1327.5 0v142M1328.5 0v142M1330.5 0v142" stroke="url(#gR)" stroke-width="1.04" fill="none" transform="translate(0 308.5)"/>
<path d="M1242.5 0v142M1246.5 0v142M1265.5 0v142M1269.5 0v142M1280.5 0v142M1287.5 0v142M1323.5 0v142M1324.5 0v142" stroke="url(#gR)" stroke-width="1.04" fill="none" transform="translate(0 309)"/>
<path d="M1262.5 0v142M1263.5 0v142M1264.5 0v142M1267.5 0v142M1268.5 0v142M1272.5 0v142M1273.5 0v142M1274.5 0v142M1275.5 0v142M1276.5 0v142M1277.5 0v142M1279.5 0v142M1281.5 0v142M1282.5 0v142M1284.5 0v142M1285.5 0v142M1288.5 0v142M1289.5 0v142M1290.5 0v142M1299.5 0v142M1304.5 0v142M1312.5 0v142M1313.5 0v142M1317.5 0v142" stroke="url(#gR)" stroke-width="1.04" fill="none" transform="translate(0 309.5)"/>
<path d="M1278.5 0v142M1283.5 0v142M1286.5 0v142M1291.5 0v142M1292.5 0v142M1295.5 0v142M1305.5 0v142M1308.5 0v142M1309.5 0v142M1310.5 0v142M1311.5 0v142M1314.5 0v142M1316.5 0v142M1318.5 0v142M1333.5 0v142M1345.5 0v142M1347.5 0v142M1351.5 0v142M1352.5 0v142M1354.5 0v142M1357.5 0v142M1358.5 0v142M1360.5 0v142M1367.5 0v142" stroke="url(#gR)" stroke-width="1.04" fill="none" transform="translate(0 310)"/>
<path d="M1293.5 0v142M1294.5 0v142M1296.5 0v142M1297.5 0v142M1298.5 0v142M1300.5 0v142M1301.5 0v142M1302.5 0v142M1303.5 0v142M1306.5 0v142M1307.5 0v142M1315.5 0v142M1319.5 0v142M1320.5 0v142M1332.5 0v142M1334.5 0v142M1335.5 0v142M1336.5 0v142M1340.5 0v142M1342.5 0v142M1344.5 0v142M1346.5 0v142M1348.5 0v142M1349.5 0v142M1353.5 0v142M1356.5 0v142M1361.5 0v142M1363.5 0v142M1366.5 0v142" stroke="url(#gR)" stroke-width="1.04" fill="none" transform="translate(0 310.5)"/>
<path d="M1321.5 0v142M1337.5 0v142M1338.5 0v142M1339.5 0v142M1341.5 0v142M1343.5 0v142M1350.5 0v142M1355.5 0v142M1359.5 0v142M1362.5 0v142M1364.5 0v142M1365.5 0v142" stroke="url(#gR)" stroke-width="1.04" fill="none" transform="translate(0 311)"/>
<path d="M1077.5 0v142" stroke="url(#gR1)" stroke-width="1.04" fill="none" transform="translate(0 304)"/>
<path d="M1090.5 0v142" stroke="url(#gR1)" stroke-width="1.04" fill="none" transform="translate(0 304.5)"/>
<path d="M1250.5 0v142M1261.5 0v142" stroke="url(#gR1)" stroke-width="1.04" fill="none" transform="translate(0 308.5)"/>
<path d="M1089.5 0v142" stroke="url(#gR2)" stroke-width="1.04" fill="none" transform="translate(0 304)"/>
<path d="M1078.5 0v142" stroke="url(#gR2)" stroke-width="1.04" fill="none" transform="translate(0 304.5)"/>
<path d="M1251.5 0v142M1260.5 0v142" stroke="url(#gR2)" stroke-width="1.04" fill="none" transform="translate(0 309)"/>
<path d="M1088.5 0v142" stroke="url(#gR3)" stroke-width="1.04" fill="none" transform="translate(0 304)"/>
<path d="M1079.5 0v142" stroke="url(#gR3)" stroke-width="1.04" fill="none" transform="translate(0 304.5)"/>
<path d="M1252.5 0v142" stroke="url(#gR3)" stroke-width="1.04" fill="none" transform="translate(0 308.5)"/>
<path d="M1087.5 0v142" stroke="url(#gR4)" stroke-width="1.04" fill="none" transform="translate(0 304)"/>
<path d="M1080.5 0v142" stroke="url(#gR4)" stroke-width="1.04" fill="none" transform="translate(0 304.5)"/>
<path d="M1253.5 0v142" stroke="url(#gR4)" stroke-width="1.04" fill="none" transform="translate(0 308)"/>
<path d="M1259.5 0v142" stroke="url(#gR4)" stroke-width="1.04" fill="none" transform="translate(0 309)"/>
<path d="M1081.5 0v142M1086.5 0v142" stroke="url(#gR5)" stroke-width="1.04" fill="none" transform="translate(0 304.5)"/>
<path d="M1258.5 0v142" stroke="url(#gR5)" stroke-width="1.04" fill="none" transform="translate(0 309)"/>
<path d="M1085.5 0v142" stroke="url(#gR6)" stroke-width="1.04" fill="none" transform="translate(0 304.5)"/>
<path d="M1082.5 0v142" stroke="url(#gR6)" stroke-width="1.04" fill="none" transform="translate(0 305)"/>
<path d="M1254.5 0v142" stroke="url(#gR6)" stroke-width="1.04" fill="none" transform="translate(0 308)"/>
<path d="M1257.5 0v142" stroke="url(#gR6)" stroke-width="1.04" fill="none" transform="translate(0 309.5)"/>
<path d="M1083.5 0v142" stroke="url(#gR7)" stroke-width="1.04" fill="none" transform="translate(0 304)"/>
<path d="M1084.5 0v142" stroke="url(#gR7)" stroke-width="1.04" fill="none" transform="translate(0 305)"/>
<path d="M1255.5 0v142" stroke="url(#gR7)" stroke-width="1.04" fill="none" transform="translate(0 308)"/>
<path d="M1256.5 0v142" stroke="url(#gR8)" stroke-width="1.04" fill="none" transform="translate(0 308.5)"/>
<path d="M879.5 387.8v4M879.5 396.6v6M879.5 395.5v2M879.5 394.7v4M879.5 402v4M880.5 394.7v4M880.5 381.8v2M880.5 401.3v2M880.5 410.8v4M881.5 389.5v4M881.5 398.3v4M881.5 410.9v6M882.5 398.2v4M882.5 400.4v4M882.5 423.4v6M882.5 398.3v4M883.5 412.7v2M883.5 389.4v6M883.5 394.6v6M883.5 403.8v4M884.5 390.8v3M884.5 398.5v3M884.5 396.4v2M884.5 390.6v3M885.5 400v6M885.5 392.1v6M885.5 409.2v3M885.5 403.8v3M885.5 401v3M885.5 403.1v3M885.5 416.1v2M886.5 413.2v4M886.5 398.6v2M886.5 397.6v2M887.5 403.6v2M887.5 388.7v4M887.5 404.5v2M888.5 395v3M888.5 392.5v2M888.5 402.9v3M888.5 403.3v6M888.5 385.3v6M889.5 404.4v2M889.5 402.7v4M890.5 423.2v6M890.5 404.8v2M890.5 392.4v3M890.5 392.1v6M890.5 401.5v4M891.5 393.7v6M891.5 394.6v4M891.5 405.3v3M892.5 403.7v4M892.5 400.3v3M892.5 393.4v3M893.5 400.4v6M893.5 391.3v4M893.5 406.8v4M893.5 396v6M893.5 404.8v3M893.5 390.5v2M894.5 403.5v3M894.5 400.5v3M894.5 398.5v4M894.5 395.6v4M894.5 424.7v4M895.5 394.6v3M895.5 385.2v4M895.5 397.7v3M895.5 406.2v4M896.5 421.9v6M896.5 397.5v3M896.5 400.9v2M897.5 395.1v3M897.5 393.3v4M897.5 398.9v2M898.5 399.5v3M898.5 408.3v3M898.5 397.5v6M898.5 400.5v2M898.5 403.2v6M899.5 406.4v2M899.5 387.9v2M899.5 395.6v4M899.5 395.5v6M899.5 431.5v4M899.5 397.3v3M899.5 395.4v4M900.5 408.1v3M900.5 404.5v2M900.5 392.7v6M900.5 400.2v6M900.5 417.2v6M901.5 432.1v6M901.5 391.3v2M901.5 429.1v3M902.5 390.1v4M902.5 408v2M902.5 406.5v4M902.5 402.4v4M903.5 388.2v6M903.5 400.4v6M903.5 397.8v6M904.5 382.8v2M904.5 399.7v2M904.5 399.3v6M904.5 401v3M904.5 390.1v4M905.5 413.4v4M905.5 389.1v4M905.5 414.2v3M906.5 411.4v6M906.5 386.1v6M906.5 407.8v2M906.5 401.1v6M906.5 404.7v3M907.5 405.2v2M907.5 396.2v6M908.5 403.5v2M908.5 393.4v3M909.5 396.6v3M909.5 406.1v4M910.5 388.6v2M910.5 396.2v6M910.5 409.6v2M910.5 393.8v6M910.5 392.1v2M911.5 413.5v6M911.5 392.8v2M911.5 411.9v2M912.5 398.2v2M912.5 416.8v6M912.5 384v6M913.5 406v4M913.5 395.8v4M913.5 382.9v3M913.5 386v4M913.5 424v2M914.5 405.5v2M914.5 388.3v2M914.5 391.9v6M914.5 391.6v2M915.5 400.5v6M915.5 393.3v2M915.5 388.3v6M915.5 391.5v2M916.5 384.3v2M916.5 405.6v3M916.5 397.2v3M916.5 411.1v6M916.5 399.5v3M916.5 402.4v6M917.5 404.2v3M917.5 393.5v4M917.5 398.9v3M917.5 401.3v6M918.5 438.3v2M918.5 389.4v4M918.5 407.4v2M918.5 415.1v4M919.5 400.5v2M919.5 388.8v6M920.5 439.4v6M920.5 428.2v6M920.5 417.5v6M920.5 403.6v4M921.5 392.9v6M921.5 401.1v4M921.5 391.1v3M921.5 399.4v2M922.5 402.7v4M922.5 409.8v3M922.5 405.5v6M923.5 394v2M923.5 392v6M923.5 402.9v4M923.5 405.8v2M923.5 390.2v2M924.5 420.3v6M924.5 397.8v3M924.5 412v6M924.5 387.8v3M925.5 406.5v2M925.5 418.5v4M925.5 393.6v6M925.5 390.6v6M926.5 417.3v6M926.5 394.4v3M926.5 384.4v3M927.5 409.9v6M927.5 417.9v3M927.5 390.4v4M927.5 388v3M928.5 402.6v2M928.5 392.3v4M928.5 400.9v2M928.5 390.2v4M929.5 387.5v3M929.5 388.4v2M929.5 416.3v6M930.5 400.7v3M930.5 384.3v3M930.5 405.2v2M930.5 417.1v3M930.5 397.2v2M930.5 423.2v3M931.5 409.4v4M931.5 393.7v6M931.5 396.1v6M932.5 424.3v2M932.5 403.4v6M932.5 401.5v2M932.5 393.7v4M933.5 388.9v4M933.5 403v4M933.5 401.9v6M933.5 391.2v3M934.5 406.5v6M934.5 404.6v3M934.5 415.2v6M934.5 383.6v2M935.5 389.7v2M935.5 401.2v6M935.5 386.9v2M935.5 384.6v3M935.5 384.6v3M936.5 404.9v4M936.5 429.6v6M936.5 385.4v3M937.5 386.7v3M937.5 402.4v3M937.5 396.9v6M937.5 403.1v3M937.5 390.3v6M938.5 403.7v6M938.5 398.4v3M939.5 401.8v2M939.5 396.7v2M939.5 405v3M939.5 414.5v4M940.5 388.1v3M940.5 419.4v2M940.5 398.4v2M940.5 409.6v6M940.5 409.9v2M940.5 383.2v3M941.5 401.4v3M941.5 404.8v6M942.5 421.9v2M942.5 406.1v4M942.5 424.7v2M942.5 396.6v2M943.5 400.1v3M943.5 403.1v3M943.5 443.2v2M943.5 406.4v4M943.5 404.9v3M944.5 403.3v4M944.5 401.6v3M944.5 396.2v6M944.5 400.3v2M944.5 399.2v6M945.5 418.1v2M945.5 399.8v6M945.5 395.8v2M945.5 394.2v2M945.5 417.4v6M946.5 406.1v3M946.5 422.5v6M947.5 394.5v4M947.5 391.5v4M947.5 416.6v3M947.5 395.8v6M947.5 412v4M947.5 394.1v4M948.5 397.9v3M948.5 413.7v6M948.5 389.1v2M948.5 399.7v4M948.5 383.7v3M949.5 398v4M949.5 420.8v4M949.5 406.3v4M949.5 391v2M949.5 405.2v2M949.5 407.7v2M950.5 400.4v2M950.5 397.4v4M950.5 405.1v2M951.5 403.9v3M951.5 392.4v3M952.5 396v4M952.5 397.2v4M952.5 387.9v2M952.5 405.3v3M952.5 410.1v4M953.5 394.1v3M953.5 413.8v6M953.5 402.2v6M953.5 419.6v3M953.5 419v3M954.5 421.9v6M954.5 393.2v4M954.5 391.7v6M954.5 390.9v2M954.5 403v6M955.5 403.9v3M955.5 394v2M955.5 402v3M955.5 393.1v2M955.5 410.9v4M956.5 387.8v3M956.5 407.7v6M956.5 408.7v4M956.5 392v6M957.5 396.1v6M957.5 386.9v3M957.5 389.1v6M957.5 394.3v6M957.5 394.8v3M958.5 391.5v3M958.5 392.4v4M958.5 389.6v3M958.5 387v6M958.5 407.3v3M959.5 392.9v2M959.5 384.6v3M959.5 417.7v3M960.5 399.2v2M960.5 421.2v2M960.5 412v2M960.5 405.3v6M960.5 416.2v2M960.5 410.9v2M960.5 400.9v6M961.5 429.6v4M961.5 394.8v2M961.5 389.4v6M962.5 408v4M962.5 395.6v6M962.5 383.5v3M962.5 392.1v3M962.5 404.7v4M962.5 399.1v6M963.5 413.7v6M963.5 390.6v2M963.5 404.3v6M963.5 394.2v6M963.5 393.3v3M964.5 400.1v2M964.5 390.4v3M964.5 414v4M964.5 404.1v6M965.5 383.4v4M965.5 401v3M965.5 407v2M966.5 391.4v3M966.5 394v6M966.5 395.6v6M966.5 395.9v4M967.5 402.6v2M967.5 400.5v2M967.5 406.5v6M967.5 399.1v4M968.5 402.9v4M968.5 396.3v4M968.5 395.1v4M968.5 414.6v6M968.5 392.9v6M968.5 393v6M969.5 398.7v4M969.5 395.3v6M969.5 388.6v3M969.5 398.6v2M970.5 383.8v3M970.5 403.3v3M970.5 389v4M970.5 402.5v2M970.5 396.7v3M971.5 384.7v3M971.5 408.9v2M971.5 396.7v3M971.5 413.1v6M972.5 401.6v6M972.5 410.8v3M972.5 408.2v3M972.5 409.9v3M972.5 403.8v4M972.5 395.3v6M973.5 404.6v6M973.5 415v4M973.5 393.9v6M973.5 412v6M973.5 397.5v6M973.5 406.4v6M974.5 386.2v2M974.5 398.7v2M974.5 403.6v3M974.5 396.7v6M974.5 397.1v4M975.5 397.8v3M975.5 402.3v2M975.5 385.1v2M975.5 393.6v6M975.5 408.8v4M975.5 389.6v6M976.5 410.7v3M976.5 408.3v2M976.5 409.5v6M977.5 400.6v2M977.5 400v4M977.5 403.5v3M977.5 411.2v3M977.5 406.9v3M977.5 395.6v6M978.5 393.8v3M978.5 401v4M978.5 388v3M978.5 398.1v6M979.5 405.7v2M979.5 403.6v3M979.5 391.6v3M979.5 398v2M980.5 409.3v4M980.5 404.5v2M980.5 398.8v2M980.5 389.9v4M980.5 383.9v4M981.5 410v2M981.5 397.1v2M981.5 407.2v3M981.5 411.3v6M982.5 406.7v4M982.5 402.7v6M982.5 416.7v6M982.5 407.3v3M983.5 390.1v2M983.5 402.1v2M983.5 393.8v2M984.5 404.9v4M984.5 391v6M984.5 395.1v3M985.5 384v6M985.5 398.3v2M985.5 385.9v4M985.5 391.8v6M986.5 403.3v2M986.5 388.9v2M986.5 407.6v6M986.5 405.8v4M986.5 419.5v6M986.5 394.9v6M986.5 388.3v4M987.5 402v3M987.5 394.9v6M987.5 389.8v4M988.5 399.3v6M988.5 411.2v4M988.5 391.3v2M988.5 393.2v3M989.5 388.3v6M989.5 394.6v3M989.5 411.8v3M990.5 401.1v4M990.5 403.1v4M990.5 422.8v6M990.5 413.3v3M991.5 414.4v6M991.5 424.2v3M991.5 402.2v3M991.5 413.8v3M991.5 393.2v6M991.5 402.5v6M992.5 412.8v3M992.5 388v4M992.5 400.6v6M993.5 398.7v6M993.5 412v4M993.5 413.1v3M993.5 387.5v6M994.5 392.7v3M994.5 407.4v2M994.5 399.4v2M995.5 393.6v2M995.5 410.6v4M995.5 402.1v3M995.5 415.9v3M995.5 420.7v3M996.5 400.1v2M996.5 386.1v6M996.5 428.6v3M996.5 387.3v4M996.5 402.3v3M996.5 394.1v3M997.5 403.8v4M997.5 402.8v4M997.5 410.2v3M997.5 398.9v3M998.5 387.9v2M998.5 393v6M998.5 409.9v4M998.5 400.3v6M998.5 407.4v3M999.5 421.5v4M999.5 414.5v3M999.5 393.9v4M999.5 385.2v3M999.5 396.1v2M1000.5 393.5v4M1000.5 395.1v2M1000.5 393.6v3M1000.5 392.2v4M1000.5 398.1v2M1000.5 396.5v4M1000.5 387.5v3M1001.5 390.2v3M1001.5 390.3v6M1001.5 415.3v6M1001.5 395.7v3M1002.5 397.9v2M1002.5 407.3v2M1002.5 415v4M1002.5 405v4M1003.5 396.1v4M1004.5 399.6v3M1004.5 393.9v2M1005.5 405.8v3M1005.5 400.4v4M1005.5 404v6M1005.5 410.9v6M1005.5 400.7v3M1006.5 396.3v6M1006.5 393.5v4M1006.5 410.8v6M1006.5 410.5v3M1006.5 406.1v3M1007.5 399.5v2M1007.5 399.5v2M1007.5 402.9v3M1007.5 413.1v3M1008.5 409.5v3M1008.5 420v6M1008.5 403.8v6M1008.5 407.1v6M1008.5 389.7v6M1009.5 398.2v6M1009.5 397.9v4M1009.5 403.7v4M1009.5 402.3v4M1009.5 395.3v3M1010.5 395.8v3M1010.5 400.3v6M1011.5 393.1v3M1011.5 395.3v4M1011.5 410.9v3M1011.5 411.7v3M1012.5 384v2M1012.5 410.9v3M1012.5 397.6v3M1012.5 406.8v4M1013.5 414.3v3M1013.5 392.6v6M1013.5 402.3v6M1013.5 392.3v3M1013.5 400.9v2M1014.5 404.4v6M1014.5 389.1v3M1014.5 394.4v4M1014.5 386.1v4M1014.5 422.8v3M1015.5 397.4v3M1015.5 403.4v2M1015.5 409v3M1016.5 420.9v6M1016.5 390.2v6M1017.5 399.7v2M1017.5 416.4v4M1017.5 406.7v4M1018.5 395.3v4M1018.5 406.2v2M1018.5 391v3M1018.5 399.5v3M1018.5 410.1v3M1018.5 389.1v6M1019.5 407.9v2M1019.5 398.5v6M1019.5 390.5v3M1019.5 393.3v2M1019.5 397.4v4M1019.5 398.2v4M1020.5 405.9v6M1020.5 390.6v3M1020.5 396.4v6M1020.5 397.1v4M1020.5 435.4v3M1020.5 398.8v3M1021.5 400.3v2M1021.5 401.5v6M1021.5 401.6v4M1021.5 420.7v6M1021.5 398.1v3M1021.5 401.9v4M1021.5 390.3v4M1022.5 395.4v2M1022.5 406.7v4M1022.5 412v6M1022.5 395.3v6M1022.5 390.3v2M1023.5 396.6v4M1023.5 398v4M1023.5 408.2v6M1024.5 392.1v6M1024.5 410.5v6M1024.5 398.9v3M1024.5 398.5v3M1024.5 401.6v4M1024.5 411.5v6M1025.5 397.2v3M1025.5 390.6v2M1025.5 398.5v4M1025.5 404.3v3M1025.5 391.3v3M1025.5 393.5v3M1026.5 410.4v3M1026.5 396.6v4M1026.5 405.5v4M1026.5 402.5v4M1026.5 402.7v6M1027.5 396.1v3M1027.5 390.7v4M1027.5 404.9v2M1027.5 384.8v2M1027.5 395.9v3M1028.5 387.6v3M1028.5 421.6v6M1028.5 399.1v6M1028.5 396.3v2M1029.5 405.8v6M1029.5 391.9v2M1029.5 391.6v2M1029.5 423.7v4M1030.5 394.7v2M1030.5 404.9v3M1030.5 398v4M1030.5 405.7v2M1030.5 399.5v3M1030.5 400.7v3M1031.5 423.3v3M1031.5 393.8v6M1031.5 394.1v3M1032.5 401.4v4M1032.5 402.7v4M1032.5 414.9v3M1033.5 421.2v2M1033.5 414.9v6M1033.5 411.1v4M1033.5 405.7v4M1034.5 423.2v4M1034.5 403.8v2M1034.5 424.8v2M1035.5 399.4v6M1035.5 397v2M1035.5 398.8v3M1035.5 385.3v3M1035.5 407.1v4M1036.5 390.7v6M1036.5 398.4v4M1036.5 403.6v3M1036.5 393.5v4M1036.5 403.2v2M1036.5 388.5v6M1037.5 417.7v6M1037.5 400.9v2M1037.5 391.9v6M1037.5 388.1v2M1037.5 403v2M1038.5 405.1v4M1038.5 415.2v2M1038.5 386.8v3M1038.5 389.2v4M1038.5 397.7v2M1039.5 395.1v3M1039.5 392.6v2M1039.5 387.9v3M1039.5 399.9v2M1040.5 407.3v3M1040.5 393.8v6M1040.5 401.4v4M1040.5 412.9v3M1040.5 399.9v2M1040.5 396.2v4M1040.5 397.1v2M1041.5 393.9v3M1041.5 405.7v4M1041.5 402.7v3M1042.5 402.9v6M1042.5 399v6M1042.5 388.6v4M1042.5 386.5v3M1043.5 401.2v6M1043.5 416.3v4M1043.5 394.7v6M1043.5 408.4v2M1044.5 393.3v3M1044.5 404.7v3M1044.5 418.4v3M1045.5 397.8v4M1045.5 405.9v3M1045.5 392.3v3M1046.5 406.5v6M1046.5 397v2M1046.5 393.6v3M1046.5 419v2M1047.5 411.3v6M1047.5 431.1v6M1047.5 411.4v6M1048.5 406.2v2M1048.5 387.4v4M1048.5 405.7v3M1048.5 392.3v2M1049.5 387.5v4M1049.5 407.7v3M1049.5 388v4M1049.5 421.7v6M1049.5 393.7v6M1050.5 406.3v6M1050.5 430.4v2M1050.5 399.7v4M1050.5 402.5v2M1051.5 402v3M1051.5 398.8v3M1051.5 411v6M1051.5 392v4M1051.5 388.3v6M1051.5 407v3M1051.5 420.6v4M1052.5 427.5v6M1052.5 404.6v4M1052.5 413.8v4M1052.5 421.8v2M1052.5 407.5v4M1052.5 424.8v4M1052.5 385.2v3M1053.5 402.9v3M1053.5 385.2v6M1053.5 393.4v4M1054.5 398.9v6M1054.5 408.5v4M1054.5 398.5v2M1054.5 395.3v4M1054.5 400.3v6M1054.5 392.3v6M1055.5 414.5v4M1055.5 424v2M1055.5 397.6v4M1055.5 433.6v2M1056.5 408.4v4M1056.5 394.1v4M1056.5 411.5v3M1056.5 390.7v2M1057.5 419.6v2M1057.5 391.4v2M1057.5 384.3v3M1057.5 407.7v2M1058.5 400.8v3M1058.5 393v2M1058.5 393.4v6M1059.5 403.6v3M1059.5 396.2v4M1059.5 391.5v3M1059.5 393.7v4M1059.5 408.5v6M1060.5 386.9v2M1060.5 384.3v4M1060.5 402.6v2M1060.5 399.9v3M1060.5 405.1v3M1060.5 395.4v4M1060.5 392v6M1061.5 385.5v2M1061.5 412.6v2M1062.5 402.3v4M1062.5 395.7v2M1062.5 400.1v6M1062.5 409.8v4M1062.5 403.4v2M1063.5 402v3M1063.5 414.4v4M1063.5 398.2v3M1063.5 405.9v3M1063.5 385.7v6M1064.5 407.7v3M1064.5 409.6v6M1064.5 410v2M1064.5 390.5v4M1065.5 414.3v2M1065.5 410.3v3M1065.5 400.6v3M1065.5 401.6v2M1065.5 420.7v3M1066.5 408.5v2M1066.5 402.2v6M1066.5 406.3v6M1066.5 385.1v6M1066.5 406.4v2M1066.5 398.2v4M1067.5 406.7v6M1067.5 391.7v4M1067.5 392.2v2M1067.5 407.2v6M1067.5 412.5v3M1068.5 403.3v4M1068.5 403.8v6M1068.5 420.3v4M1068.5 410.1v3M1069.5 407.9v4M1069.5 401.6v4M1069.5 410v4M1069.5 403.3v2M1069.5 402.3v6M1070.5 402.5v6M1070.5 390.5v3M1070.5 416.1v3M1070.5 401.8v3M1071.5 407.5v3M1071.5 386.7v4M1072.5 396.7v3M1072.5 399.8v4M1072.5 390.2v2M1072.5 402.3v4M1072.5 411.1v4M1073.5 397.5v6M1073.5 393.3v2M1073.5 385.3v6M1073.5 396.3v6M1073.5 390.4v3M1074.5 393.7v3M1074.5 407v4M1074.5 411.4v2M1074.5 385.8v3M1074.5 388.6v2M1075.5 407.6v4M1075.5 390.3v3M1075.5 395.5v6M1075.5 410.6v6M1076.5 406.9v4M1077.5 421.7v2M1077.5 413.5v4M1077.5 401.4v4M1078.5 406.6v2M1078.5 401.1v4M1078.5 399.8v6M1079.5 399.2v3M1079.5 396.2v6M1079.5 397.3v2M1080.5 401.3v2M1080.5 399.9v2M1080.5 425.4v4M1081.5 401.5v4M1081.5 429.7v4M1081.5 433.4v2M1081.5 386.2v2M1081.5 427.1v4M1082.5 410.8v6M1082.5 417.5v6M1082.5 392.4v4M1082.5 387.4v4M1083.5 392.1v6M1083.5 388.1v6M1084.5 394.6v4M1084.5 400.7v4M1084.5 416.1v4M1084.5 406.3v3M1085.5 393.5v2M1085.5 404.5v3M1085.5 391v6M1085.5 409.7v4M1085.5 394.1v6M1086.5 413.5v3M1086.5 403.3v2M1086.5 411.6v3M1086.5 422v3M1086.5 404.8v2M1086.5 411.3v2M1087.5 395.1v2M1087.5 420.6v6M1088.5 399.5v2M1088.5 420.7v3M1088.5 404.6v4M1088.5 416.8v6M1089.5 406.6v3M1089.5 407.1v3M1090.5 405v6M1090.5 411v3M1090.5 409.2v2M1090.5 431.6v6M1090.5 394.9v6M1091.5 405.3v6M1091.5 414.1v2M1091.5 409.6v2M1091.5 391.1v4M1091.5 390.3v4M1091.5 408.9v3M1092.5 394.1v4M1092.5 396.5v6M1092.5 406.7v2M1092.5 387.1v3M1093.5 400.9v4M1093.5 386v2M1093.5 393.2v4M1093.5 410.4v4M1093.5 388.5v3M1093.5 406.8v6M1093.5 387.7v4M1094.5 406.6v3M1094.5 396.7v2M1094.5 401.2v2M1094.5 403.4v6M1094.5 403v2M1095.5 395.9v2M1095.5 417.1v3M1095.5 405.9v2M1096.5 413.8v3M1096.5 394.5v6M1096.5 402v2M1096.5 409v4M1097.5 420.9v2M1097.5 396.3v6M1097.5 405.1v6M1097.5 409.5v3M1097.5 396.4v4M1098.5 411.1v3M1098.5 392.7v6M1099.5 410.9v4M1099.5 412.6v6M1100.5 408.8v3M1100.5 399.2v3M1100.5 395.7v3M1100.5 402.2v2M1100.5 395.2v4M1101.5 409.3v6M1101.5 396.5v2M1101.5 394.8v2M1101.5 391.2v2M1102.5 410.8v6M1102.5 410.8v2M1102.5 424.6v6M1103.5 391.8v2M1103.5 421.1v2M1103.5 397.3v6M1103.5 386.1v6M1103.5 397.4v4M1104.5 437.2v3M1104.5 391.6v6M1104.5 411.3v6M1104.5 388v2M1104.5 405.4v6M1105.5 387v2M1105.5 398.4v4M1105.5 390.7v2M1105.5 398.7v2M1105.5 401v3M1106.5 414.1v3M1106.5 387.2v4M1106.5 403.4v6M1106.5 384.2v4M1106.5 392.7v4M1107.5 416.1v3M1107.5 409.4v4M1107.5 395.3v6M1107.5 399.1v4M1108.5 423.1v2M1108.5 392.5v6M1108.5 409.2v2M1109.5 386.8v2M1109.5 390.6v2M1109.5 407.8v6M1109.5 435.3v6M1109.5 405v2M1110.5 391.4v4M1110.5 384.7v2M1110.5 418.3v4M1110.5 398.9v6M1111.5 407v2M1111.5 408v2M1111.5 419.3v2M1111.5 400.9v6M1111.5 403.4v4M1111.5 409.8v4M1112.5 406v4M1112.5 384.4v2M1112.5 405.1v2M1112.5 413v4M1112.5 387.2v4M1112.5 408.2v2M1113.5 418.8v4M1113.5 416.9v3M1113.5 407v4M1113.5 410.2v6M1114.5 400.2v4M1114.5 398v6M1114.5 385.8v3M1115.5 393.7v4M1115.5 393.8v6M1116.5 404.4v6M1116.5 391.6v6M1116.5 406v6M1116.5 419.4v6M1117.5 398.5v3M1117.5 414.1v4M1117.5 425.9v3M1117.5 395v2M1117.5 398.7v3M1118.5 421.6v2M1118.5 386.1v3M1118.5 414.1v2M1118.5 402.3v3M1119.5 399.8v6M1119.5 398.5v3M1119.5 396.6v3M1119.5 392.9v4M1119.5 395.2v3M1120.5 418.1v2M1120.5 422v4M1120.5 384.8v3M1121.5 407.4v4M1121.5 392.1v6M1121.5 391.6v4M1121.5 396.2v2M1121.5 411.6v6M1121.5 394.8v3M1122.5 410.9v3M1122.5 391.4v4M1122.5 401.4v4M1122.5 403.6v6M1123.5 406.3v3M1123.5 404v2M1123.5 404.1v4M1123.5 400.1v6M1124.5 405.6v2M1124.5 425.2v6M1124.5 409.1v6M1124.5 405v4M1124.5 425.4v3M1125.5 399.8v4M1125.5 401.7v3M1125.5 393.5v4M1125.5 405.5v6M1126.5 414.8v2M1126.5 396.7v2M1126.5 403.1v6M1126.5 417.8v2M1126.5 402.4v3M1126.5 408v2M1126.5 404.7v4M1127.5 401.3v3M1127.5 407.9v3M1127.5 421.8v2M1128.5 403.6v4M1128.5 408.8v2M1129.5 406v3M1129.5 384.4v3M1129.5 396.5v3M1130.5 411.1v2M1130.5 403.5v6M1130.5 399.7v2M1130.5 401.1v2M1131.5 405.6v4M1131.5 404.3v6M1131.5 385.7v2M1131.5 406.2v3M1132.5 397.7v3M1132.5 412.5v4M1132.5 398.3v6M1132.5 394.4v3M1133.5 401.5v6M1133.5 405.6v6M1133.5 405.9v4M1133.5 390.5v2M1134.5 402.1v6M1134.5 411.3v3M1134.5 399.5v4M1134.5 404.2v3M1135.5 410.3v2M1135.5 390.5v6M1135.5 400.3v2M1135.5 393.6v4M1135.5 400.3v2M1136.5 409.7v2M1137.5 407.2v3M1137.5 389.7v4M1137.5 404.2v6M1137.5 427.4v6M1137.5 413.2v3M1138.5 401.9v4M1138.5 397.6v4M1139.5 401.3v3M1139.5 413.5v2M1139.5 410v4M1139.5 405.4v2M1140.5 392.7v6M1140.5 403v6M1140.5 402v2M1141.5 405.8v6M1141.5 395.8v3M1141.5 396.8v4M1141.5 428.2v2M1141.5 400.9v4M1142.5 399.8v6M1142.5 395.4v3M1143.5 388.3v3M1143.5 408.1v2M1144.5 406.8v6M1144.5 397.3v6M1144.5 399.6v6M1144.5 388.1v6M1144.5 407.6v6M1144.5 405.7v3M1145.5 401.9v4M1145.5 413.6v2M1145.5 391.4v3M1146.5 419.7v3M1146.5 408.8v3M1146.5 399.6v3M1146.5 387.3v3M1146.5 407v3M1147.5 388.1v3M1147.5 394.7v3M1147.5 418.7v4M1147.5 400.9v4M1148.5 405.2v2M1148.5 403.1v4M1148.5 395.6v6M1148.5 410.7v4M1148.5 399.7v4M1149.5 396.9v4M1149.5 395.4v3M1149.5 416.4v2M1150.5 408v3M1150.5 389.2v4M1150.5 389.5v4M1150.5 393.3v3M1150.5 415.5v3M1150.5 393.9v3M1151.5 409.1v3M1151.5 403.9v2M1151.5 393.6v2M1151.5 386.7v3M1151.5 418.6v3M1152.5 395.5v3M1152.5 417.6v2M1152.5 390.7v6M1152.5 395.2v3M1152.5 397.5v3M1153.5 393.2v3M1153.5 413.1v6M1153.5 405.9v3M1153.5 402.2v4M1153.5 417.2v2M1154.5 428.4v2M1154.5 419.2v6M1154.5 405.4v6M1154.5 405.2v4M1154.5 418.4v3M1155.5 409.9v4M1155.5 408.6v6M1155.5 401v4M1155.5 406.7v4M1156.5 386.9v3M1156.5 399v3M1156.5 418.1v3M1156.5 415v6M1156.5 399.4v6M1157.5 418.5v2M1157.5 392.5v6M1157.5 411.5v4M1157.5 411.8v3M1157.5 415v3M1157.5 402.7v6M1158.5 400.6v2M1158.5 419.5v3M1158.5 407.3v2M1158.5 411.9v6M1158.5 400.7v4M1159.5 391.5v6M1159.5 404.3v2M1160.5 399v3M1160.5 400.9v3M1160.5 399.5v3M1160.5 411.7v4M1160.5 409.9v4M1161.5 405v2M1161.5 397v2M1161.5 398.8v4M1161.5 385.1v4M1162.5 406.1v2M1162.5 416.2v6M1162.5 404.3v4M1163.5 407.3v4M1163.5 392.4v3M1163.5 413.4v4M1163.5 434.5v4M1163.5 410.4v4M1163.5 407.1v6M1164.5 396.4v4M1164.5 389.4v3M1164.5 416.2v2M1164.5 405.2v3M1165.5 408.2v3M1165.5 418.5v3M1165.5 417.8v2M1165.5 401.4v2M1166.5 404.3v4M1166.5 399.4v2M1166.5 404.9v2M1166.5 389.6v3M1167.5 417.5v4M1167.5 390.3v4M1167.5 408.2v4M1167.5 386v6M1167.5 395.8v2M1167.5 409.8v2M1168.5 404.8v2M1168.5 394.6v3M1168.5 402.3v3M1168.5 401.9v4M1169.5 404.6v3M1169.5 394v3M1169.5 390.6v6M1170.5 393.3v6M1170.5 402.2v2M1170.5 393.4v2M1170.5 394v6M1171.5 391.9v6M1171.5 390.7v4M1171.5 412.8v4M1172.5 402.7v6M1172.5 409.8v4M1173.5 400.7v6M1173.5 387.5v4M1173.5 417.3v2M1173.5 423.5v3M1174.5 394.2v6M1174.5 400.7v4M1175.5 387.4v3M1175.5 397.9v3M1175.5 415.7v3M1176.5 427.5v4M1176.5 396.5v6M1176.5 400.7v3M1176.5 426.4v4M1176.5 398.7v4M1177.5 412.8v6M1177.5 425.2v2M1177.5 407v2M1178.5 393v4M1178.5 408.3v3M1178.5 417.1v2M1178.5 400.5v2M1179.5 414.1v2M1179.5 390.8v6M1179.5 391.3v4M1179.5 397.3v4M1180.5 406.5v2M1180.5 402.6v3M1180.5 407.9v2M1180.5 392.4v3M1181.5 403.3v4M1181.5 411.2v2M1181.5 390.9v2M1181.5 415.8v2M1182.5 402.4v4M1182.5 393.4v2M1182.5 398v3M1182.5 394.5v6M1182.5 423v3M1183.5 393.6v2M1183.5 396.5v3M1183.5 395.8v3M1184.5 404.1v3M1184.5 387v4M1184.5 404.7v2M1184.5 398.5v4M1185.5 407.5v4M1185.5 398.3v6M1185.5 408.9v6M1185.5 408.5v4M1185.5 418.7v6M1186.5 393.9v4M1186.5 403.9v2M1186.5 412v6M1186.5 390v2M1186.5 390.9v2M1187.5 401.7v4M1187.5 403.8v4M1187.5 406.9v6M1187.5 387.2v3M1188.5 408v6M1188.5 408.3v4M1188.5 419.7v4M1188.5 408.7v3M1188.5 412.5v2M1188.5 407.5v2M1189.5 386.1v3M1189.5 403.8v6M1189.5 423.1v3M1189.5 408.4v2M1189.5 399.3v3M1190.5 401.2v3M1190.5 389.1v2M1190.5 413v2M1190.5 386v3M1190.5 403.4v4M1191.5 407.3v4M1191.5 396.2v6M1192.5 394.8v4M1192.5 391.1v3M1192.5 403.7v4M1192.5 393.6v4M1193.5 402.4v4M1193.5 398.1v3M1193.5 419.7v4M1194.5 405.7v6M1194.5 418.5v4M1194.5 423.1v2M1194.5 400.4v6M1195.5 406.1v2M1195.5 407.6v3M1195.5 395.1v6M1196.5 436.7v4M1196.5 394.2v6M1196.5 431.7v6M1196.5 397.8v3M1196.5 397.9v6M1197.5 401.6v6M1197.5 388.4v3M1197.5 403.8v6M1197.5 403.9v2M1197.5 400.4v6M1198.5 404.6v6M1198.5 392v4M1198.5 397.1v4M1198.5 393.6v6M1198.5 404.8v2M1198.5 398.1v2M1199.5 404v6M1199.5 388.2v6M1199.5 402.7v6M1200.5 423v6M1200.5 413.9v4M1200.5 391.3v2M1200.5 415.5v6M1200.5 409.6v6M1201.5 404.5v6M1201.5 395.6v6M1201.5 408.4v6M1202.5 387.7v2M1202.5 407.4v2M1202.5 393.8v2M1203.5 411.3v2M1203.5 414v4M1203.5 400.6v2M1203.5 399.9v2M1204.5 399.6v3M1204.5 403.8v2M1204.5 415.2v6M1205.5 399.9v2M1205.5 388.1v3M1205.5 409.3v3M1205.5 411.4v2M1206.5 397.4v3M1206.5 408.4v6M1206.5 396.7v2M1206.5 419.7v6M1206.5 397v3M1207.5 402.5v4M1207.5 391.3v6M1207.5 403.2v4M1207.5 394v2M1207.5 404.2v4M1208.5 389.2v4M1208.5 403.6v2M1208.5 404.6v2M1209.5 403.5v3M1209.5 395.8v2M1209.5 403.1v6M1209.5 398.5v4M1210.5 432.1v4M1210.5 401.7v2M1210.5 406.1v2M1210.5 393.6v6M1210.5 400.9v4M1210.5 399.3v2M1211.5 402.3v2M1211.5 388.5v6M1211.5 392.6v3M1212.5 403.3v2M1212.5 403.6v6M1212.5 404.7v4M1212.5 420.8v2M1213.5 395.9v4M1213.5 399.3v4M1213.5 403.2v3M1213.5 391v2M1214.5 405.7v3M1214.5 401v2M1214.5 398.7v3M1215.5 409v6M1215.5 408v6M1215.5 404.9v3M1215.5 386.8v3M1216.5 403.4v2M1216.5 408.3v2M1216.5 398.8v4M1216.5 408.9v6M1216.5 398.5v4M1217.5 412.6v3M1217.5 388.1v6M1217.5 402v3M1217.5 402.1v2M1217.5 414.9v6M1217.5 400.3v4M1218.5 388.8v3M1218.5 389.3v4M1218.5 403.4v3M1218.5 405.3v2M1219.5 403.5v3M1219.5 405.7v6M1219.5 418v4M1219.5 404.1v3M1219.5 401.8v3M1220.5 405.6v2M1220.5 393.1v6M1220.5 405.9v3M1221.5 412.7v4M1221.5 388.1v3M1221.5 400.6v2M1221.5 389.2v6M1221.5 402.1v3M1222.5 406.9v2M1222.5 422.9v3M1222.5 424.7v2M1222.5 405.6v2M1222.5 395.9v6M1223.5 409.6v2M1223.5 431v2M1223.5 412v6M1223.5 394.8v4M1224.5 414.8v4M1224.5 414.7v2M1224.5 412.6v3M1224.5 393.5v2M1224.5 411.7v6M1225.5 403.5v3M1225.5 403.3v3M1225.5 425.2v4M1225.5 398.5v4M1225.5 399.3v4M1226.5 411.8v2M1226.5 397.9v4M1227.5 391v3M1227.5 389.7v4M1227.5 418.3v6M1227.5 408.3v2M1227.5 409.4v3M1227.5 394.3v2M1228.5 404.7v2M1228.5 407.4v2M1228.5 408.7v4M1228.5 394.9v4M1228.5 401.4v3M1228.5 427.2v2M1229.5 401.9v3M1229.5 388.7v3M1229.5 399.8v4M1229.5 404.1v2M1229.5 405.1v3M1230.5 398.8v4M1230.5 400.8v6M1230.5 403.5v4M1230.5 406.4v6M1230.5 404.4v6M1230.5 395.9v4M1231.5 421.7v3M1231.5 403.2v6M1231.5 389.8v6M1231.5 411.4v3M1231.5 414.7v3M1232.5 398.9v6M1232.5 409.7v2M1232.5 412.8v2M1232.5 402.8v2M1232.5 402.1v2M1233.5 413.5v3M1233.5 419.3v2M1233.5 396.9v3M1234.5 397.5v3M1234.5 411.5v4M1234.5 401.2v3M1234.5 399.4v6M1234.5 405.7v2M1235.5 405v2M1235.5 407.2v3M1235.5 406.5v2M1235.5 398.4v3M1236.5 400.6v4M1236.5 411.9v6M1236.5 402.4v4M1236.5 398.4v2M1236.5 424.2v3M1236.5 404v2M1237.5 393.4v2M1237.5 398.1v4M1237.5 416.5v4M1237.5 387.7v3M1238.5 399.7v6M1238.5 397.4v4M1238.5 396.9v6M1238.5 413.1v4M1239.5 410.1v4M1239.5 399.1v2M1239.5 404.3v2M1240.5 395.6v4M1240.5 390.2v4M1240.5 412.1v3M1240.5 411.2v4M1241.5 404.6v3M1241.5 396.7v6M1241.5 407.7v2M1242.5 394.9v2M1242.5 405.9v6M1242.5 399.4v2M1242.5 415.4v2M1243.5 396.9v2M1243.5 407.2v4M1243.5 401.1v6M1243.5 415.4v3M1243.5 417.8v4M1243.5 388.4v6M1244.5 429.8v2M1244.5 396.6v4M1244.5 405.7v6M1244.5 403.4v4M1244.5 410.4v4M1245.5 410.5v2M1246.5 398.5v6M1246.5 402.9v6M1246.5 429v2M1246.5 426.4v2M1247.5 408.2v6M1247.5 414.4v6M1248.5 400.9v6M1248.5 406.2v2M1248.5 394.4v2M1248.5 401.3v2M1249.5 393.1v2M1249.5 396.2v3M1249.5 418.7v2M1249.5 417.4v2M1250.5 394.8v2M1250.5 408.4v6M1250.5 422.2v3M1250.5 402.1v4M1250.5 404.7v2M1251.5 407.9v6M1251.5 396v2M1251.5 402.6v3M1251.5 400.7v4M1252.5 395.1v2M1252.5 409.6v4M1253.5 397.2v2M1253.5 401.8v6M1253.5 419.1v2M1253.5 431.2v2M1253.5 400.3v6M1254.5 399.5v2M1254.5 407.8v2M1254.5 390.8v6M1254.5 390.6v3M1255.5 417.3v2M1255.5 397.5v2M1255.5 412.7v4M1256.5 398v6M1256.5 398.8v2M1256.5 416v6M1256.5 406.2v6M1257.5 409.9v4M1257.5 393.4v3M1257.5 422.2v3M1257.5 391.5v2M1258.5 409.1v3M1258.5 408v6M1258.5 408.9v2M1259.5 392.3v2M1259.5 417.8v6M1260.5 394.8v2M1260.5 418.3v2M1260.5 408.1v2M1260.5 422.7v3M1260.5 392.4v2M1261.5 422.8v6M1261.5 409.2v4M1261.5 401.8v3M1261.5 406.4v4M1261.5 408.6v2M1261.5 409.7v6M1262.5 405.3v3M1262.5 406.9v2M1262.5 419.7v2M1262.5 390.1v2M1262.5 399.8v4M1263.5 417.3v2M1263.5 404.6v3M1264.5 412.6v4M1264.5 425.1v4M1264.5 394.7v2M1265.5 394.2v2M1265.5 394.5v3M1265.5 416.3v3M1265.5 416.6v6M1266.5 414.5v3M1266.5 400.4v6M1266.5 398.9v2M1266.5 426.4v3M1266.5 406.6v2M1267.5 413.5v3M1267.5 408.4v4M1267.5 411.6v2M1268.5 403.1v4M1268.5 439.5v6M1268.5 416.1v4M1268.5 430.3v3M1268.5 408.3v6M1269.5 421.5v2M1269.5 414.7v3M1269.5 394.4v2M1269.5 403.5v2M1269.5 391.1v2M1269.5 444.2v3M1270.5 415.4v4M1270.5 415.9v4M1270.5 396.8v2M1270.5 422.7v4M1271.5 411.1v2M1271.5 417.3v6M1272.5 395.7v2M1272.5 391.5v4M1272.5 407.9v6M1273.5 421.8v2M1273.5 397.2v6M1273.5 410.5v4M1273.5 412v2M1274.5 396.8v2M1274.5 415.5v3M1274.5 425.2v2M1275.5 410.3v4M1275.5 412.4v3M1275.5 407.2v4M1275.5 413.6v4M1275.5 401.9v2M1276.5 396.8v2M1276.5 416v2M1276.5 420.5v6M1276.5 394.4v2M1277.5 412.7v2M1277.5 424.9v3M1277.5 412.3v6M1277.5 402v4M1278.5 406.2v2M1278.5 403.4v4M1278.5 428.3v2M1278.5 390.3v4M1279.5 408.4v4M1279.5 440.8v4M1279.5 414.9v6M1279.5 396.2v4M1279.5 418.8v3M1279.5 394.5v2M1280.5 415v3M1280.5 401v3M1280.5 398.8v2M1280.5 395.4v3M1280.5 430.3v2M1280.5 408.4v6M1281.5 408.4v6M1281.5 435.6v6M1281.5 389.7v6M1282.5 411.4v3M1282.5 397.1v4M1282.5 408.8v6M1282.5 393.9v6M1283.5 406.5v6M1283.5 417.3v4M1283.5 407.4v6M1283.5 414.1v3M1283.5 416.8v3M1283.5 395.7v3M1284.5 399.8v6M1284.5 406.7v6M1285.5 403.4v6M1285.5 418.2v6M1285.5 413.1v3M1286.5 413.7v4M1286.5 410v3M1286.5 418.5v4M1286.5 406.8v2M1287.5 409.9v6M1287.5 411.4v2M1287.5 424.7v3M1287.5 402.9v4M1288.5 403.6v6M1288.5 409.7v3M1289.5 432.8v6M1289.5 395.7v4M1289.5 400.8v3M1289.5 401.5v3M1290.5 392v3M1290.5 397.7v4M1290.5 397.2v2M1290.5 391.6v6M1291.5 404v2M1291.5 420.2v4M1291.5 405.4v2M1292.5 401.6v6M1292.5 396.3v4M1292.5 397.4v2M1292.5 402.7v6M1292.5 414.8v2M1292.5 414.6v3M1293.5 409.4v6M1293.5 407.4v4M1293.5 404.8v2M1293.5 402v3M1294.5 399.8v3M1294.5 413.9v6M1294.5 422.4v4M1295.5 395v3M1295.5 427.5v3M1295.5 402.2v4M1295.5 424.7v3M1295.5 413.1v6M1296.5 425.8v3M1296.5 409.2v4M1296.5 403.9v2M1296.5 409.8v6M1297.5 401.9v3M1297.5 419.4v6M1297.5 404.7v2M1297.5 396.3v6M1298.5 411.1v3M1298.5 398.5v3M1298.5 406.4v4M1298.5 395.7v3M1298.5 409.8v6M1298.5 410.8v3M1298.5 405.4v2M1299.5 406.6v3M1299.5 415.6v4M1299.5 407.8v3M1299.5 423v3M1299.5 426.3v3M1299.5 418.3v3M1300.5 396.9v6M1300.5 413.2v6M1300.5 398.3v6M1301.5 410.3v4M1301.5 405.5v2M1301.5 420.6v3M1301.5 401.6v4M1301.5 400v6M1302.5 395.6v6M1302.5 409.7v3M1302.5 419.4v2M1302.5 393.5v4M1302.5 423.9v4M1303.5 437v4M1303.5 394v4M1303.5 429.8v2M1303.5 412.2v4M1303.5 400.2v3M1304.5 395.8v6M1304.5 414.2v6M1305.5 404.2v6M1305.5 393.6v3M1305.5 399.5v2M1305.5 391.8v6M1306.5 391.1v6M1306.5 403v3M1306.5 410.1v3M1306.5 407.1v3M1307.5 402.8v2M1307.5 425v4M1307.5 423.9v3M1307.5 398.6v3M1307.5 397.1v2M1308.5 403.4v6M1308.5 404.9v6M1308.5 423.2v6M1308.5 403.5v3M1309.5 400.2v3M1309.5 424v4M1309.5 394.4v3M1309.5 405.7v3M1309.5 409.6v3M1310.5 408.2v6M1310.5 403.2v6M1310.5 402.6v4M1310.5 414.5v3M1311.5 412v6M1311.5 390.3v2M1311.5 407.8v4M1312.5 403.8v4M1312.5 402.5v4M1312.5 399.3v2M1312.5 396v3M1312.5 402.1v3M1313.5 407.3v6M1313.5 408.4v4M1313.5 407.2v4M1313.5 422.2v4M1313.5 422.1v2M1313.5 398.2v4M1314.5 416.6v3M1314.5 402.9v6M1314.5 394.9v4M1314.5 427v6M1315.5 398.8v2M1315.5 396.1v6M1315.5 418.1v4M1315.5 403v4M1316.5 398.9v2M1316.5 404.8v6M1316.5 404.8v2M1316.5 408.9v4M1317.5 401.5v3M1317.5 405.1v4M1317.5 400.6v2M1318.5 401.1v4M1318.5 400.6v2M1318.5 423.7v4M1319.5 398.3v3M1319.5 403.5v4M1319.5 418v3M1320.5 405v3M1320.5 406.1v4M1320.5 424.4v4M1320.5 402.9v2M1320.5 399.5v2M1320.5 404.8v3M1321.5 395.9v3M1321.5 404.6v6M1321.5 408.8v6M1321.5 411.3v3M1321.5 402.7v3M1322.5 416.2v4M1322.5 397.3v2M1322.5 402v2M1322.5 411.8v2M1322.5 405.6v3M1322.5 391.7v4M1323.5 420.9v2M1323.5 404.7v6M1323.5 426.3v4M1323.5 402.7v6M1324.5 408.5v2M1324.5 419.4v2M1325.5 402.7v2M1325.5 412.8v3M1325.5 410.5v6M1325.5 394.5v4M1326.5 398.2v3M1326.5 406.7v2M1326.5 408.1v4M1327.5 413v4M1327.5 421v2M1327.5 408.8v4M1327.5 422.8v6M1328.5 403.9v2M1328.5 405.8v2M1328.5 406.8v2M1329.5 388.3v3M1329.5 404.9v6M1329.5 420.8v2M1329.5 404.3v3M1330.5 409.2v2M1330.5 401.2v6M1330.5 411.9v3M1330.5 405.8v2M1331.5 408.1v2M1331.5 403.8v2M1331.5 434.3v6M1331.5 391.7v4M1331.5 419.5v6M1332.5 415v4M1333.5 405.9v2M1333.5 401v3M1333.5 413.4v2M1333.5 415.7v3M1333.5 396.2v4M1334.5 429.4v6M1334.5 399.1v4M1334.5 427.5v3M1335.5 409.7v3M1335.5 402v4M1335.5 394.3v2M1335.5 401.6v4M1335.5 399.2v2M1335.5 394.7v2M1336.5 401.6v4M1336.5 408.4v2M1336.5 425.7v4M1336.5 404.9v2M1337.5 407.1v2M1337.5 408.3v4M1337.5 419.2v6M1337.5 401.9v2M1337.5 394v6M1337.5 399.6v2M1338.5 411.6v3M1338.5 397.3v3M1338.5 405.9v4M1338.5 394.6v4M1338.5 406.3v2M1339.5 416.1v4M1339.5 414.3v4M1339.5 400.3v2M1339.5 401.7v3M1340.5 392.3v6M1340.5 400.2v3M1340.5 406.4v6M1341.5 395.2v3M1341.5 418.2v6M1341.5 398.7v3M1341.5 393.9v6M1342.5 410.4v4M1342.5 395v4M1342.5 423.5v4M1343.5 396.4v6M1343.5 402.5v2M1343.5 425.3v2M1344.5 410.6v4M1344.5 440.4v2M1344.5 403.2v3M1344.5 410.5v6M1344.5 394.9v6M1345.5 410.6v4M1345.5 403.6v2M1345.5 414.1v2M1345.5 410.4v6M1346.5 399.2v2M1346.5 414.8v6M1346.5 419.8v4M1346.5 394.4v4M1347.5 411.7v4M1347.5 397.5v2M1347.5 392.5v2M1347.5 410.2v3M1347.5 419.4v4M1347.5 395.5v4M1348.5 412.4v6M1348.5 390v2M1348.5 410.6v4M1349.5 397.2v4M1349.5 418.3v2M1349.5 398v4M1350.5 417.3v2M1350.5 424.9v2M1350.5 395.2v3M1350.5 413.8v2M1350.5 422.6v2M1350.5 408.1v3M1351.5 409.9v2M1351.5 392.7v2M1351.5 407.5v2M1351.5 426v4M1352.5 412.7v6M1352.5 408.1v3M1352.5 405.9v4M1352.5 402.5v4M1353.5 392.4v2M1353.5 414.9v3M1353.5 390.3v3M1353.5 405v6M1353.5 421.3v3M1354.5 410.2v6M1354.5 408.2v4M1354.5 418.4v6M1354.5 393.7v4M1355.5 405.4v6M1355.5 426.4v6M1355.5 399.7v2M1356.5 390.2v2M1356.5 409.1v2M1356.5 401.6v2M1356.5 403.7v3M1357.5 396.5v2M1357.5 408.6v6M1357.5 404.4v6M1357.5 412.6v2M1357.5 422.9v3M1358.5 408.7v3M1358.5 404.5v2M1358.5 410.9v2M1358.5 397.1v2M1359.5 426.3v2M1359.5 393.9v2M1359.5 415.5v2M1359.5 405.5v4M1359.5 403.6v2M1359.5 405.5v2M1360.5 413.3v3M1360.5 395v4M1360.5 403.8v4M1360.5 407.8v6M1361.5 408.1v4M1361.5 416.4v6M1361.5 410.8v4M1361.5 402.6v2M1362.5 425.2v4M1362.5 426.1v4M1362.5 392.8v4M1362.5 414.5v4M1363.5 397.4v6M1363.5 396v3M1364.5 421v2M1364.5 391.4v4M1364.5 416.9v4M1364.5 410.6v3M1364.5 408.1v2M1364.5 407.3v6M1365.5 417.5v4M1365.5 419.5v3M1365.5 403.6v6M1365.5 423v4M1365.5 406.7v4M1365.5 407.9v2M1366.5 416.7v3M1366.5 421.8v3M1366.5 421.5v3M1366.5 419v4M1366.5 422.1v4M1367.5 410.1v4" stroke="#000004" stroke-width="1" fill="none" opacity="0.8"/>
<path d="M879.5 377v2M880.5 382.1v2M881.5 379.2v4M882.5 371.6v3M885.5 379.5v3M886.5 378.7v3M887.5 367.9v4M892.5 376.3v2M893.5 382.9v4M894.5 369.3v2M897.5 369.5v2M898.5 371.9v2M901.5 379.8v2M903.5 371.9v3M905.5 375.8v2M907.5 382.4v4M908.5 368.4v4M909.5 373.2v4M911.5 380.4v3M912.5 368.5v2M915.5 372.9v4M917.5 371.2v2M918.5 382.8v2M919.5 371.5v4M921.5 375.8v4M924.5 369.3v2M927.5 377.8v4M928.5 372.9v3M937.5 381.9v2M938.5 375.3v4M945.5 381v2M946.5 377.6v2M947.5 382.9v2M948.5 373.8v3M950.5 374.9v2M951.5 376.9v3M952.5 379.4v4M954.5 378.3v3M957.5 372.6v3M958.5 380.7v4M962.5 370.7v3M965.5 383.7v4M967.5 381.8v3M970.5 373.8v4M971.5 380.5v2M974.5 371.9v3M975.5 379.2v2M976.5 373.2v3M980.5 382.5v4M981.5 379.5v4M984.5 377.7v4M985.5 383.4v2M986.5 371v4M989.5 385.2v2M990.5 380.4v2M991.5 375.6v4M993.5 373.8v4M994.5 383.2v4M1000.5 372.7v2M1001.5 379.2v3M1002.5 385.1v2M1004.5 379.8v4M1007.5 378.7v4M1008.5 373.1v3M1009.5 370.3v4M1011.5 374.3v2M1012.5 376.9v2M1013.5 370.7v3M1016.5 370v4M1021.5 383.4v4M1022.5 376.6v4M1023.5 370.1v3M1024.5 384.6v3M1028.5 381.7v2M1029.5 382.8v3M1032.5 379.1v3M1033.5 384.9v3M1034.5 382.8v4M1037.5 372.2v4M1038.5 375v2M1039.5 372v2M1041.5 369.9v3M1044.5 380v3M1046.5 385.3v3M1048.5 381.5v3M1051.5 377.1v3M1055.5 377.5v4M1058.5 376.3v2M1060.5 379v3M1065.5 382.6v3M1067.5 376.1v3M1069.5 375.6v2M1072.5 371v4M1074.5 383v2M1075.5 372.8v4M1076.5 381.9v2M1077.5 377.4v2M1091.5 380.9v3M1096.5 382.3v4M1097.5 377.7v4M1098.5 375.8v2M1099.5 377.1v3M1101.5 374.2v4M1106.5 384.7v3M1107.5 373.4v3M1108.5 377.7v3M1110.5 371.5v3M1112.5 378.5v2M1114.5 379.3v3M1117.5 381.2v3M1119.5 378.7v2M1120.5 373.3v2M1121.5 372.3v3M1123.5 373.7v4M1124.5 383.8v3M1125.5 374.5v4M1126.5 380v4M1128.5 382.8v2M1130.5 383.7v2M1131.5 381.8v4M1133.5 375v2M1137.5 376.7v4M1138.5 381.5v3M1139.5 378.9v4M1140.5 378.1v2M1141.5 377.8v2M1142.5 378.9v3M1144.5 384.1v4M1145.5 374.1v4M1146.5 376.2v3M1147.5 373.6v4M1152.5 383.9v4M1153.5 383.3v4M1154.5 384.5v2M1155.5 373.7v3M1156.5 370.9v2M1157.5 384.9v3M1158.5 386.7v4M1160.5 380.2v2M1161.5 386v2M1162.5 377.6v3M1165.5 379.2v2M1166.5 381.2v2M1167.5 379.7v4M1168.5 377.9v2M1169.5 378v2M1171.5 382.6v2M1175.5 378.8v2M1177.5 381.6v4M1182.5 377.4v3M1184.5 385.4v2M1185.5 372.5v3M1187.5 372.9v3M1188.5 379.9v4M1189.5 378.7v2M1190.5 376.1v3M1191.5 380.5v3M1194.5 382.7v4M1197.5 380.3v4M1198.5 377.4v3M1199.5 377.3v2M1200.5 383.2v2M1203.5 384.3v2M1204.5 376.8v4M1209.5 380.3v2M1210.5 373.1v3M1211.5 374.8v3M1214.5 385.5v4M1217.5 373v2M1218.5 377.5v2M1219.5 375.2v4M1220.5 387.3v2M1224.5 373.2v2M1225.5 380.2v2M1227.5 381.6v2M1230.5 382.9v2M1231.5 383.4v2M1232.5 374.3v3M1233.5 387.1v2M1234.5 377.6v4M1235.5 383.1v4M1237.5 386.1v2M1238.5 384.5v3M1239.5 388.2v2M1241.5 375.4v3M1242.5 381.6v2M1244.5 377.2v2M1246.5 384.6v3M1248.5 374.7v2M1263.5 380v2M1264.5 386.8v3M1265.5 385.3v3M1267.5 383.8v4M1268.5 379.8v3M1269.5 377.9v2M1276.5 379.5v3M1277.5 385.3v3M1279.5 390.8v2M1280.5 381.2v2M1281.5 385.2v4M1285.5 384.6v2M1286.5 381.3v3M1294.5 384.4v3M1297.5 384.9v3M1302.5 389.7v2M1306.5 388.1v3M1310.5 389.4v2M1311.5 375.6v4M1314.5 382.9v3M1315.5 385.9v4M1316.5 387.6v2M1319.5 387.5v2M1320.5 378.1v3M1321.5 379v3M1323.5 385.2v2M1324.5 381v2M1325.5 378.1v4M1326.5 374.9v2M1327.5 387.8v2M1328.5 383v3M1329.5 389.5v4M1331.5 386.8v2M1334.5 380.3v3M1335.5 381.7v4M1336.5 388.1v2M1338.5 378.7v4M1340.5 379.6v3M1341.5 382v3M1342.5 382.7v4M1343.5 389.5v2M1344.5 379.9v3M1346.5 387.6v4M1347.5 381v3M1350.5 376.1v3M1352.5 384v4M1353.5 388.2v3M1354.5 376.3v3M1355.5 385.5v3M1357.5 382.8v2M1358.5 390.6v3M1359.5 380v3M1361.5 382.1v4M1364.5 378.1v2M1366.5 390v2" stroke="#1a6cf0" stroke-width="1" fill="none" opacity="0.5"/>
<path d="M879.5 406.2v3M880.5 388.3v3M880.5 396.2v1.5M880.5 393.5v3M881.5 394.2v3M881.5 395.4v3M881.5 392.4v3M882.5 408.8v3M882.5 386.8v3M883.5 400.7v3M883.5 398.2v3M884.5 399.7v1.5M884.5 396.4v3M885.5 387.4v1.5M885.5 418.4v1.5M886.5 405.4v2M886.5 412.5v2M886.5 416.3v3M887.5 391.6v3M887.5 394v2M887.5 400.9v2M888.5 389.5v3M888.5 394v1.5M889.5 387.1v2M889.5 394v2M890.5 389.9v3M890.5 396.2v1.5M891.5 389.8v2M891.5 401.5v3M891.5 410.9v3M891.5 390.7v2M892.5 399.5v3M892.5 414v2M892.5 406.5v1.5M893.5 405.6v3M893.5 392.8v1.5M894.5 398.3v2M894.5 387.6v2M895.5 402.1v3M895.5 404.2v1.5M895.5 404.4v3M896.5 394.4v1.5M896.5 389.4v3M896.5 392.7v3M897.5 415.4v1.5M897.5 410.8v1.5M897.5 414.2v1.5M898.5 395.9v3M898.5 394.3v3M898.5 394.2v2M900.5 393.4v2M901.5 402.1v2M901.5 389.1v1.5M902.5 398.7v2M903.5 401.6v1.5M903.5 388.3v2M904.5 391.9v2M904.5 418.8v2M905.5 398.1v3M905.5 401v1.5M905.5 400.6v3M907.5 395.3v1.5M907.5 393.9v3M907.5 390.1v1.5M908.5 387.9v3M909.5 409.9v2M909.5 397.2v2M909.5 390.9v3M910.5 393.4v2M910.5 400.1v3M911.5 388v2M911.5 393.6v1.5M912.5 398.4v3M912.5 409v1.5M913.5 399.5v3M913.5 403.5v2M913.5 395.4v2M914.5 403.2v3M914.5 391.3v3M914.5 389v3M914.5 388.3v2M915.5 399.5v1.5M916.5 411.1v3M916.5 400.1v2M916.5 409.8v3M917.5 402.7v2M917.5 409.6v3M918.5 392.7v2M918.5 415.8v3M919.5 401.2v3M919.5 402.5v1.5M919.5 402.8v1.5M920.5 407.5v1.5M921.5 408.9v3M922.5 390.5v1.5M922.5 411.4v2M923.5 407.1v2M924.5 405.3v1.5M925.5 407.3v1.5M926.5 410.5v3M926.5 405.5v2M927.5 397.1v1.5M927.5 391.2v1.5M928.5 395.4v1.5M929.5 388.8v1.5M929.5 390.3v3M930.5 406.8v2M930.5 394.7v2M930.5 399.3v3M931.5 400.4v3M931.5 399.8v1.5M931.5 390.2v2M932.5 391.5v3M933.5 416.8v2M933.5 393.8v1.5M933.5 391.4v2M934.5 405.2v2M934.5 393v2M934.5 391.6v1.5M935.5 393.7v3M935.5 405.7v3M936.5 391.8v3M936.5 403.7v3M938.5 412.1v2M939.5 394.8v1.5M939.5 399.1v2M939.5 418.6v1.5M940.5 391.2v2M940.5 416.7v1.5M940.5 403.3v3M941.5 412.2v3M942.5 391.6v3M942.5 395.4v3M942.5 411.5v2M943.5 396.1v3M944.5 390.4v3M944.5 396.9v3M944.5 421.8v3M945.5 397.8v1.5M945.5 399.6v1.5M946.5 399.1v1.5M947.5 392.8v1.5M947.5 406.7v2M947.5 403.2v1.5M948.5 400.6v1.5M948.5 389.4v2M948.5 394.2v2M949.5 403.3v2M949.5 401v2M950.5 389v3M951.5 399v1.5M951.5 412.9v2M952.5 403.1v3M952.5 401v1.5M952.5 390.2v3M953.5 393.6v2M953.5 409v3M954.5 396.4v2M955.5 426v3M955.5 410.8v1.5M956.5 395.9v1.5M956.5 404v2M957.5 404.3v3M957.5 390.6v2M957.5 394v1.5M958.5 391.1v3M959.5 390.5v2M959.5 392.1v1.5M960.5 394.5v3M961.5 393.9v3M961.5 400.6v3M962.5 390.1v3M963.5 405.2v1.5M963.5 391.3v2M963.5 398.3v1.5M964.5 397.2v2M964.5 395.9v1.5M964.5 397.8v1.5M965.5 405.9v2M965.5 390.1v2M965.5 389.5v3M966.5 421.2v1.5M966.5 404v1.5M968.5 392.6v2M969.5 395v2M969.5 408.2v1.5M969.5 409.8v2M970.5 392.2v1.5M970.5 401.7v3M970.5 402v3M971.5 390.9v1.5M971.5 399.4v3M972.5 431.6v2M972.5 409.5v1.5M972.5 401.4v3M973.5 396.6v1.5M974.5 406.1v3M977.5 416v3M977.5 391.5v1.5M978.5 398.7v2M979.5 405.2v1.5M980.5 397.9v1.5M980.5 401.4v2M981.5 401.6v1.5M982.5 401.8v2M983.5 429.2v3M983.5 390.2v1.5M984.5 403.7v3M984.5 394.1v1.5M985.5 403.1v1.5M985.5 408.5v2M986.5 408.2v2M986.5 402.7v2M987.5 401.2v1.5M987.5 405.3v1.5M987.5 404.3v2M988.5 390.2v1.5M988.5 393.1v1.5M988.5 410.1v2M989.5 402.4v3M989.5 396.4v1.5M990.5 389.8v2M991.5 396.6v1.5M992.5 409.8v1.5M992.5 408.3v3M992.5 400.1v1.5M993.5 395v3M993.5 397.4v1.5M994.5 419.8v2M994.5 392.1v1.5M995.5 400v3M995.5 397.8v3M995.5 391.3v2M996.5 408.2v3M996.5 393.9v3M996.5 395.8v2M997.5 413.9v3M998.5 403.1v2M998.5 399.5v2M999.5 417.7v1.5M999.5 402.4v1.5M999.5 402.3v3M1000.5 400.4v1.5M1000.5 405.9v1.5M1000.5 389.9v3M1001.5 399.5v3M1001.5 420.1v1.5M1002.5 401.7v1.5M1002.5 393.7v2M1005.5 403.8v1.5M1005.5 401.8v2M1005.5 407.3v1.5M1005.5 401.5v3M1006.5 390.4v3M1006.5 396.5v3M1007.5 392.8v1.5M1007.5 392v3M1008.5 394.5v3M1008.5 394v3M1008.5 394.1v3M1009.5 393.2v1.5M1009.5 398.6v3M1010.5 404.7v3M1010.5 398.9v2M1011.5 402.3v1.5M1012.5 401.4v1.5M1012.5 398.4v2M1013.5 408.6v3M1013.5 409.5v1.5M1014.5 392.9v3M1014.5 408.2v2M1015.5 409.6v1.5M1015.5 435.6v2M1016.5 402.8v1.5M1017.5 396.9v3M1017.5 391.9v1.5M1018.5 409.2v2M1018.5 403.7v2M1019.5 418.6v2M1020.5 404v3M1020.5 399.8v2M1020.5 415.2v3M1021.5 411.9v3M1021.5 395.7v3M1022.5 401.9v1.5M1022.5 392.8v2M1023.5 420.3v1.5M1023.5 404.1v2M1023.5 393.4v3M1024.5 401.9v3M1024.5 389.8v1.5M1025.5 410.2v2M1026.5 392.1v2M1026.5 395.7v1.5M1026.5 411.3v2M1027.5 403.1v2M1028.5 399.7v3M1028.5 409v3M1028.5 404.1v2M1029.5 393.8v2M1029.5 391.4v2M1030.5 389.8v3M1030.5 391.8v2M1031.5 402.9v3M1031.5 403.5v3M1031.5 402.5v1.5M1032.5 401.8v3M1033.5 399.1v3M1033.5 393v2M1034.5 408v3M1034.5 415.7v2M1034.5 402.4v3M1035.5 399.9v3M1035.5 402.4v1.5M1036.5 396.5v2M1037.5 392.4v3M1037.5 402.4v3M1039.5 402.8v3M1039.5 406.9v1.5M1040.5 400.6v3M1041.5 396.9v3M1041.5 397v1.5M1041.5 395.8v3M1042.5 390.9v3M1042.5 401.9v2M1042.5 410.3v1.5M1042.5 410.2v3M1043.5 391.6v1.5M1044.5 410.4v1.5M1044.5 392.5v2M1044.5 390.6v3M1044.5 392.6v1.5M1045.5 396.3v2M1045.5 405.9v2M1046.5 392v2M1046.5 408.3v3M1046.5 403.6v3M1047.5 391.7v2M1047.5 402.6v3M1048.5 403.2v2M1048.5 390.8v1.5M1048.5 396.3v2M1049.5 389.9v1.5M1049.5 402.2v3M1049.5 394.9v2M1050.5 403.7v2M1050.5 407.9v2M1051.5 396.5v3M1052.5 409.4v1.5M1053.5 395.1v3M1053.5 396.1v1.5M1054.5 397.3v2M1054.5 394.7v1.5M1055.5 408.2v1.5M1055.5 406.3v2M1055.5 400v1.5M1056.5 402.7v3M1057.5 397.5v2M1058.5 405.2v3M1058.5 390.6v3M1059.5 395.4v2M1059.5 390.4v3M1059.5 395.7v2M1060.5 403.3v1.5M1061.5 399.7v2M1062.5 402.5v1.5M1062.5 411.7v3M1062.5 391.9v2M1063.5 405.8v1.5M1064.5 392.4v3M1064.5 421.3v3M1064.5 413.6v2M1065.5 414.6v3M1065.5 394.2v1.5M1065.5 407.7v1.5M1066.5 424.1v2M1066.5 408.1v3M1067.5 390.1v1.5M1067.5 413.7v1.5M1068.5 398.3v3M1069.5 428v1.5M1069.5 393.5v1.5M1069.5 426.1v2M1070.5 390.8v3M1071.5 397.3v2M1071.5 406.1v3M1072.5 401.4v2M1072.5 400.4v3M1074.5 435.6v3M1074.5 408.3v2M1075.5 391.4v2M1075.5 414.2v3M1075.5 398.7v1.5M1076.5 404.8v3M1076.5 408.8v2M1076.5 392v2M1077.5 403.1v3M1077.5 399.2v3M1077.5 408.9v2M1078.5 434.6v1.5M1078.5 396.3v1.5M1078.5 401.5v1.5M1089.5 402.7v2M1089.5 402.5v3M1089.5 399.1v3M1090.5 415.7v1.5M1090.5 393.9v2M1092.5 401.1v3M1092.5 398.1v2M1093.5 398.4v1.5M1093.5 400.2v2M1094.5 408.9v2M1094.5 393.1v2M1095.5 411.8v1.5M1095.5 404.8v2M1095.5 391.2v3M1096.5 394.8v3M1096.5 400v3M1097.5 399.6v2M1097.5 413.9v1.5M1097.5 410v3M1098.5 396.6v2M1098.5 407v1.5M1099.5 403.9v1.5M1099.5 399.8v1.5M1099.5 414.6v1.5M1100.5 401.8v3M1101.5 402.8v1.5M1101.5 392.9v1.5M1102.5 392.2v3M1102.5 390.6v2M1102.5 390.6v1.5M1103.5 398.9v2M1103.5 398.9v3M1104.5 403.2v3M1104.5 441v1.5M1105.5 404.7v3M1106.5 402.7v1.5M1107.5 390.7v3M1107.5 405.5v1.5M1107.5 401.6v3M1108.5 408.4v2M1108.5 401.1v2M1108.5 406.1v3M1109.5 395.9v2M1110.5 391.8v2M1110.5 397.6v1.5M1110.5 401.6v1.5M1111.5 400.9v1.5M1111.5 391.1v2M1111.5 399.8v1.5M1111.5 402.7v1.5M1112.5 420.4v1.5M1113.5 391.8v2M1114.5 417v1.5M1114.5 396.2v3M1115.5 391.8v1.5M1115.5 429.2v1.5M1115.5 391.2v2M1116.5 392.2v1.5M1117.5 402.4v1.5M1118.5 406.3v2M1118.5 409v2M1120.5 405.1v3M1120.5 394v3M1120.5 391.3v3M1121.5 393.4v3M1121.5 391.6v3M1121.5 397.2v3M1124.5 408.3v3M1124.5 431v1.5M1126.5 397.6v2M1126.5 402.9v1.5M1127.5 408.9v2M1127.5 401.4v1.5M1127.5 414v1.5M1128.5 390.4v1.5M1128.5 399v2M1129.5 406.5v1.5M1129.5 393v2M1130.5 394.2v3M1130.5 415.5v1.5M1130.5 403.8v3M1131.5 401.4v2M1131.5 412.4v1.5M1131.5 402.6v3M1132.5 392.1v1.5M1132.5 391.8v2M1133.5 406.9v1.5M1134.5 421.3v3M1134.5 390.7v3M1134.5 425.9v1.5M1134.5 408.9v2M1135.5 404.3v1.5M1135.5 395v1.5M1135.5 405.2v3M1136.5 402.1v1.5M1136.5 418.3v1.5M1136.5 393.8v3M1136.5 390.4v2M1137.5 402.5v3M1137.5 394.5v2M1137.5 396.1v2M1138.5 395.9v2M1138.5 406.7v3M1138.5 390.7v2M1139.5 399.2v1.5M1139.5 404.5v3M1140.5 395.3v1.5M1141.5 405.4v1.5M1141.5 392v2M1142.5 418.8v3M1142.5 408.4v1.5M1142.5 400.3v3M1143.5 391.2v3M1143.5 391.2v3M1144.5 401.2v3M1145.5 391.4v1.5M1145.5 411.6v3M1145.5 406.4v1.5M1146.5 397.5v3M1147.5 427.3v3M1147.5 404.7v1.5M1148.5 405.4v1.5M1148.5 396.1v2M1148.5 422.1v3M1149.5 396.7v3M1149.5 403.6v1.5M1150.5 398.4v2M1150.5 412.1v1.5M1151.5 395.6v1.5M1151.5 408.7v2M1152.5 421.6v2M1152.5 401.8v3M1152.5 412.4v3M1152.5 393.3v1.5M1153.5 424.1v1.5M1153.5 395.5v3M1153.5 413.6v3M1154.5 398.3v1.5M1155.5 399.3v3M1155.5 394.1v3M1155.5 400.2v2M1156.5 420.3v1.5M1157.5 394.1v3M1157.5 422.4v1.5M1158.5 414.4v1.5M1158.5 394.5v3M1158.5 398.1v2M1159.5 396.4v2M1159.5 400.9v2M1159.5 396.7v1.5M1160.5 404.3v3M1160.5 409v2M1160.5 401.8v1.5M1161.5 395.7v1.5M1161.5 402.3v1.5M1161.5 393.1v2M1163.5 395.5v1.5M1163.5 392.2v3M1164.5 396.1v1.5M1164.5 392.5v3M1165.5 394.3v2M1165.5 403v2M1165.5 391.1v1.5M1166.5 404.5v3M1167.5 396.8v3M1167.5 427.7v3M1167.5 393.1v1.5M1168.5 401.2v2M1168.5 397v2M1169.5 396.8v2M1169.5 408.5v1.5M1169.5 392.8v1.5M1169.5 431.1v3M1170.5 401.2v2M1170.5 404.8v1.5M1171.5 398.2v3M1171.5 406v2M1172.5 417.7v2M1172.5 394.6v2M1172.5 395.4v3M1173.5 400.4v1.5M1173.5 392.1v2M1174.5 416.9v1.5M1174.5 416.2v3M1174.5 410.5v3M1175.5 411.4v3M1175.5 419.7v2M1176.5 400.3v1.5M1177.5 402.4v2M1177.5 401.1v3M1177.5 394v2M1178.5 395.1v3M1178.5 406.1v3M1178.5 409.9v3M1179.5 421.8v3M1179.5 421.1v2M1179.5 393.1v1.5M1180.5 415.9v1.5M1181.5 396.7v1.5M1182.5 412.5v1.5M1182.5 411.4v1.5M1183.5 407.4v3M1183.5 414.6v2M1183.5 397.3v3M1184.5 401.8v3M1184.5 396.3v1.5M1184.5 404.8v3M1185.5 398.2v1.5M1185.5 391.9v2M1186.5 394.6v3M1186.5 402.8v3M1187.5 400.5v3M1187.5 397.2v2M1187.5 404.4v2M1188.5 398.6v1.5M1189.5 405.3v3M1189.5 429.2v3M1190.5 400.8v3M1190.5 406.9v2M1191.5 393.7v1.5M1191.5 392.7v3M1191.5 406.9v3M1192.5 402.2v3M1193.5 397.1v3M1194.5 416v2M1195.5 397v2M1195.5 393.9v3M1196.5 410.1v3M1196.5 404.2v1.5M1197.5 395.9v3M1198.5 405.7v2M1198.5 404.6v3M1198.5 426.7v2M1198.5 406v1.5M1199.5 402v3M1199.5 404.5v1.5M1200.5 402.2v2M1200.5 423.4v1.5M1200.5 398.8v3M1201.5 397.6v1.5M1202.5 394.2v1.5M1202.5 400.4v2M1203.5 403.8v1.5M1203.5 415.5v2M1203.5 395.8v3M1204.5 405v3M1204.5 398.1v3M1205.5 399v2M1205.5 395.9v2M1206.5 403.1v2M1206.5 397v1.5M1206.5 425.6v1.5M1207.5 392.8v3M1207.5 398.1v2M1208.5 402.3v1.5M1209.5 393.7v2M1209.5 400.4v1.5M1209.5 402.1v2M1210.5 409v3M1210.5 406.2v3M1211.5 392.6v3M1212.5 405.3v3M1212.5 408.5v3M1213.5 402.3v1.5M1213.5 396.5v2M1214.5 398.2v3M1214.5 409.5v1.5M1215.5 415.1v2M1216.5 401.7v1.5M1216.5 402.3v1.5M1216.5 407.7v1.5M1217.5 420.1v3M1217.5 403.8v1.5M1218.5 419.7v2M1219.5 398.8v2M1220.5 401.1v3M1220.5 405.7v2M1222.5 401.1v3M1224.5 413.4v1.5M1224.5 414.4v1.5M1225.5 401.9v3M1225.5 404.2v2M1226.5 402.3v3M1226.5 396.8v3M1227.5 414.4v2M1227.5 409.9v2M1228.5 395.5v1.5M1229.5 421.8v1.5M1230.5 396.2v1.5M1230.5 412.5v3M1231.5 401.8v3M1231.5 403v1.5M1232.5 403.1v1.5M1232.5 415.3v1.5M1233.5 415.3v1.5M1234.5 415.5v3M1235.5 409.1v1.5M1235.5 410.5v2M1236.5 404.1v3M1238.5 415.9v3M1238.5 427.9v2M1239.5 412v1.5M1239.5 394.9v3M1240.5 409.6v2M1240.5 406.8v3M1241.5 435.4v3M1241.5 423.5v2M1242.5 395.4v2M1243.5 431.2v1.5M1243.5 400.5v3M1244.5 402.8v3M1244.5 395.3v1.5M1244.5 417.4v3M1245.5 394.8v3M1245.5 432.6v2M1246.5 423.8v3M1246.5 411v2M1247.5 405v3M1248.5 399.1v3M1250.5 411.8v2M1250.5 403.6v2M1251.5 404.9v1.5M1251.5 400.4v1.5M1251.5 420.2v1.5M1261.5 399.4v2M1261.5 409.5v1.5M1262.5 404v1.5M1264.5 395.8v3M1264.5 420.4v2M1265.5 400.4v2M1265.5 401.4v2M1265.5 416.3v2M1265.5 435.5v1.5M1266.5 408v3M1267.5 394.9v1.5M1268.5 405.7v1.5M1268.5 422.9v2M1268.5 417.6v2M1269.5 401.4v3M1270.5 403.7v1.5M1270.5 403.7v1.5M1271.5 399.8v1.5M1271.5 429.5v2M1271.5 395.2v2M1272.5 399.5v3M1272.5 402.9v2M1272.5 404.3v2M1273.5 396.5v3M1273.5 398.9v2M1275.5 419.1v2M1275.5 399.1v3M1275.5 398.6v3M1275.5 404.2v3M1276.5 403.8v3M1276.5 395.3v3M1277.5 418.3v1.5M1278.5 406.6v2M1279.5 406.7v2M1279.5 412.8v3M1279.5 403.3v3M1280.5 403.5v1.5M1281.5 405v2M1281.5 402v3M1281.5 406v1.5M1282.5 408.2v1.5M1282.5 419.4v1.5M1282.5 413.5v1.5M1283.5 415.6v1.5M1283.5 405.3v1.5M1283.5 411v2M1283.5 410.6v2M1284.5 399.8v1.5M1285.5 418.5v2M1285.5 423.2v3M1285.5 408.7v2M1285.5 411.6v3M1286.5 413.8v1.5M1286.5 402.1v3M1287.5 397.6v3M1288.5 402.1v2M1288.5 396.7v2M1288.5 404.8v2M1288.5 404.9v1.5M1289.5 406.8v1.5M1289.5 412.9v2M1289.5 407.4v1.5M1290.5 413.2v2M1290.5 399.2v3M1291.5 407.8v3M1292.5 403.6v3M1292.5 425.9v2M1292.5 415.8v3M1292.5 400.7v3M1293.5 398.1v3M1293.5 407.6v3M1294.5 401.3v3M1294.5 408.8v1.5M1297.5 420.8v3M1297.5 422.5v2M1297.5 421.7v2M1297.5 398.2v1.5M1298.5 412v1.5M1298.5 410.8v1.5M1299.5 402.9v2M1300.5 426.9v1.5M1301.5 399.7v1.5M1301.5 399.2v1.5M1302.5 416.9v2M1302.5 425.8v3M1303.5 399.8v3M1303.5 420.3v3M1304.5 410v2M1304.5 407.3v3M1305.5 401.2v3M1305.5 412.9v3M1306.5 398.9v3M1306.5 418.2v3M1307.5 408.8v1.5M1308.5 405.3v1.5M1308.5 412.2v1.5M1309.5 403.8v2M1309.5 398.1v3M1310.5 405v3M1311.5 406.7v3M1312.5 416v2M1312.5 403.5v2M1313.5 403.7v2M1313.5 418.2v2M1313.5 399.1v1.5M1314.5 408.3v1.5M1314.5 427.2v1.5M1315.5 405.3v1.5M1315.5 404.3v1.5M1315.5 411.1v2M1316.5 406.1v3M1317.5 401.2v2M1317.5 421.4v2M1318.5 409.1v3M1318.5 398.1v3M1319.5 402.6v3M1319.5 402.8v3M1319.5 398.5v1.5M1320.5 413.4v2M1320.5 411.9v2M1321.5 403.6v3M1321.5 397.9v1.5M1322.5 400.7v3M1322.5 412.9v3M1322.5 414.4v2M1323.5 429.2v3M1324.5 409.4v2M1324.5 401.2v1.5M1324.5 402v3M1325.5 398.1v3M1325.5 404.7v3M1326.5 403v2M1326.5 400.4v1.5M1327.5 422.9v1.5M1328.5 421v1.5M1328.5 406.2v2M1328.5 405.3v1.5M1329.5 422v1.5M1329.5 412.4v1.5M1330.5 404v3M1330.5 411.6v1.5M1331.5 408.9v3M1331.5 407.3v1.5M1331.5 406.7v3M1331.5 422.1v2M1332.5 398.3v2M1332.5 413.3v2M1333.5 408.4v3M1333.5 406.3v2M1333.5 414.7v1.5M1333.5 423.1v3M1334.5 417.2v1.5M1335.5 400.6v2M1336.5 400.2v3M1336.5 408.3v1.5M1337.5 406.7v2M1338.5 396.4v3M1338.5 425.2v1.5M1339.5 396.3v3M1340.5 426.3v1.5M1341.5 406.2v1.5M1342.5 411.1v3M1342.5 409.5v2M1342.5 423.6v2M1343.5 406.7v2M1343.5 415.6v2M1344.5 405.7v1.5M1344.5 415.3v1.5M1344.5 416v1.5M1345.5 400.2v3M1345.5 408.2v2M1345.5 412.9v2M1346.5 411.5v3M1346.5 403.7v2M1347.5 401v1.5M1347.5 401.1v3M1347.5 434.9v1.5M1348.5 410.8v3M1348.5 410.8v3M1348.5 409.6v2M1349.5 407.2v1.5M1349.5 399.1v1.5M1349.5 399.1v1.5M1350.5 417.8v2M1350.5 401.9v1.5M1350.5 413.9v1.5M1351.5 397.9v1.5M1353.5 423.7v2M1353.5 411.6v3M1355.5 398.1v1.5M1355.5 411.4v3M1356.5 416.1v2M1357.5 412.6v3M1357.5 403v2M1357.5 416.9v3M1357.5 400.9v3M1358.5 406.2v1.5M1358.5 401.2v3M1358.5 400.7v3M1359.5 406v2M1359.5 396.8v1.5M1359.5 402.7v1.5M1360.5 410.9v2M1361.5 397.6v2M1361.5 397v1.5M1362.5 399.7v1.5M1362.5 406.7v2M1363.5 402.8v3M1363.5 401.8v1.5M1364.5 415.8v1.5M1364.5 400.4v3M1365.5 398.1v2M1366.5 398.7v3M1367.5 422.1v2M1367.5 405.1v2" stroke="#0826b0" stroke-width="1" fill="none" opacity="0.8"/>
<path d="M884.5 428v2M886.5 414.8v1.5M888.5 432.4v2M890.5 422.7v1M893.5 428.4v1M895.5 428v1M900.5 431.9v1M903.5 420.4v1.5M904.5 451.8v2M908.5 423.2v1.5M909.5 424.3v1M910.5 426.5v1.5M917.5 417.6v2M921.5 416.7v1M923.5 430v1M924.5 447.4v1.5M927.5 424.8v1M932.5 423.1v2M946.5 436.3v2M950.5 432.5v2M954.5 417.1v1.5M956.5 423.5v2M957.5 422.1v2M961.5 428.9v1M964.5 434.3v2M968.5 424.2v2M974.5 416v1M977.5 422.8v1M981.5 434.9v2M984.5 428.4v1.5M985.5 432.4v2M988.5 420.1v1M990.5 429.3v1.5M992.5 431.2v1M994.5 425.9v1.5M997.5 422.3v2M1002.5 431.6v1.5M1003.5 429.4v1M1006.5 416.8v2M1007.5 417.3v1.5M1010.5 421.5v1.5M1013.5 432.8v1M1014.5 447.9v1M1017.5 429.8v1M1021.5 422.3v1M1023.5 430v1.5M1024.5 427v1.5M1027.5 423.2v2M1028.5 422.3v1M1029.5 419.9v1M1030.5 432.8v2M1031.5 440.5v2M1032.5 425.8v1.5M1038.5 430.5v1M1040.5 422v2M1041.5 437v2M1042.5 423.9v2M1044.5 419.8v1.5M1047.5 420.2v2M1049.5 424v1M1056.5 421.5v2M1057.5 417.9v2M1060.5 436.7v2M1061.5 423.8v2M1063.5 416v1M1064.5 416.5v2M1069.5 450.2v1.5M1070.5 420.6v1M1071.5 422.1v1M1072.5 421.6v1.5M1073.5 431.5v1.5M1078.5 418.1v1M1082.5 420.2v1.5M1086.5 421.2v1.5M1087.5 430.7v1M1088.5 423.9v1M1091.5 429.9v1.5M1093.5 419.7v1.5M1095.5 441.8v1.5M1096.5 418.8v2M1098.5 419.5v1.5M1100.5 431.7v1.5M1101.5 421.8v2M1102.5 437.8v1.5M1103.5 433.5v1M1111.5 428.6v1M1114.5 416.9v2M1117.5 418v1.5M1123.5 420v1.5M1126.5 428.9v2M1127.5 449.3v2M1129.5 420.8v1.5M1133.5 420.5v1M1134.5 432.1v2M1135.5 447v1M1141.5 418.4v1M1145.5 447.7v1.5M1149.5 434.7v2M1151.5 417v1M1154.5 426.7v1.5M1155.5 435.7v1.5M1160.5 437.6v2M1162.5 426.9v2M1164.5 434.2v1.5M1167.5 443.5v1M1168.5 433.7v1.5M1169.5 425.9v1M1171.5 424.9v1.5M1172.5 450.9v1.5M1177.5 422v1M1180.5 421.5v1M1182.5 446.3v1M1184.5 444.7v1M1186.5 432.7v1M1190.5 421v1M1194.5 421.9v1.5M1196.5 439.2v2M1197.5 438.4v1M1200.5 429.7v1M1205.5 429.5v2M1207.5 422.6v1.5M1213.5 448.9v1M1214.5 427.1v2M1218.5 418.8v1.5M1220.5 420.1v1.5M1224.5 430.5v1.5M1228.5 444.2v2M1229.5 426v1.5M1231.5 431.2v1M1233.5 424.5v1M1234.5 440.7v1.5M1237.5 424.6v2M1240.5 423.2v2M1243.5 438.9v1.5M1246.5 438.2v2M1255.5 446.4v1M1256.5 424v2M1267.5 428.4v1.5M1268.5 433.1v1M1269.5 421.5v1M1272.5 423.1v1M1273.5 423.9v1M1278.5 442.7v2M1280.5 440.3v1.5M1281.5 426.8v1.5M1284.5 424.4v2M1285.5 427.1v2M1286.5 428.9v1M1289.5 433.4v2M1291.5 421.2v1.5M1293.5 426v1.5M1295.5 429.9v1.5M1296.5 426.9v1.5M1297.5 425.4v1M1303.5 430.9v1.5M1305.5 427.8v2M1306.5 426.8v2M1307.5 426.7v2M1314.5 422.2v1.5M1315.5 422.1v1.5M1318.5 433.1v1M1320.5 434.4v1.5M1321.5 449.8v1.5M1324.5 424v2M1326.5 420.5v1.5M1334.5 427v1M1336.5 436.2v2M1338.5 434.2v1M1340.5 437.9v1.5M1342.5 430.7v1M1343.5 441.8v1.5M1347.5 424.2v1M1348.5 439.4v1.5M1353.5 441.7v2M1354.5 424.6v1.5" stroke="#0a24a0" stroke-width="1" fill="none" opacity="0.8"/>
<path d="M880.5 294.3v2.2M881.5 297.6v2.2M883.5 295.9v2.2M886.5 297.5v2.2M887.5 296v2.2M888.5 296.7v2.2M891.5 296.6v2.2M893.5 297.8v2.2M899.5 298.2v2.2M901.5 297.1v2.2M902.5 299.4v2.2M907.5 297.1v2.2M912.5 298.1v2.2M924.5 297.1v2.2M928.5 299.8v2.2M933.5 297v2.2M937.5 299.6v2.2M939.5 297.3v2.2M940.5 298.5v2.2M941.5 297.6v2.2M942.5 297.4v2.2M945.5 299.7v2.2M946.5 298.7v2.2M950.5 297.1v2.2M953.5 297.3v2.2M956.5 298.6v2.2M958.5 297.1v2.2M960.5 300v2.2M962.5 299.6v2.2M964.5 298.5v2.2M967.5 297.7v2.2M972.5 298.6v2.2M979.5 300.4v2.2M980.5 300v2.2M981.5 299.8v2.2M984.5 299.2v2.2M985.5 300v2.2M990.5 299v2.2M991.5 299.4v2.2M995.5 299.6v2.2M1000.5 299.9v2.2M1001.5 298.7v2.2M1003.5 297.5v2.2M1009.5 300.7v2.2M1011.5 299.8v2.2M1013.5 298v2.2M1015.5 299.9v2.2M1023.5 299.7v2.2M1024.5 300.7v2.2M1025.5 300.2v2.2M1026.5 299.1v2.2M1028.5 299.8v2.2M1030.5 300.2v2.2M1034.5 300v2.2M1036.5 298.8v2.2M1041.5 299.1v2.2M1043.5 299.8v2.2M1046.5 298.6v2.2M1051.5 299.3v2.2M1054.5 300.3v2.2M1057.5 302.2v2.2M1059.5 298.9v2.2M1061.5 299v2.2M1062.5 300.4v2.2M1063.5 300.3v2.2M1066.5 301.1v2.2M1067.5 301v2.2M1084.5 298v2.2M1093.5 300.8v2.2M1095.5 299.8v2.2M1096.5 300v2.2M1098.5 296.3v2.2M1100.5 300.8v2.2M1108.5 300.7v2.2M1110.5 300.6v2.2M1114.5 300.5v2.2M1115.5 299.6v2.2M1118.5 301.8v2.2M1120.5 297.7v2.2M1126.5 301v2.2M1128.5 299.7v2.2M1131.5 299.2v2.2M1132.5 300.1v2.2M1135.5 299.6v2.2M1138.5 298.9v2.2M1143.5 299.6v2.2M1145.5 299.8v2.2M1147.5 299.8v2.2M1150.5 301.1v2.2M1156.5 301.8v2.2M1159.5 298.1v2.2M1164.5 298.7v2.2M1169.5 297.9v2.2M1170.5 300.9v2.2M1175.5 301.6v2.2M1178.5 301v2.2M1182.5 301.5v2.2M1188.5 301.2v2.2M1192.5 299.4v2.2M1195.5 300.6v2.2M1198.5 301.3v2.2M1199.5 302.3v2.2M1201.5 301.5v2.2M1202.5 301.8v2.2M1204.5 303.1v2.2M1207.5 301.8v2.2M1208.5 304v2.2M1209.5 301.8v2.2M1210.5 302.2v2.2M1221.5 304.1v2.2M1222.5 303.1v2.2M1226.5 300.5v2.2M1228.5 302.9v2.2M1229.5 303.5v2.2M1235.5 304.5v2.2M1240.5 302.4v2.2M1241.5 302.5v2.2M1242.5 303.6v2.2M1245.5 303v2.2M1246.5 301.6v2.2M1251.5 304.2v2.2M1252.5 304.7v2.2M1253.5 304.4v2.2M1256.5 303v2.2M1257.5 305.5v2.2M1259.5 303.5v2.2M1260.5 302.5v2.2M1266.5 302.4v2.2M1267.5 304.6v2.2M1269.5 300.3v2.2M1270.5 305.1v2.2M1273.5 304.8v2.2M1275.5 305.5v2.2M1277.5 304.2v2.2M1279.5 305.9v2.2M1281.5 302.8v2.2M1283.5 305.9v2.2M1285.5 304.5v2.2M1287.5 304.2v2.2M1290.5 304.2v2.2M1292.5 305.4v2.2M1295.5 305.7v2.2M1298.5 304.7v2.2M1301.5 306.9v2.2M1308.5 306.4v2.2M1309.5 305.6v2.2M1312.5 305.1v2.2M1313.5 306.1v2.2M1315.5 306.3v2.2M1317.5 305.7v2.2M1321.5 305.3v2.2M1323.5 304.9v2.2M1325.5 303.9v2.2M1333.5 305.7v2.2M1334.5 304.2v2.2M1336.5 304.3v2.2M1337.5 308v2.2M1339.5 303.8v2.2M1340.5 305.5v2.2M1346.5 303.2v2.2M1352.5 307.8v2.2M1356.5 306.7v2.2M1358.5 306.7v2.2M1362.5 307.6v2.2M1363.5 305.3v2.2M1365.5 304.9v2.2" stroke="#18a060" stroke-width="1" fill="none" opacity="0.9"/>
<polygon points="879,298.3 880,298.3 880,296.3 881,296.3 881,299.6 882,299.6 882,298.9 883,298.9 883,297.9 884,297.9 884,298.7 885,298.7 885,299.4 886,299.4 886,299.5 887,299.5 887,298 888,298 888,298.7 889,298.7 889,298 890,298 890,298.9 891,298.9 891,298.6 892,298.6 892,298.9 893,298.9 893,299.8 894,299.8 894,297.9 895,297.9 895,298.5 896,298.5 896,300.1 897,300.1 897,299.3 898,299.3 898,300.6 899,300.6 899,300.2 900,300.2 900,298.7 901,298.7 901,299.1 902,299.1 902,301.4 903,301.4 903,299.4 904,299.4 904,298.7 905,298.7 905,301.5 906,301.5 906,301.6 907,301.6 907,299.1 908,299.1 908,299.2 909,299.2 909,301 910,301 910,298.6 911,298.6 911,300 912,300 912,300.1 913,300.1 913,299.6 914,299.6 914,301.8 915,301.8 915,300.8 916,300.8 916,299.5 917,299.5 917,300.1 918,300.1 918,299.8 919,299.8 919,300.9 920,300.9 920,299.6 921,299.6 921,298.8 922,298.8 922,300.1 923,300.1 923,301.8 924,301.8 924,299.1 925,299.1 925,299.1 926,299.1 926,299.4 927,299.4 927,299.5 928,299.5 928,301.8 929,301.8 929,301.4 930,301.4 930,300.8 931,300.8 931,299.6 932,299.6 932,300.8 933,300.8 933,299 934,299 934,298.8 935,298.8 935,298.8 936,298.8 936,298.2 937,298.2 937,301.6 938,301.6 938,300.6 939,300.6 939,299.3 940,299.3 940,300.5 941,300.5 941,299.6 942,299.6 942,299.4 943,299.4 943,301.9 944,301.9 944,300.2 945,300.2 945,301.7 946,301.7 946,300.7 947,300.7 947,299.3 948,299.3 948,300 949,300 949,301.1 950,301.1 950,299.1 951,299.1 951,300.6 952,300.6 952,300.2 953,300.2 953,299.3 954,299.3 954,301.5 955,301.5 955,300.6 956,300.6 956,300.6 957,300.6 957,301.4 958,301.4 958,299.1 959,299.1 959,300.5 960,300.5 960,302 961,302 961,300.6 962,300.6 962,301.6 963,301.6 963,299.4 964,299.4 964,300.5 965,300.5 965,300.5 966,300.5 966,299.1 967,299.1 967,299.7 968,299.7 968,302.5 969,302.5 969,300.1 970,300.1 970,301.7 971,301.7 971,302.3 972,302.3 972,300.6 973,300.6 973,301.2 974,301.2 974,298.9 975,298.9 975,302 976,302 976,301.8 977,301.8 977,302.5 978,302.5 978,301.1 979,301.1 979,302.4 980,302.4 980,302 981,302 981,301.8 982,301.8 982,301.4 983,301.4 983,302.4 984,302.4 984,301.2 985,301.2 985,302 986,302 986,299.7 987,299.7 987,302.4 988,302.4 988,302.7 989,302.7 989,301.5 990,301.5 990,301 991,301 991,301.4 992,301.4 992,301.3 993,301.3 993,302.5 994,302.5 994,301.4 995,301.4 995,301.6 996,301.6 996,301.2 997,301.2 997,301.8 998,301.8 998,301 999,301 999,301.4 1000,301.4 1000,301.9 1001,301.9 1001,300.7 1002,300.7 1002,301.8 1003,301.8 1003,299.5 1004,299.5 1004,301.6 1005,301.6 1005,298.6 1006,298.6 1006,301.2 1007,301.2 1007,299.5 1008,299.5 1008,300 1009,300 1009,302.7 1010,302.7 1010,300 1011,300 1011,301.8 1012,301.8 1012,301.3 1013,301.3 1013,300 1014,300 1014,300 1015,300 1015,301.9 1016,301.9 1016,300.1 1017,300.1 1017,300.8 1018,300.8 1018,302.4 1019,302.4 1019,300.4 1020,300.4 1020,299.7 1021,299.7 1021,301.6 1022,301.6 1022,302.2 1023,302.2 1023,301.7 1024,301.7 1024,302.7 1025,302.7 1025,302.2 1026,302.2 1026,301.1 1027,301.1 1027,300.7 1028,300.7 1028,301.8 1029,301.8 1029,301.4 1030,301.4 1030,302.2 1031,302.2 1031,300.1 1032,300.1 1032,299.6 1033,299.6 1033,301.6 1034,301.6 1034,302 1035,302 1035,300.5 1036,300.5 1036,300.8 1037,300.8 1037,300.6 1038,300.6 1038,300.4 1039,300.4 1039,300.1 1040,300.1 1040,301.6 1041,301.6 1041,301.1 1042,301.1 1042,301.2 1043,301.2 1043,301.8 1044,301.8 1044,300.8 1045,300.8 1045,302.7 1046,302.7 1046,300.6 1047,300.6 1047,300.3 1048,300.3 1048,301.4 1049,301.4 1049,302.3 1050,302.3 1050,302.6 1051,302.6 1051,301.3 1052,301.3 1052,301.8 1053,301.8 1053,300.7 1054,300.7 1054,302.3 1055,302.3 1055,300.3 1056,300.3 1056,302.3 1057,302.3 1057,304.2 1058,304.2 1058,303.5 1059,303.5 1059,300.9 1060,300.9 1060,302.1 1061,302.1 1061,301 1062,301 1062,302.4 1063,302.4 1063,302.3 1064,302.3 1064,301 1065,301 1065,299.7 1066,299.7 1066,303.1 1067,303.1 1067,303 1068,303 1068,302.5 1069,302.5 1069,302.4 1070,302.4 1070,301.4 1071,301.4 1071,301.7 1072,301.7 1072,300.7 1073,300.7 1073,303.3 1074,303.3 1074,300.1 1075,300.1 1075,301.9 1076,301.9 1076,300.7 1077,300.7 1077,301.6 1078,301.6 1078,304 1079,304 1079,302 1080,302 1080,300.4 1081,300.4 1081,301.2 1082,301.2 1082,302.1 1083,302.1 1083,300.4 1084,300.4 1084,300 1085,300 1085,302.8 1086,302.8 1086,301.5 1087,301.5 1087,300.6 1088,300.6 1088,301.5 1089,301.5 1089,302 1090,302 1090,300.9 1091,300.9 1091,301 1092,301 1092,302 1093,302 1093,302.8 1094,302.8 1094,302.5 1095,302.5 1095,301.8 1096,301.8 1096,302 1097,302 1097,305.8 1098,305.8 1098,298.3 1099,298.3 1099,301 1100,301 1100,302.8 1101,302.8 1101,301.2 1102,301.2 1102,299.7 1103,299.7 1103,300.6 1104,300.6 1104,301.4 1105,301.4 1105,304.4 1106,304.4 1106,302.3 1107,302.3 1107,303.2 1108,303.2 1108,302.7 1109,302.7 1109,301 1110,301 1110,302.6 1111,302.6 1111,299.9 1112,299.9 1112,303 1113,303 1113,302.6 1114,302.6 1114,302.5 1115,302.5 1115,301.6 1116,301.6 1116,298.8 1117,298.8 1117,303.1 1118,303.1 1118,303.8 1119,303.8 1119,302.5 1120,302.5 1120,299.7 1121,299.7 1121,301.3 1122,301.3 1122,301.7 1123,301.7 1123,301.4 1124,301.4 1124,302.3 1125,302.3 1125,302.4 1126,302.4 1126,303 1127,303 1127,301.2 1128,301.2 1128,301.7 1129,301.7 1129,301.3 1130,301.3 1130,302 1131,302 1131,301.2 1132,301.2 1132,302.1 1133,302.1 1133,302.4 1134,302.4 1134,302.9 1135,302.9 1135,301.6 1136,301.6 1136,303.1 1137,303.1 1137,301.5 1138,301.5 1138,300.9 1139,300.9 1139,300.8 1140,300.8 1140,303 1141,303 1141,300.8 1142,300.8 1142,300.1 1143,300.1 1143,301.6 1144,301.6 1144,302.2 1145,302.2 1145,301.8 1146,301.8 1146,302.8 1147,302.8 1147,301.8 1148,301.8 1148,303 1149,303 1149,300.5 1150,300.5 1150,303.1 1151,303.1 1151,300.8 1152,300.8 1152,301.5 1153,301.5 1153,302.2 1154,302.2 1154,301.2 1155,301.2 1155,303 1156,303 1156,303.8 1157,303.8 1157,302.3 1158,302.3 1158,302.8 1159,302.8 1159,300.1 1160,300.1 1160,303.4 1161,303.4 1161,300.8 1162,300.8 1162,302.5 1163,302.5 1163,303 1164,303 1164,300.7 1165,300.7 1165,302.7 1166,302.7 1166,303.7 1167,303.7 1167,303.8 1168,303.8 1168,303.3 1169,303.3 1169,299.9 1170,299.9 1170,302.9 1171,302.9 1171,304.3 1172,304.3 1172,303.5 1173,303.5 1173,302.4 1174,302.4 1174,304.3 1175,304.3 1175,303.6 1176,303.6 1176,302.3 1177,302.3 1177,300.1 1178,300.1 1178,303 1179,303 1179,302.7 1180,302.7 1180,305.8 1181,305.8 1181,301.6 1182,301.6 1182,303.5 1183,303.5 1183,302.8 1184,302.8 1184,303.1 1185,303.1 1185,303.1 1186,303.1 1186,304 1187,304 1187,302 1188,302 1188,303.2 1189,303.2 1189,302.2 1190,302.2 1190,304.8 1191,304.8 1191,300.9 1192,300.9 1192,301.4 1193,301.4 1193,304 1194,304 1194,304.7 1195,304.7 1195,302.6 1196,302.6 1196,302.2 1197,302.2 1197,304 1198,304 1198,303.3 1199,303.3 1199,304.3 1200,304.3 1200,302.8 1201,302.8 1201,303.5 1202,303.5 1202,303.8 1203,303.8 1203,304.5 1204,304.5 1204,305.1 1205,305.1 1205,303.4 1206,303.4 1206,301.7 1207,301.7 1207,303.8 1208,303.8 1208,306 1209,306 1209,303.8 1210,303.8 1210,304.2 1211,304.2 1211,305.2 1212,305.2 1212,303.7 1213,303.7 1213,303.6 1214,303.6 1214,303.8 1215,303.8 1215,304.1 1216,304.1 1216,305.5 1217,305.5 1217,305.5 1218,305.5 1218,303.3 1219,303.3 1219,306.5 1220,306.5 1220,305.8 1221,305.8 1221,306.1 1222,306.1 1222,305.1 1223,305.1 1223,304.4 1224,304.4 1224,304.2 1225,304.2 1225,303.8 1226,303.8 1226,302.5 1227,302.5 1227,306.7 1228,306.7 1228,304.9 1229,304.9 1229,305.5 1230,305.5 1230,304.9 1231,304.9 1231,306.5 1232,306.5 1232,305.6 1233,305.6 1233,304.7 1234,304.7 1234,306 1235,306 1235,306.5 1236,306.5 1236,304.8 1237,304.8 1237,307.4 1238,307.4 1238,305.2 1239,305.2 1239,305.6 1240,305.6 1240,304.4 1241,304.4 1241,304.5 1242,304.5 1242,305.6 1243,305.6 1243,304.7 1244,304.7 1244,305.8 1245,305.8 1245,305 1246,305 1246,303.6 1247,303.6 1247,307 1248,307 1248,305.4 1249,305.4 1249,307.3 1250,307.3 1250,305 1251,305 1251,306.2 1252,306.2 1252,306.7 1253,306.7 1253,306.4 1254,306.4 1254,306.5 1255,306.5 1255,306.1 1256,306.1 1256,305 1257,305 1257,307.5 1258,307.5 1258,304.3 1259,304.3 1259,305.5 1260,305.5 1260,304.5 1261,304.5 1261,306.4 1262,306.4 1262,307.1 1263,307.1 1263,306.2 1264,306.2 1264,307 1265,307 1265,306.9 1266,306.9 1266,304.4 1267,304.4 1267,306.6 1268,306.6 1268,306.5 1269,306.5 1269,302.3 1270,302.3 1270,307.1 1271,307.1 1271,305.7 1272,305.7 1272,304.9 1273,304.9 1273,306.8 1274,306.8 1274,306.3 1275,306.3 1275,307.5 1276,307.5 1276,306.6 1277,306.6 1277,306.2 1278,306.2 1278,307.9 1279,307.9 1279,307.9 1280,307.9 1280,306.8 1281,306.8 1281,304.8 1282,304.8 1282,307 1283,307 1283,307.9 1284,307.9 1284,308 1285,308 1285,306.5 1286,306.5 1286,306.7 1287,306.7 1287,306.2 1288,306.2 1288,307.1 1289,307.1 1289,306.9 1290,306.9 1290,306.2 1291,306.2 1291,305.7 1292,305.7 1292,307.4 1293,307.4 1293,306.9 1294,306.9 1294,305 1295,305 1295,307.7 1296,307.7 1296,308.3 1297,308.3 1297,308 1298,308 1298,306.7 1299,306.7 1299,307.2 1300,307.2 1300,306.6 1301,306.6 1301,308.9 1302,308.9 1302,308 1303,308 1303,307.5 1304,307.5 1304,308.5 1305,308.5 1305,307.3 1306,307.3 1306,308.2 1307,308.2 1307,307.8 1308,307.8 1308,308.4 1309,308.4 1309,307.6 1310,307.6 1310,306.9 1311,306.9 1311,306.8 1312,306.8 1312,307.1 1313,307.1 1313,308.1 1314,308.1 1314,306.9 1315,306.9 1315,308.3 1316,308.3 1316,306.4 1317,306.4 1317,307.7 1318,307.7 1318,305.7 1319,305.7 1319,306.3 1320,306.3 1320,307.2 1321,307.2 1321,307.3 1322,307.3 1322,309 1323,309 1323,306.9 1324,306.9 1324,305.7 1325,305.7 1325,305.9 1326,305.9 1326,305 1327,305 1327,306 1328,306 1328,306.3 1329,306.3 1329,305.6 1330,305.6 1330,307.6 1331,307.6 1331,304.8 1332,304.8 1332,305.5 1333,305.5 1333,307.7 1334,307.7 1334,306.2 1335,306.2 1335,306.9 1336,306.9 1336,306.3 1337,306.3 1337,310 1338,310 1338,308.6 1339,308.6 1339,305.8 1340,305.8 1340,307.5 1341,307.5 1341,307.4 1342,307.4 1342,307.4 1343,307.4 1343,307.5 1344,307.5 1344,307 1345,307 1345,308 1346,308 1346,305.2 1347,305.2 1347,308.2 1348,308.2 1348,307.2 1349,307.2 1349,306.2 1350,306.2 1350,305.5 1351,305.5 1351,308.9 1352,308.9 1352,309.8 1353,309.8 1353,306.2 1354,306.2 1354,306.5 1355,306.5 1355,306.2 1356,306.2 1356,308.7 1357,308.7 1357,307.6 1358,307.6 1358,308.7 1359,308.7 1359,307.9 1360,307.9 1360,306.4 1361,306.4 1361,307 1362,307 1362,309.6 1363,309.6 1363,307.3 1364,307.3 1364,307.7 1365,307.7 1365,306.9 1366,306.9 1366,308.4 1367,308.4 1367,307.9 1368,307.9 1368,312.4 1367,312.4 1367,312.9 1366,312.9 1366,311.8 1365,311.8 1365,312.4 1364,312.4 1364,312.8 1363,312.8 1363,314.2 1362,314.2 1362,312.4 1361,312.4 1361,313.9 1360,313.9 1360,312.5 1359,312.5 1359,314.2 1358,314.2 1358,312.4 1357,312.4 1357,314.9 1356,314.9 1356,311.3 1355,311.3 1355,311.4 1354,311.4 1354,310.7 1353,310.7 1353,314.8 1352,314.8 1352,313.2 1351,313.2 1351,311.8 1350,311.8 1350,312.3 1349,312.3 1349,311.9 1348,311.9 1348,313.2 1347,313.2 1347,309.4 1346,309.4 1346,313 1345,313 1345,315.5 1344,315.5 1344,312.5 1343,312.5 1343,312.4 1342,312.4 1342,311.7 1341,311.7 1341,313.2 1340,313.2 1340,313.4 1339,313.4 1339,313.3 1338,313.3 1338,315 1337,315 1337,310.8 1336,310.8 1336,313.8 1335,313.8 1335,310.9 1334,310.9 1334,312.6 1333,312.6 1333,310.3 1332,310.3 1332,310.8 1331,310.8 1331,313 1330,313 1330,311.2 1329,311.2 1329,312 1328,312 1328,310.5 1327,310.5 1327,309.7 1326,309.7 1326,310.5 1325,310.5 1325,312.1 1324,312.1 1324,311.1 1323,311.1 1323,314.3 1322,314.3 1322,311.6 1321,311.6 1321,312.4 1320,312.4 1320,313.6 1319,313.6 1319,310.9 1318,310.9 1318,312.9 1317,312.9 1317,312.7 1316,312.7 1316,312.8 1315,312.8 1315,314 1314,314 1314,312.5 1313,312.5 1313,312.1 1312,312.1 1312,311.3 1311,311.3 1311,311.7 1310,311.7 1310,312.6 1309,312.6 1309,312.7 1308,312.7 1308,312.6 1307,312.6 1307,312.8 1306,312.8 1306,312.3 1305,312.3 1305,313.7 1304,313.7 1304,312.4 1303,312.4 1303,312.3 1302,312.3 1302,313.1 1301,313.1 1301,313.2 1300,313.2 1300,312.7 1299,312.7 1299,311.8 1298,311.8 1298,313.1 1297,313.1 1297,313.3 1296,313.3 1296,312.3 1295,312.3 1295,313.2 1294,313.2 1294,312.5 1293,312.5 1293,311.8 1292,311.8 1292,310.5 1291,310.5 1291,311.9 1290,311.9 1290,312.3 1289,312.3 1289,313.1 1288,313.1 1288,312.2 1287,312.2 1287,311.9 1286,311.9 1286,311.2 1285,311.2 1285,312.3 1284,312.3 1284,312.8 1283,312.8 1283,312 1282,312 1282,311.8 1281,311.8 1281,311.9 1280,311.9 1280,312.3 1279,312.3 1279,313.7 1278,313.7 1278,313.4 1277,313.4 1277,311.4 1276,311.4 1276,312.2 1275,312.2 1275,311.1 1274,311.1 1274,312.1 1273,312.1 1273,310.3 1272,310.3 1272,310.9 1271,310.9 1271,311.8 1270,311.8 1270,309.7 1269,309.7 1269,311.1 1268,311.1 1268,312.9 1267,312.9 1267,309.4 1266,309.4 1266,311.3 1265,311.3 1265,311.2 1264,311.2 1264,312.4 1263,312.4 1263,312.4 1262,312.4 1262,311.2 1261,311.2 1261,309.7 1260,309.7 1260,309.8 1259,309.8 1259,309.1 1258,309.1 1258,311.8 1257,311.8 1257,310.1 1256,310.1 1256,312 1255,312 1255,311.4 1254,311.4 1254,310.9 1253,310.9 1253,312.5 1252,312.5 1252,311.2 1251,311.2 1251,309.7 1250,309.7 1250,311.6 1249,311.6 1249,310.9 1248,310.9 1248,311.6 1247,311.6 1247,311.1 1246,311.1 1246,312.3 1245,312.3 1245,310.4 1244,310.4 1244,309.6 1243,309.6 1243,312.7 1242,312.7 1242,310.4 1241,310.4 1241,309.5 1240,309.5 1240,313.2 1239,313.2 1239,309.5 1238,309.5 1238,311.8 1237,311.8 1237,309 1236,309 1236,311.2 1235,311.2 1235,311.2 1234,311.2 1234,310 1233,310 1233,310.3 1232,310.3 1232,310.8 1231,310.8 1231,310.1 1230,310.1 1230,311.2 1229,311.2 1229,309.4 1228,309.4 1228,311.6 1227,311.6 1227,307 1226,307 1226,309.3 1225,309.3 1225,311.6 1224,311.6 1224,310.5 1223,310.5 1223,310.1 1222,310.1 1222,311.2 1221,311.2 1221,310.9 1220,310.9 1220,311.5 1219,311.5 1219,309.9 1218,309.9 1218,310.2 1217,310.2 1217,310.7 1216,310.7 1216,310.5 1215,310.5 1215,312 1214,312 1214,309 1213,309 1213,308 1212,308 1212,309.9 1211,309.9 1211,310.3 1210,310.3 1210,309.4 1209,309.4 1209,310.3 1208,310.3 1208,308.3 1207,308.3 1207,307.2 1206,307.2 1206,307.6 1205,307.6 1205,309.4 1204,309.4 1204,309 1203,309 1203,309.2 1202,309.2 1202,309.9 1201,309.9 1201,307.7 1200,307.7 1200,310.9 1199,310.9 1199,308 1198,308 1198,309.5 1197,309.5 1197,306.6 1196,306.6 1196,307.7 1195,307.7 1195,309.5 1194,309.5 1194,308.8 1193,308.8 1193,308.6 1192,308.6 1192,305.3 1191,305.3 1191,309.2 1190,309.2 1190,307 1189,307 1189,309.1 1188,309.1 1188,308.3 1187,308.3 1187,308.7 1186,308.7 1186,309.6 1185,309.6 1185,307.4 1184,307.4 1184,308.1 1183,308.1 1183,307.7 1182,307.7 1182,307.5 1181,307.5 1181,311 1180,311 1180,308.7 1179,308.7 1179,308.8 1178,308.8 1178,305.1 1177,305.1 1177,307.8 1176,307.8 1176,309.4 1175,309.4 1175,309.6 1174,309.6 1174,307.7 1173,307.7 1173,308.9 1172,308.9 1172,308.5 1171,308.5 1171,309.1 1170,309.1 1170,305.7 1169,305.7 1169,308.2 1168,308.2 1168,309.1 1167,309.1 1167,308.6 1166,308.6 1166,307 1165,307 1165,305.8 1164,305.8 1164,307.6 1163,307.6 1163,308.6 1162,308.6 1162,305.2 1161,305.2 1161,308 1160,308 1160,305.8 1159,305.8 1159,307.2 1158,307.2 1158,307 1157,307 1157,309.4 1156,309.4 1156,307.4 1155,307.4 1155,306.4 1154,306.4 1154,308.1 1153,308.1 1153,307.3 1152,307.3 1152,305.8 1151,305.8 1151,307.6 1150,307.6 1150,305.7 1149,305.7 1149,308.1 1148,308.1 1148,307.4 1147,307.4 1147,307.5 1146,307.5 1146,306.2 1145,306.2 1145,307.4 1144,307.4 1144,306.3 1143,306.3 1143,306 1142,306 1142,307.1 1141,307.1 1141,308 1140,308 1140,307.2 1139,307.2 1139,305.9 1138,305.9 1138,306.3 1137,306.3 1137,307.7 1136,307.7 1136,307.1 1135,307.1 1135,307.6 1134,307.6 1134,307.6 1133,307.6 1133,307.6 1132,307.6 1132,307.5 1131,307.5 1131,306.5 1130,306.5 1130,305.8 1129,305.8 1129,306.8 1128,306.8 1128,306.3 1127,306.3 1127,308.2 1126,308.2 1126,307.7 1125,307.7 1125,307.6 1124,307.6 1124,306.1 1123,306.1 1123,306.4 1122,306.4 1122,306.5 1121,306.5 1121,306.7 1120,306.7 1120,306.9 1119,306.9 1119,308 1118,308 1118,308.4 1117,308.4 1117,306.3 1116,306.3 1116,307.1 1115,307.1 1115,307.4 1114,307.4 1114,307.3 1113,307.3 1113,307.2 1112,307.2 1112,304.7 1111,304.7 1111,306.8 1110,306.8 1110,305.8 1109,305.8 1109,307.8 1108,307.8 1108,307.9 1107,307.9 1107,308 1106,308 1106,309.6 1105,309.6 1105,308.4 1104,308.4 1104,306.2 1103,306.2 1103,304.7 1102,304.7 1102,305.9 1101,305.9 1101,307.6 1100,307.6 1100,305.5 1099,305.5 1099,303.8 1098,303.8 1098,310.4 1097,310.4 1097,307.1 1096,307.1 1096,306.5 1095,306.5 1095,308.2 1094,308.2 1094,307.7 1093,307.7 1093,307.3 1092,307.3 1092,306.3 1091,306.3 1091,305.8 1090,305.8 1090,306.9 1089,306.9 1089,306.1 1088,306.1 1088,306.9 1087,306.9 1087,307.1 1086,307.1 1086,308.3 1085,308.3 1085,304.9 1084,304.9 1084,308.3 1083,308.3 1083,307.1 1082,307.1 1082,307.1 1081,307.1 1081,305.4 1080,305.4 1080,307.3 1079,307.3 1079,308.3 1078,308.3 1078,307.1 1077,307.1 1077,305.6 1076,305.6 1076,307.1 1075,307.1 1075,307.2 1074,307.2 1074,308.7 1073,308.7 1073,305.6 1072,305.6 1072,306.8 1071,306.8 1071,307 1070,307 1070,307.3 1069,307.3 1069,307.7 1068,307.7 1068,307.2 1067,307.2 1067,308.1 1066,308.1 1066,307.4 1065,307.4 1065,306.9 1064,306.9 1064,307.5 1063,307.5 1063,307.4 1062,307.4 1062,305.8 1061,305.8 1061,306.7 1060,306.7 1060,306.3 1059,306.3 1059,308.4 1058,308.4 1058,310.7 1057,310.7 1057,308.9 1056,308.9 1056,304.7 1055,304.7 1055,306.6 1054,306.6 1054,305.3 1053,305.3 1053,306.5 1052,306.5 1052,307.3 1051,307.3 1051,307.1 1050,307.1 1050,307.3 1049,307.3 1049,307.1 1048,307.1 1048,305.5 1047,305.5 1047,305.5 1046,305.5 1046,307.5 1045,307.5 1045,305.8 1044,305.8 1044,306.3 1043,306.3 1043,306.5 1042,306.5 1042,307.9 1041,307.9 1041,306.7 1040,306.7 1040,306.6 1039,306.6 1039,304.7 1038,304.7 1038,306.2 1037,306.2 1037,305.2 1036,305.2 1036,305.3 1035,305.3 1035,306.9 1034,306.9 1034,306.5 1033,306.5 1033,305.1 1032,305.1 1032,305 1031,305 1031,306.7 1030,306.7 1030,305.6 1029,305.6 1029,306 1028,306 1028,306 1027,306 1027,305.5 1026,305.5 1026,306.8 1025,306.8 1025,306.9 1024,306.9 1024,306.8 1023,306.8 1023,306.9 1022,306.9 1022,306.3 1021,306.3 1021,305.7 1020,305.7 1020,305 1019,305 1019,306.8 1018,306.8 1018,305.5 1017,305.5 1017,305 1016,305 1016,306.6 1015,306.6 1015,304.9 1014,304.9 1014,305.3 1013,305.3 1013,305.5 1012,305.5 1012,308.5 1011,308.5 1011,305.2 1010,305.2 1010,307.1 1009,307.1 1009,305.5 1008,305.5 1008,304.8 1007,304.8 1007,305.9 1006,305.9 1006,306.8 1005,306.8 1005,307.1 1004,307.1 1004,305.5 1003,305.5 1003,306.1 1002,306.1 1002,307.5 1001,307.5 1001,307.6 1000,307.6 1000,306.3 999,306.3 999,307.5 998,307.5 998,306.1 997,306.1 997,306.4 996,306.4 996,306.1 995,306.1 995,305.8 994,305.8 994,307.5 993,307.5 993,305.5 992,305.5 992,305.8 991,305.8 991,306 990,306 990,305.9 989,305.9 989,308.1 988,308.1 988,306.9 987,306.9 987,303.9 986,303.9 986,306.3 985,306.3 985,307.5 984,307.5 984,307.1 983,307.1 983,306.7 982,306.7 982,309.2 981,309.2 981,308.1 980,308.1 980,307.8 979,307.8 979,305.3 978,305.3 978,307.4 977,307.4 977,306.2 976,306.2 976,306.3 975,306.3 975,305.2 974,305.2 974,306.1 973,306.1 973,308 972,308 972,306.6 971,306.6 971,307.5 970,307.5 970,304.5 969,304.5 969,307.9 968,307.9 968,305.3 967,305.3 967,303.5 966,303.5 966,305 965,305 965,304.8 964,304.8 964,306.1 963,306.1 963,306 962,306 962,307.5 961,307.5 961,307.1 960,307.1 960,306.2 959,306.2 959,304.8 958,304.8 958,305.6 957,305.6 957,306.4 956,306.4 956,306.4 955,306.4 955,306.5 954,306.5 954,305.2 953,305.2 953,306.1 952,306.1 952,305.2 951,305.2 951,305 950,305 950,305.6 949,305.6 949,304.9 948,304.9 948,304.4 947,304.4 947,305 946,305 946,307.1 945,307.1 945,306.1 944,306.1 944,306.6 943,306.6 943,304.9 942,304.9 942,304.9 941,304.9 941,305.4 940,305.4 940,304.3 939,304.3 939,305 938,305 938,306.4 937,306.4 937,303 936,303 936,306.6 935,306.6 935,304 934,304 934,307.2 933,307.2 933,307.5 932,307.5 932,306.3 931,306.3 931,305.5 930,305.5 930,306.1 929,306.1 929,306.5 928,306.5 928,305.5 927,305.5 927,303.7 926,303.7 926,304 925,304 925,303.4 924,303.4 924,306.3 923,306.3 923,307.9 922,307.9 922,303 921,303 921,303.9 920,303.9 920,305.8 919,305.8 919,306.4 918,306.4 918,304.5 917,304.5 917,304.5 916,304.5 916,305.2 915,305.2 915,307.2 914,307.2 914,304.1 913,304.1 913,304.5 912,304.5 912,304.4 911,304.4 911,304.8 910,304.8 910,306.2 909,306.2 909,304.7 908,304.7 908,304.5 907,304.5 907,306.3 906,306.3 906,306.2 905,306.2 905,304.2 904,304.2 904,304.9 903,304.9 903,307.5 902,307.5 902,303.4 901,303.4 901,305.4 900,305.4 900,304.9 899,304.9 899,305.5 898,305.5 898,305.1 897,305.1 897,304.5 896,304.5 896,305 895,305 895,304 894,304 894,306.1 893,306.1 893,303.8 892,303.8 892,303.2 891,303.2 891,303.2 890,303.2 890,304.4 889,304.4 889,304.1 888,304.1 888,303.1 887,303.1 887,304 886,304 886,304.7 885,304.7 885,303.9 884,303.9 884,302.7 883,302.7 883,304.5 882,304.5 882,304 881,304 881,302.4 880,302.4 880,304.2 879,304.2" fill="#f6ee14"/>
<polygon points="1087.2,246.4 1088.2,248 1088.5,262 1088.9,276 1089.7,288 1090.5,296 1091.3,301.8 1091.6,306.3 1076.4,306.3 1076.7,301.8 1077.5,296 1078.3,288 1079.1,276 1079.5,262 1079.8,248 1080.8,246.4" fill="url(#pk1084)"/>
<polygon points="1085.7,248.8 1086.7,248 1087,262 1087.4,276 1088.2,288 1089,296 1089.8,301.8 1091.1,307.8 1076.9,307.8 1078.2,301.8 1079,296 1079.8,288 1080.6,276 1081,262 1081.3,248 1082.3,248.8" fill="url(#pk1084c)"/>
<polygon points="1258,257.6 1258.9,259 1259.1,282 1261,285 1261.6,296 1262.6,306.1 1262.9,310.6 1249.7,310.6 1250,306.1 1251,296 1251.6,285 1253.5,282 1253.7,259 1254.6,257.6" fill="url(#pk1256)"/>
<polygon points="1256.9,260 1257.4,259 1257.6,282 1259.5,285 1260.1,296 1261.1,306.1 1262.4,312.1 1250.2,312.1 1251.5,306.1 1252.5,296 1253.1,285 1255,282 1255.2,259 1255.7,260" fill="url(#pk1256c)"/>
<rect x="879.5" y="456.2" width="488.5" height="60.80000000000001" fill="url(#wR)"/>
<rect x="879.5" y="456.2" width="130" height="60.80000000000001" fill="url(#wRg)"/>
<rect x="1262" y="456.2" width="106" height="58.40000000000001" fill="#0838b0" opacity="0.3"/>
<rect x="1331" y="456.2" width="37" height="58.40000000000001" fill="#0830a0" opacity="0.3"/>
<rect x="879.5" y="456.2" width="488.5" height="60.80000000000001" fill="url(#nz)"/>
<rect x="1121.6" y="457.4" width="3" height="15.4" fill="#0a3aa0" opacity="0.9"/>
<rect x="1077.6" y="456.2" width="13.40" height="60.80" fill="#22c840" opacity="1"/>
<rect x="1078.4" y="456.2" width="11.80" height="60.80" fill="#ff5a10" opacity="1"/>
<rect x="1079.2" y="456.2" width="10.20" height="60.80" fill="#ffef10" opacity="1"/>
<path d="M1079.4 459.2H1089.2M1079.4 462.8H1089.2M1079.4 466.4H1089.2M1079.4 470H1089.2M1079.4 473.6H1089.2M1079.4 477.2H1089.2M1079.4 480.8H1089.2M1079.4 484.4H1089.2M1079.4 488H1089.2M1079.4 491.6H1089.2M1079.4 495.2H1089.2M1079.4 498.8H1089.2M1079.4 502.4H1089.2M1079.4 506H1089.2M1079.4 509.6H1089.2M1079.4 513.2H1089.2M1079.4 516.8H1089.2" stroke="#ffb010" stroke-width="1" opacity="0.55" fill="none"/>
<rect x="1251.4" y="456.2" width="9.80" height="60.80" fill="#20c83c" opacity="1"/>
<rect x="1253.2" y="456.2" width="6.40" height="60.80" fill="#f86412" opacity="1"/>
<rect x="1254.4" y="456.2" width="3.80" height="60.80" fill="#f03c0c" opacity="1"/>
<rect x="1254.2" y="513.6" width="4.40" height="3.40" fill="#ffc818" opacity="1"/>
<path d="M866.9 404.5H1384.3" stroke="#a8a8a8" stroke-width="1" stroke-dasharray="1 3" fill="none"/>
<path d="M866.9 425.5H1384.3" stroke="#a8a8a8" stroke-width="1" stroke-dasharray="1 3" fill="none"/>
<path d="M866.9 446.5H1384.3" stroke="#a8a8a8" stroke-width="1" stroke-dasharray="1 3" fill="none"/>
<path d="M905.5 400.8V455.3" stroke="#a8a8a8" stroke-width="1" stroke-dasharray="1 3" fill="none"/>
<path d="M983.5 400.8V455.3" stroke="#a8a8a8" stroke-width="1" stroke-dasharray="1 3" fill="none"/>
<path d="M1061.5 400.8V455.3" stroke="#a8a8a8" stroke-width="1" stroke-dasharray="1 3" fill="none"/>
<path d="M1139.5 400.8V455.3" stroke="#a8a8a8" stroke-width="1" stroke-dasharray="1 3" fill="none"/>
<path d="M1217.5 400.8V455.3" stroke="#a8a8a8" stroke-width="1" stroke-dasharray="1 3" fill="none"/>
<path d="M1295.5 400.8V455.3" stroke="#a8a8a8" stroke-width="1" stroke-dasharray="1 3" fill="none"/>
<path d="M1373.5 400.8V455.3" stroke="#a8a8a8" stroke-width="1" stroke-dasharray="1 3" fill="none"/>
<text x="1124.00" y="114.30" font-size="12.3" text-anchor="middle" fill="#cdcdcd" font-weight="bold" letter-spacing="-0.12" xml:space="preserve" stroke="#000" stroke-width="2.2" stroke-opacity="0.75" paint-order="stroke" stroke-linejoin="round">RFEYE400065 - RTBW:6.25MHz</text>
<clipPath id="lcR"><rect x="863.4" y="110" width="520.9" height="30"/></clipPath>
<text x="893.00" y="129.40" font-size="12.0" text-anchor="start" fill="#c4c4c4" font-weight="normal" letter-spacing="-0.02" clip-path="url(#lcR)" stroke="#000" stroke-width="2.2" stroke-opacity="0.75" paint-order="stroke" stroke-linejoin="round">Sweep 96.68MHz-102.93MHz, RBW:7.63kHz, peak:512, POI:100%, 14.9/s, Seg:1, Acc:512, FFT</text>
<rect x="872.6" y="124" width="15.399999999999977" height="2" fill="#f8f000"/>
<rect x="862.4" y="101.3" width="2.1" height="709.1000000000001" fill="#a9a9a9"/>
<rect x="1384.3" y="101.3" width="2.1" height="709.1000000000001" fill="#a9a9a9"/>
<rect x="862.4" y="101.3" width="523.9" height="1.7" fill="#a9a9a9"/>
<rect x="862.4" y="809.6" width="523.9" height="1.2" fill="#a9a9a9"/>
<rect x="863.4" y="809.0" width="16.100000000000023" height="1.8" fill="#a9a9a9"/>
<rect x="1368" y="809.0" width="17.299999999999955" height="1.8" fill="#a9a9a9"/>
<rect x="853.8" y="101.70" width="9" height="1.6" fill="#a9a9a9"/>
<rect x="1386.3" y="101.70" width="9.4" height="1.6" fill="#a9a9a9"/>
<text x="854.20" y="106.90" font-size="12.4" text-anchor="end" fill="#f4f4f4" font-weight="bold" >0</text>
<rect x="853.8" y="123.20" width="9" height="1.6" fill="#a9a9a9"/>
<rect x="1386.3" y="123.20" width="9.4" height="1.6" fill="#a9a9a9"/>
<text x="854.20" y="128.40" font-size="12.4" text-anchor="end" fill="#f4f4f4" font-weight="bold" >-10</text>
<rect x="853.8" y="144.70" width="9" height="1.6" fill="#a9a9a9"/>
<rect x="1386.3" y="144.70" width="9.4" height="1.6" fill="#a9a9a9"/>
<text x="854.20" y="149.90" font-size="12.4" text-anchor="end" fill="#f4f4f4" font-weight="bold" >-20</text>
<rect x="853.8" y="166.20" width="9" height="1.6" fill="#a9a9a9"/>
<rect x="1386.3" y="166.20" width="9.4" height="1.6" fill="#a9a9a9"/>
<text x="854.20" y="171.40" font-size="12.4" text-anchor="end" fill="#f4f4f4" font-weight="bold" >-30</text>
<rect x="853.8" y="187.70" width="9" height="1.6" fill="#a9a9a9"/>
<rect x="1386.3" y="187.70" width="9.4" height="1.6" fill="#a9a9a9"/>
<text x="854.20" y="192.90" font-size="12.4" text-anchor="end" fill="#f4f4f4" font-weight="bold" >-40</text>
<rect x="853.8" y="209.20" width="9" height="1.6" fill="#a9a9a9"/>
<rect x="1386.3" y="209.20" width="9.4" height="1.6" fill="#a9a9a9"/>
<text x="854.20" y="214.40" font-size="12.4" text-anchor="end" fill="#f4f4f4" font-weight="bold" >-50</text>
<rect x="853.8" y="230.70" width="9" height="1.6" fill="#a9a9a9"/>
<rect x="1386.3" y="230.70" width="9.4" height="1.6" fill="#a9a9a9"/>
<text x="854.20" y="235.90" font-size="12.4" text-anchor="end" fill="#f4f4f4" font-weight="bold" >-60</text>
<rect x="853.8" y="252.20" width="9" height="1.6" fill="#a9a9a9"/>
<rect x="1386.3" y="252.20" width="9.4" height="1.6" fill="#a9a9a9"/>
<text x="854.20" y="257.40" font-size="12.4" text-anchor="end" fill="#f4f4f4" font-weight="bold" >-70</text>
<rect x="853.8" y="273.70" width="9" height="1.6" fill="#a9a9a9"/>
<rect x="1386.3" y="273.70" width="9.4" height="1.6" fill="#a9a9a9"/>
<text x="854.20" y="278.90" font-size="12.4" text-anchor="end" fill="#f4f4f4" font-weight="bold" >-80</text>
<rect x="853.8" y="295.20" width="9" height="1.6" fill="#a9a9a9"/>
<rect x="1386.3" y="295.20" width="9.4" height="1.6" fill="#a9a9a9"/>
<text x="854.20" y="300.40" font-size="12.4" text-anchor="end" fill="#f4f4f4" font-weight="bold" >-90</text>
<rect x="853.8" y="316.70" width="9" height="1.6" fill="#a9a9a9"/>
<rect x="1386.3" y="316.70" width="9.4" height="1.6" fill="#a9a9a9"/>
<text x="854.20" y="321.90" font-size="12.4" text-anchor="end" fill="#f4f4f4" font-weight="bold" >-100</text>
<rect x="853.8" y="338.20" width="9" height="1.6" fill="#a9a9a9"/>
<rect x="1386.3" y="338.20" width="9.4" height="1.6" fill="#a9a9a9"/>
<text x="854.20" y="343.40" font-size="12.4" text-anchor="end" fill="#f4f4f4" font-weight="bold" >-110</text>
<rect x="853.8" y="359.70" width="9" height="1.6" fill="#a9a9a9"/>
<rect x="1386.3" y="359.70" width="9.4" height="1.6" fill="#a9a9a9"/>
<text x="854.20" y="364.90" font-size="12.4" text-anchor="end" fill="#f4f4f4" font-weight="bold" >-120</text>
<rect x="853.8" y="381.20" width="9" height="1.6" fill="#a9a9a9"/>
<rect x="1386.3" y="381.20" width="9.4" height="1.6" fill="#a9a9a9"/>
<text x="854.20" y="386.40" font-size="12.4" text-anchor="end" fill="#f4f4f4" font-weight="bold" >-130</text>
<rect x="853.8" y="402.70" width="9" height="1.6" fill="#a9a9a9"/>
<rect x="1386.3" y="402.70" width="9.4" height="1.6" fill="#a9a9a9"/>
<text x="854.20" y="407.90" font-size="12.4" text-anchor="end" fill="#f4f4f4" font-weight="bold" >-140</text>
<rect x="853.8" y="424.20" width="9" height="1.6" fill="#a9a9a9"/>
<rect x="1386.3" y="424.20" width="9.4" height="1.6" fill="#a9a9a9"/>
<text x="854.20" y="429.40" font-size="12.4" text-anchor="end" fill="#f4f4f4" font-weight="bold" >-150</text>
<rect x="853.8" y="445.70" width="9" height="1.6" fill="#a9a9a9"/>
<rect x="1386.3" y="445.70" width="9.4" height="1.6" fill="#a9a9a9"/>
<text x="854.20" y="450.90" font-size="12.4" text-anchor="end" fill="#f4f4f4" font-weight="bold" >-160</text>
<clipPath id="wcR"><rect x="823.4" y="456.1" width="40" height="400"/></clipPath>
<rect x="853.8" y="455.10" width="9" height="1.6" fill="#a9a9a9"/>
<rect x="1386.3" y="455.10" width="9.4" height="1.6" fill="#a9a9a9"/>
<text x="854.20" y="460.30" font-size="12.4" text-anchor="end" fill="#f4f4f4" font-weight="bold" clip-path="url(#wcR)">0</text>
<rect x="853.8" y="470.25" width="9" height="1.6" fill="#a9a9a9"/>
<rect x="1386.3" y="470.25" width="9.4" height="1.6" fill="#a9a9a9"/>
<text x="854.20" y="475.45" font-size="12.4" text-anchor="end" fill="#f4f4f4" font-weight="bold" clip-path="url(#wcR)">1</text>
<rect x="853.8" y="485.40" width="9" height="1.6" fill="#a9a9a9"/>
<rect x="1386.3" y="485.40" width="9.4" height="1.6" fill="#a9a9a9"/>
<text x="854.20" y="490.60" font-size="12.4" text-anchor="end" fill="#f4f4f4" font-weight="bold" clip-path="url(#wcR)">2</text>
<rect x="853.8" y="500.55" width="9" height="1.6" fill="#a9a9a9"/>
<rect x="1386.3" y="500.55" width="9.4" height="1.6" fill="#a9a9a9"/>
<text x="854.20" y="505.75" font-size="12.4" text-anchor="end" fill="#f4f4f4" font-weight="bold" clip-path="url(#wcR)">3</text>
<rect x="853.8" y="515.70" width="9" height="1.6" fill="#a9a9a9"/>
<rect x="1386.3" y="515.70" width="9.4" height="1.6" fill="#a9a9a9"/>
<text x="854.20" y="520.90" font-size="12.4" text-anchor="end" fill="#f4f4f4" font-weight="bold" clip-path="url(#wcR)">4</text>
<rect x="853.8" y="530.85" width="9" height="1.6" fill="#a9a9a9"/>
<rect x="1386.3" y="530.85" width="9.4" height="1.6" fill="#a9a9a9"/>
<text x="854.20" y="536.05" font-size="12.4" text-anchor="end" fill="#f4f4f4" font-weight="bold" clip-path="url(#wcR)">5</text>
<rect x="853.8" y="546.00" width="9" height="1.6" fill="#a9a9a9"/>
<rect x="1386.3" y="546.00" width="9.4" height="1.6" fill="#a9a9a9"/>
<text x="854.20" y="551.20" font-size="12.4" text-anchor="end" fill="#f4f4f4" font-weight="bold" clip-path="url(#wcR)">6</text>
<rect x="853.8" y="561.15" width="9" height="1.6" fill="#a9a9a9"/>
<rect x="1386.3" y="561.15" width="9.4" height="1.6" fill="#a9a9a9"/>
<text x="854.20" y="566.35" font-size="12.4" text-anchor="end" fill="#f4f4f4" font-weight="bold" clip-path="url(#wcR)">7</text>
<rect x="853.8" y="576.30" width="9" height="1.6" fill="#a9a9a9"/>
<rect x="1386.3" y="576.30" width="9.4" height="1.6" fill="#a9a9a9"/>
<text x="854.20" y="581.50" font-size="12.4" text-anchor="end" fill="#f4f4f4" font-weight="bold" clip-path="url(#wcR)">8</text>
<rect x="853.8" y="591.45" width="9" height="1.6" fill="#a9a9a9"/>
<rect x="1386.3" y="591.45" width="9.4" height="1.6" fill="#a9a9a9"/>
<text x="854.20" y="596.65" font-size="12.4" text-anchor="end" fill="#f4f4f4" font-weight="bold" clip-path="url(#wcR)">9</text>
<rect x="853.8" y="606.60" width="9" height="1.6" fill="#a9a9a9"/>
<rect x="1386.3" y="606.60" width="9.4" height="1.6" fill="#a9a9a9"/>
<text x="854.20" y="611.80" font-size="12.4" text-anchor="end" fill="#f4f4f4" font-weight="bold" clip-path="url(#wcR)">10</text>
<rect x="853.8" y="621.75" width="9" height="1.6" fill="#a9a9a9"/>
<rect x="1386.3" y="621.75" width="9.4" height="1.6" fill="#a9a9a9"/>
<text x="854.20" y="626.95" font-size="12.4" text-anchor="end" fill="#f4f4f4" font-weight="bold" clip-path="url(#wcR)">11</text>
<rect x="853.8" y="636.90" width="9" height="1.6" fill="#a9a9a9"/>
<rect x="1386.3" y="636.90" width="9.4" height="1.6" fill="#a9a9a9"/>
<text x="854.20" y="642.10" font-size="12.4" text-anchor="end" fill="#f4f4f4" font-weight="bold" clip-path="url(#wcR)">12</text>
<rect x="853.8" y="652.05" width="9" height="1.6" fill="#a9a9a9"/>
<rect x="1386.3" y="652.05" width="9.4" height="1.6" fill="#a9a9a9"/>
<text x="854.20" y="657.25" font-size="12.4" text-anchor="end" fill="#f4f4f4" font-weight="bold" clip-path="url(#wcR)">13</text>
<rect x="853.8" y="667.20" width="9" height="1.6" fill="#a9a9a9"/>
<rect x="1386.3" y="667.20" width="9.4" height="1.6" fill="#a9a9a9"/>
<text x="854.20" y="672.40" font-size="12.4" text-anchor="end" fill="#f4f4f4" font-weight="bold" clip-path="url(#wcR)">14</text>
<rect x="853.8" y="682.35" width="9" height="1.6" fill="#a9a9a9"/>
<rect x="1386.3" y="682.35" width="9.4" height="1.6" fill="#a9a9a9"/>
<text x="854.20" y="687.55" font-size="12.4" text-anchor="end" fill="#f4f4f4" font-weight="bold" clip-path="url(#wcR)">15</text>
<rect x="853.8" y="697.50" width="9" height="1.6" fill="#a9a9a9"/>
<rect x="1386.3" y="697.50" width="9.4" height="1.6" fill="#a9a9a9"/>
<text x="854.20" y="702.70" font-size="12.4" text-anchor="end" fill="#f4f4f4" font-weight="bold" clip-path="url(#wcR)">16</text>
<rect x="853.8" y="712.65" width="9" height="1.6" fill="#a9a9a9"/>
<rect x="1386.3" y="712.65" width="9.4" height="1.6" fill="#a9a9a9"/>
<text x="854.20" y="717.85" font-size="12.4" text-anchor="end" fill="#f4f4f4" font-weight="bold" clip-path="url(#wcR)">17</text>
<rect x="853.8" y="727.80" width="9" height="1.6" fill="#a9a9a9"/>
<rect x="1386.3" y="727.80" width="9.4" height="1.6" fill="#a9a9a9"/>
<text x="854.20" y="733.00" font-size="12.4" text-anchor="end" fill="#f4f4f4" font-weight="bold" clip-path="url(#wcR)">18</text>
<rect x="853.8" y="742.95" width="9" height="1.6" fill="#a9a9a9"/>
<rect x="1386.3" y="742.95" width="9.4" height="1.6" fill="#a9a9a9"/>
<text x="854.20" y="748.15" font-size="12.4" text-anchor="end" fill="#f4f4f4" font-weight="bold" clip-path="url(#wcR)">19</text>
<rect x="853.8" y="758.10" width="9" height="1.6" fill="#a9a9a9"/>
<rect x="1386.3" y="758.10" width="9.4" height="1.6" fill="#a9a9a9"/>
<text x="854.20" y="763.30" font-size="12.4" text-anchor="end" fill="#f4f4f4" font-weight="bold" clip-path="url(#wcR)">20</text>
<rect x="853.8" y="773.25" width="9" height="1.6" fill="#a9a9a9"/>
<rect x="1386.3" y="773.25" width="9.4" height="1.6" fill="#a9a9a9"/>
<text x="854.20" y="778.45" font-size="12.4" text-anchor="end" fill="#f4f4f4" font-weight="bold" clip-path="url(#wcR)">21</text>
<rect x="853.8" y="788.40" width="9" height="1.6" fill="#a9a9a9"/>
<rect x="1386.3" y="788.40" width="9.4" height="1.6" fill="#a9a9a9"/>
<text x="854.20" y="793.60" font-size="12.4" text-anchor="end" fill="#f4f4f4" font-weight="bold" clip-path="url(#wcR)">22</text>
<rect x="853.8" y="803.55" width="9" height="1.6" fill="#a9a9a9"/>
<rect x="1386.3" y="803.55" width="9.4" height="1.6" fill="#a9a9a9"/>
<text x="854.20" y="808.75" font-size="12.4" text-anchor="end" fill="#f4f4f4" font-weight="bold" clip-path="url(#wcR)">23</text>
<rect x="903.80" y="92.7" width="1.6" height="9.6" fill="#a9a9a9"/>
<rect x="903.80" y="810.2" width="1.6" height="6.2" fill="#a9a9a9"/>
<text x="905.90" y="90.20" font-size="12.4" text-anchor="middle" fill="#f4f4f4" font-weight="bold" letter-spacing="-0.3">97</text>
<text x="905.90" y="830.20" font-size="12.4" text-anchor="middle" fill="#f4f4f4" font-weight="bold" letter-spacing="-0.3">97</text>
<rect x="981.92" y="92.7" width="1.6" height="9.6" fill="#a9a9a9"/>
<rect x="981.92" y="810.2" width="1.6" height="6.2" fill="#a9a9a9"/>
<text x="984.02" y="90.20" font-size="12.4" text-anchor="middle" fill="#f4f4f4" font-weight="bold" letter-spacing="-0.3">98</text>
<text x="984.02" y="830.20" font-size="12.4" text-anchor="middle" fill="#f4f4f4" font-weight="bold" letter-spacing="-0.3">98</text>
<rect x="1060.04" y="92.7" width="1.6" height="9.6" fill="#a9a9a9"/>
<rect x="1060.04" y="810.2" width="1.6" height="6.2" fill="#a9a9a9"/>
<text x="1062.14" y="90.20" font-size="12.4" text-anchor="middle" fill="#f4f4f4" font-weight="bold" letter-spacing="-0.3">99</text>
<text x="1062.14" y="830.20" font-size="12.4" text-anchor="middle" fill="#f4f4f4" font-weight="bold" letter-spacing="-0.3">99</text>
<rect x="1138.16" y="92.7" width="1.6" height="9.6" fill="#a9a9a9"/>
<rect x="1138.16" y="810.2" width="1.6" height="6.2" fill="#a9a9a9"/>
<text x="1141.56" y="90.20" font-size="12.4" text-anchor="middle" fill="#f4f4f4" font-weight="bold" letter-spacing="-0.3">100</text>
<text x="1141.56" y="830.20" font-size="12.4" text-anchor="middle" fill="#f4f4f4" font-weight="bold" letter-spacing="-0.3">100</text>
<rect x="1216.28" y="92.7" width="1.6" height="9.6" fill="#a9a9a9"/>
<rect x="1216.28" y="810.2" width="1.6" height="6.2" fill="#a9a9a9"/>
<text x="1219.68" y="90.20" font-size="12.4" text-anchor="middle" fill="#f4f4f4" font-weight="bold" letter-spacing="-0.3">101</text>
<text x="1219.68" y="830.20" font-size="12.4" text-anchor="middle" fill="#f4f4f4" font-weight="bold" letter-spacing="-0.3">101</text>
<rect x="1294.40" y="92.7" width="1.6" height="9.6" fill="#a9a9a9"/>
<rect x="1294.40" y="810.2" width="1.6" height="6.2" fill="#a9a9a9"/>
<text x="1297.80" y="90.20" font-size="12.4" text-anchor="middle" fill="#f4f4f4" font-weight="bold" letter-spacing="-0.3">102</text>
<text x="1297.80" y="830.20" font-size="12.4" text-anchor="middle" fill="#f4f4f4" font-weight="bold" letter-spacing="-0.3">102</text>
<rect x="1372.52" y="92.7" width="1.6" height="9.6" fill="#a9a9a9"/>
<rect x="1372.52" y="810.2" width="1.6" height="6.2" fill="#a9a9a9"/>
<text x="1375.92" y="90.20" font-size="12.4" text-anchor="middle" fill="#f4f4f4" font-weight="bold" letter-spacing="-0.3">103</text>
<text x="1375.92" y="830.20" font-size="12.4" text-anchor="middle" fill="#f4f4f4" font-weight="bold" letter-spacing="-0.3">103</text>
<rect x="857.0" y="247.6" width="5.4" height="65.00000000000003" fill="url(#acbR1)"/>
<rect x="1385.5" y="247.6" width="5.6" height="65.00000000000003" fill="url(#acbR2)"/>
<rect x="1364.2" y="121.00" width="10.4" height="4.01" fill="#dba700"/><rect x="1364.2" y="124.71" width="10.4" height="4.01" fill="#db9000"/><rect x="1364.2" y="128.41" width="10.4" height="4.01" fill="#db7900"/><rect x="1364.2" y="132.12" width="10.4" height="4.01" fill="#db5c00"/><rect x="1364.2" y="135.82" width="10.4" height="4.01" fill="#db3f00"/><rect x="1364.2" y="139.53" width="10.4" height="4.01" fill="#db2300"/><rect x="1364.2" y="143.24" width="10.4" height="4.01" fill="#db0600"/><rect x="1364.2" y="146.94" width="10.4" height="4.01" fill="#c71200"/><rect x="1364.2" y="150.65" width="10.4" height="4.01" fill="#ad2b00"/><rect x="1364.2" y="154.36" width="10.4" height="4.01" fill="#934300"/><rect x="1364.2" y="158.06" width="10.4" height="4.01" fill="#795c00"/><rect x="1364.2" y="161.77" width="10.4" height="4.01" fill="#5f7300"/><rect x="1364.2" y="165.47" width="10.4" height="4.01" fill="#458700"/><rect x="1364.2" y="169.18" width="10.4" height="4.01" fill="#2b9d00"/><rect x="1364.2" y="172.89" width="10.4" height="4.01" fill="#11b200"/><rect x="1364.2" y="176.59" width="10.4" height="4.01" fill="#00bb0a"/><rect x="1364.2" y="180.30" width="10.4" height="4.01" fill="#00ac29"/><rect x="1364.2" y="184.01" width="10.4" height="4.01" fill="#009c48"/><rect x="1364.2" y="187.71" width="10.4" height="4.01" fill="#008d67"/><rect x="1364.2" y="191.42" width="10.4" height="4.01" fill="#007e87"/><rect x="1364.2" y="195.12" width="10.4" height="4.01" fill="#00729a"/><rect x="1364.2" y="198.83" width="10.4" height="4.01" fill="#0068a8"/><rect x="1364.2" y="202.54" width="10.4" height="4.01" fill="#005db6"/><rect x="1364.2" y="206.24" width="10.4" height="4.01" fill="#0053c4"/><rect x="1364.2" y="209.95" width="10.4" height="4.01" fill="#0049d1"/><rect x="1364.2" y="213.66" width="10.4" height="4.01" fill="#003cc0"/><rect x="1364.2" y="217.36" width="10.4" height="4.01" fill="#002fac"/><rect x="1364.2" y="221.07" width="10.4" height="4.01" fill="#002198"/><rect x="1364.2" y="224.77" width="10.4" height="4.01" fill="#001483"/><rect x="1364.2" y="228.48" width="10.4" height="4.01" fill="#000d74"/><rect x="1364.2" y="232.19" width="10.4" height="4.01" fill="#000867"/><rect x="1364.2" y="235.89" width="10.4" height="4.01" fill="#000259"/>
<rect x="1363.6000000000001" y="121" width="1" height="119" fill="#8a8a8a"/>
<text x="1349.90" y="127.00" font-size="12.4" text-anchor="end" fill="#f4f4f4" font-weight="bold" letter-spacing="-0.4">Max</text>
<text x="1349.90" y="245.20" font-size="12.4" text-anchor="end" fill="#f4f4f4" font-weight="bold" >0</text>
<rect x="1353.6000000000001" y="239" width="11" height="1.5" fill="#a9a9a9"/>
<rect x="1335.2" y="247.2" width="47" height="14.6" fill="#0b7f0b"/><text x="1360.20" y="258.10" font-size="12.2" text-anchor="middle" fill="#ffffff" font-weight="bold" letter-spacing="-0.3">Auto</text>
<rect x="1364.2" y="475.20" width="10.4" height="4.00" fill="#dba700"/><rect x="1364.2" y="478.90" width="10.4" height="4.00" fill="#db9000"/><rect x="1364.2" y="482.60" width="10.4" height="4.00" fill="#db7900"/><rect x="1364.2" y="486.30" width="10.4" height="4.00" fill="#db5c00"/><rect x="1364.2" y="490.00" width="10.4" height="4.00" fill="#db3f00"/><rect x="1364.2" y="493.70" width="10.4" height="4.00" fill="#db2300"/><rect x="1364.2" y="497.40" width="10.4" height="4.00" fill="#db0600"/><rect x="1364.2" y="501.10" width="10.4" height="4.00" fill="#c71200"/><rect x="1364.2" y="504.80" width="10.4" height="4.00" fill="#ad2b00"/><rect x="1364.2" y="508.50" width="10.4" height="4.00" fill="#934300"/><rect x="1364.2" y="512.20" width="10.4" height="4.00" fill="#795c00"/><rect x="1364.2" y="515.90" width="10.4" height="4.00" fill="#5f7300"/><rect x="1364.2" y="519.60" width="10.4" height="4.00" fill="#458700"/><rect x="1364.2" y="523.30" width="10.4" height="4.00" fill="#2b9d00"/><rect x="1364.2" y="527.00" width="10.4" height="4.00" fill="#11b200"/><rect x="1364.2" y="530.70" width="10.4" height="4.00" fill="#00bb0a"/><rect x="1364.2" y="534.40" width="10.4" height="4.00" fill="#00ac29"/><rect x="1364.2" y="538.10" width="10.4" height="4.00" fill="#009c48"/><rect x="1364.2" y="541.80" width="10.4" height="4.00" fill="#008d67"/><rect x="1364.2" y="545.50" width="10.4" height="4.00" fill="#007e87"/><rect x="1364.2" y="549.20" width="10.4" height="4.00" fill="#00729a"/><rect x="1364.2" y="552.90" width="10.4" height="4.00" fill="#0068a8"/><rect x="1364.2" y="556.60" width="10.4" height="4.00" fill="#005db6"/><rect x="1364.2" y="560.30" width="10.4" height="4.00" fill="#0053c4"/><rect x="1364.2" y="564.00" width="10.4" height="4.00" fill="#0049d1"/><rect x="1364.2" y="567.70" width="10.4" height="4.00" fill="#003cc0"/><rect x="1364.2" y="571.40" width="10.4" height="4.00" fill="#002fac"/><rect x="1364.2" y="575.10" width="10.4" height="4.00" fill="#002198"/><rect x="1364.2" y="578.80" width="10.4" height="4.00" fill="#001483"/><rect x="1364.2" y="582.50" width="10.4" height="4.00" fill="#000d74"/><rect x="1364.2" y="586.20" width="10.4" height="4.00" fill="#000867"/><rect x="1364.2" y="589.90" width="10.4" height="4.00" fill="#000259"/>
<rect x="1363.6000000000001" y="475.2" width="1" height="118.6" fill="#8a8a8a"/>
<text x="1350.60" y="488.80" font-size="12.4" text-anchor="end" fill="#f4f4f4" font-weight="bold" letter-spacing="-0.35">-70</text>
<rect x="1353.0" y="483.7" width="11.4" height="1.4" fill="#a9a9a9"/>
<text x="1350.60" y="507.60" font-size="12.4" text-anchor="end" fill="#f4f4f4" font-weight="bold" letter-spacing="-0.35">-75</text>
<rect x="1353.0" y="502.5" width="11.4" height="1.4" fill="#a9a9a9"/>
<text x="1350.60" y="526.80" font-size="12.4" text-anchor="end" fill="#f4f4f4" font-weight="bold" letter-spacing="-0.35">-80</text>
<rect x="1353.0" y="521.6999999999999" width="11.4" height="1.4" fill="#a9a9a9"/>
<text x="1350.60" y="546.80" font-size="12.4" text-anchor="end" fill="#f4f4f4" font-weight="bold" letter-spacing="-0.35">-85</text>
<rect x="1353.0" y="541.6999999999999" width="11.4" height="1.4" fill="#a9a9a9"/>
<text x="1350.60" y="566.00" font-size="12.4" text-anchor="end" fill="#f4f4f4" font-weight="bold" letter-spacing="-0.35">-90</text>
<rect x="1353.0" y="560.9" width="11.4" height="1.4" fill="#a9a9a9"/>
<text x="1350.60" y="585.00" font-size="12.4" text-anchor="end" fill="#f4f4f4" font-weight="bold" letter-spacing="-0.35">-95</text>
<rect x="1353.0" y="579.9" width="11.4" height="1.4" fill="#a9a9a9"/>
<rect x="1335.2" y="600.8" width="47" height="14.6" fill="#0b7f0b"/><text x="1360.20" y="611.70" font-size="12.2" text-anchor="middle" fill="#ffffff" font-weight="bold" letter-spacing="-0.3">Auto</text>
<text transform="translate(1332 534) rotate(-90)" font-size="12.4" text-anchor="middle" fill="#f4f4f4" font-weight="normal">dBm</text>
<text x="1123.40" y="80.20" font-size="12.4" text-anchor="middle" fill="#f4f4f4" font-weight="bold" letter-spacing="-0.3">MHz</text>
<text x="1123.40" y="839.80" font-size="12.4" text-anchor="middle" fill="#f4f4f4" font-weight="bold" letter-spacing="-0.3">MHz</text>
<text transform="translate(829.4 277.6) rotate(-90)" font-size="12.4" text-anchor="middle" fill="#f4f4f4" font-weight="normal">dBm</text>
<text transform="translate(837.4 632) rotate(-90)" font-size="12.4" text-anchor="middle" fill="#f4f4f4" font-weight="bold">sec</text></svg>
</div></div>
</body></html>
